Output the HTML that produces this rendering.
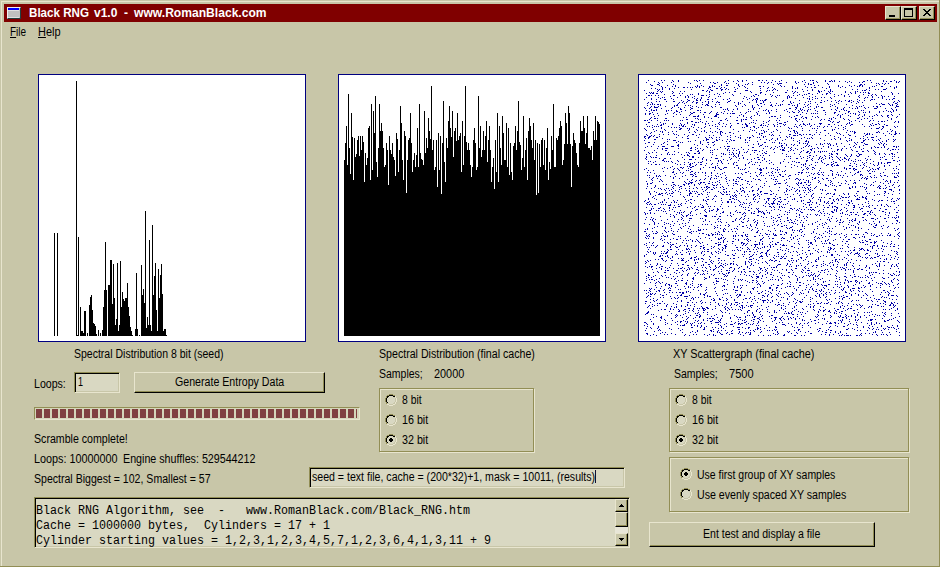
<!DOCTYPE html>
<html><head><meta charset="utf-8">
<style>
*{margin:0;padding:0;box-sizing:border-box}
html,body{width:940px;height:567px;overflow:hidden;background:#C8C6A8}
body{position:relative;font-family:"Liberation Sans",sans-serif;font-size:11px;color:#000}
.a{position:absolute}
.t{position:absolute;white-space:pre;font-size:12px;line-height:14px;transform-origin:0 0}
.raised{position:absolute;border:1px solid;border-color:#E8E5CE #000 #000 #E8E5CE;box-shadow:inset -1px -1px 0 #928E55;background:#C8C6A8}
.sunken{position:absolute;border:1px solid;border-color:#928E55 #E8E5CE #E8E5CE #928E55;box-shadow:inset 1px 1px 0 #000,inset -1px -1px 0 #C8C6A8;background:#D9D8C2}
.dk{position:absolute;border:1px solid #928E55}
.lt{position:absolute;border:1px solid #E8E5CE}
.box{position:absolute;border:1px solid #000080;background:#fff;width:268px;height:268px}
</style></head><body>
<!-- window frame -->
<div class="a" style="left:1px;top:1px;width:938px;height:1px;background:#E8E5CE"></div>
<div class="a" style="left:1px;top:1px;width:1px;height:566px;background:#E8E5CE"></div>
<div class="a" style="left:939px;top:0;width:1px;height:567px;background:#928E55"></div>
<div class="a" style="left:0;top:566px;width:940px;height:1px;background:#928E55"></div>
<!-- title bar -->
<div class="a" style="left:4px;top:4px;width:933px;height:18px;background:#800000"></div>
<div id="icon" class="a" style="left:7px;top:7px;width:14px;height:12px;background:#C0C0C0;border:1px solid;border-color:#F0F0F0 #204040 #204040 #F0F0F0"></div>
<div class="a" style="left:8px;top:8px;width:11px;height:2px;background:#0000FF"></div>
<div class="a" style="left:8px;top:10px;width:11px;height:1px;background:#E0E0E0"></div>
<div class="a" style="left:8px;top:17px;width:11px;height:1px;background:#E0E0E0"></div>
<div class="raised" style="left:885px;top:6px;width:16px;height:14px"></div>
<div class="a" style="left:889px;top:15px;width:6px;height:2px;background:#000"></div>
<div class="raised" style="left:901px;top:6px;width:16px;height:14px"></div>
<div class="a" style="left:904px;top:8px;width:9px;height:9px;border:1px solid #000;border-top-width:2px"></div>
<div class="raised" style="left:919px;top:6px;width:16px;height:14px"></div>
<svg class="a" style="left:923px;top:9px" width="8" height="7"><path d="M0 0h1v1h-1zM1 0h1v1h-1zM6 0h1v1h-1zM7 0h1v1h-1zM1 1h1v1h-1zM2 1h1v1h-1zM5 1h1v1h-1zM6 1h1v1h-1zM2 2h1v1h-1zM3 2h1v1h-1zM4 2h1v1h-1zM5 2h1v1h-1zM3 3h1v1h-1zM4 3h1v1h-1zM2 4h1v1h-1zM3 4h1v1h-1zM4 4h1v1h-1zM5 4h1v1h-1zM1 5h1v1h-1zM2 5h1v1h-1zM5 5h1v1h-1zM6 5h1v1h-1zM0 6h1v1h-1zM1 6h1v1h-1zM6 6h1v1h-1zM7 6h1v1h-1z" fill="#000" shape-rendering="crispEdges"/></svg>
<!-- menu -->

<!-- chart boxes -->
<div class="box" style="left:38px;top:74px"><svg id="c1" width="266" height="266" style="position:absolute;left:0;top:0"><path d="M15 158h1V261h-1zM18 158h1V261h-1zM37 6h1V261h-1zM38 260h1V261h-1zM39 162h1V261h-1zM41 232h1V261h-1zM42 256h1V261h-1zM43 256h1V261h-1zM44 258h1V261h-1zM45 236h1V261h-1zM46 236h1V261h-1zM48 258h1V261h-1zM50 230h1V261h-1zM51 222h1V261h-1zM52 220h1V261h-1zM53 235h1V261h-1zM54 248h1V261h-1zM55 249h1V261h-1zM56 251h1V261h-1zM57 259h1V261h-1zM59 255h1V261h-1zM61 258h1V261h-1zM63 255h1V261h-1zM64 232h1V261h-1zM65 215h1V261h-1zM66 167h1V261h-1zM67 215h1V261h-1zM69 210h1V261h-1zM70 210h1V261h-1zM71 185h1V261h-1zM72 185h1V261h-1zM73 229h1V261h-1zM74 189h1V261h-1zM75 223h1V261h-1zM76 250h1V261h-1zM77 244h1V261h-1zM78 188h1V261h-1zM79 256h1V261h-1zM80 250h1V261h-1zM81 186h1V261h-1zM82 232h1V261h-1zM83 217h1V261h-1zM84 224h1V261h-1zM85 226h1V261h-1zM86 223h1V261h-1zM87 223h1V261h-1zM88 208h1V261h-1zM89 232h1V261h-1zM90 241h1V261h-1zM91 252h1V261h-1zM92 256h1V261h-1zM93 260h1V261h-1zM96 254h1V261h-1zM97 198h1V261h-1zM98 254h1V261h-1zM100 260h1V261h-1zM102 190h1V261h-1zM103 220h1V261h-1zM104 214h1V261h-1zM105 228h1V261h-1zM106 136h1V261h-1zM107 253h1V261h-1zM108 242h1V261h-1zM109 250h1V261h-1zM110 165h1V261h-1zM111 250h1V261h-1zM112 256h1V261h-1zM113 150h1V261h-1zM114 220h1V261h-1zM115 201h1V261h-1zM116 188h1V261h-1zM117 235h1V261h-1zM118 256h1V261h-1zM119 194h1V261h-1zM120 223h1V261h-1zM121 200h1V261h-1zM122 189h1V261h-1zM123 219h1V261h-1zM124 256h1V261h-1zM125 254h1V261h-1zM126 254h1V261h-1zM127 260h1V261h-1z" fill="#000"/></svg></div>
<div class="box" style="left:338px;top:74px"><svg id="c2" width="266" height="266" style="position:absolute;left:0;top:0"><path d="M5 261V85H6V68H7V51H8V90H9V19H10V73H11V99H12V38H13V62H14V105H15V63H16V82H17V79H18V65H19V61H20V81H21V61H22V75H23V61H24V67H25V107H26V78H27V90H28V83H29V53H30V51H31V105H32V29H33V95H34V36H35V58H36V21H37V87H38V102H39V73H40V29H41V56H42V48H43V56H44V73H45V92H46V90H47V68H48V75H49V110H50V61H51V75H52V79H53V68H54V82H55V85H56V101H57V58H58V64H59V97H60V75H61V31H62V48H63V85H64V105H65V56H66V61H67V118H68V85H69V65H70V63H71V38H72V68H73V97H74V85H75V78H76V92H77V80H78V53H79V92H80V29H81V78H82V84H83V85H84V90H85V36H86V78H87V63H88V73H89V43H90V56H91V64H92V11H93V75H94V65H95V95H96V92H97V65H98V112H99V58H100V95H101V61H102V119H103V68H104V26H105V87H106V107H107V63H108V73H109V46H110V31H111V53H112V62H113V36H114V82H115V56H116V53H117V66H118V38H119V65H120V61H121V58H122V97H123V46H124V90H125V61H126V11H127V67H128V75H129V68H130V75H131V90H132V102H133V92H134V65H135V53H136V68H137V95H138V92H139V21H140V73H141V51H142V82H143V75H144V56H145V75H146V61H147V46H148V87H149V65H150V51H151V75H152V107H153V92H154V83H155V114H156V65H157V97H158V38H159V107H160V51H161V73H162V90H163V41H164V58H165V85H166V85H167V48H168V92H169V53H170V100H171V68H172V97H173V105H174V71H175V68H176V51H177V75H178V56H179V26H180V67H181V70H182V95H183V83H184V41H185V92H186V75H187V63H188V105H189V56H190V43H191V51H192V65H193V73H194V48H195V85H196V65H197V120H198V68H199V118H200V69H201V92H202V65H203V63H204V90H205V65H206V95H207V73H208V53H209V105H210V87H211V94H212V61H213V75H214V29H215V92H216V92H217V63H218V65H219V61H220V53H221V46H222V51H223V90H224V85H225V69H226V38H227V48H228V69H229V31H230V38H231V69H232V112H233V71H234V58H235V65H236V68H237V78H238V90H239V92H240V68H241V46H242V56H243V56H244V41H245V53H246V69H247V58H248V41H249V73H250V73H251V75H252V71H253V85H254V56H255V65H256V41H257V65H258V46H259V47H260V49H261V261z" fill="#000"/></svg></div>
<div class="box" style="left:638px;top:74px"><svg id="c3" width="266" height="266" style="position:absolute;left:0;top:0"><path d="M9 5h1v1h-1zm13 0h1v1h-1zm3 0h1v1h-1zm8 0h1v1h-1zm6 0h1v1h-1zm16 0h1v1h-1zm2 0h1v1h-1zm3 0h1v1h-1zm4 0h1v1h-1zm25 0h1v1h-1zm9 0h1v1h-1zm5 0h1v1h-1zm4 0h1v1h-1zm12 0h1v1h-1zm1 0h1v1h-1zm3 0h1v1h-1zm4 0h1v1h-1zm6 0h1v1h-1zm9 0h1v1h-1zm23 0h1v1h-1zm6 0h1v1h-1zm2 0h1v1h-1zm1 0h1v1h-1zm12 0h1v1h-1zm6 0h1v1h-1zm3 0h1v1h-1zm33 0h1v1h-1zm3 0h1v1h-1zm13 0h1v1h-1zm11 0h1v1h-1zm-240 1h1v1h-1zm19 0h1v1h-1zm5 0h1v1h-1zm19 0h1v1h-1zm28 0h1v1h-1zm8 0h1v1h-1zm5 0h1v1h-1zm4 0h1v1h-1zm33 0h1v1h-1zm4 0h1v1h-1zm16 0h1v1h-1zm7 0h1v1h-1zm14 0h1v1h-1zm9 0h1v1h-1zm4 0h1v1h-1zm1 0h1v1h-1zm2 0h1v1h-1zm2 0h1v1h-1zm5 0h1v1h-1zm6 0h1v1h-1zm4 0h1v1h-1zm14 0h1v1h-1zm1 0h1v1h-1zm19 0h1v1h-1zm3 0h1v1h-1zm4 0h1v1h-1zm1 0h1v1h-1zm5 0h1v1h-1zm3 0h1v1h-1zm-253 1h1v1h-1zm12 0h1v1h-1zm4 0h1v1h-1zm9 0h1v1h-1zm17 0h1v1h-1zm22 0h1v1h-1zm3 0h1v1h-1zm4 0h1v1h-1zm7 0h1v1h-1zm28 0h1v1h-1zm9 0h1v1h-1zm3 0h1v1h-1zm4 0h1v1h-1zm3 0h1v1h-1zm15 0h1v1h-1zm9 0h1v1h-1zm3 0h1v1h-1zm7 0h1v1h-1zm8 0h1v1h-1zm4 0h1v1h-1zm30 0h1v1h-1zm4 0h1v1h-1zm8 0h1v1h-1zm3 0h1v1h-1zm9 0h1v1h-1zm25 0h1v1h-1zm2 0h1v1h-1zm-239 1h1v1h-1zm31 0h1v1h-1zm10 0h1v1h-1zm14 0h1v1h-1zm1 0h1v1h-1zm11 0h1v1h-1zm2 0h1v1h-1zm8 0h1v1h-1zm12 0h1v1h-1zm19 0h1v1h-1zm10 0h1v1h-1zm2 0h1v1h-1zm1 0h1v1h-1zm1 0h1v1h-1zm15 0h1v1h-1zm12 0h1v1h-1zm5 0h1v1h-1zm14 0h1v1h-1zm49 0h1v1h-1zm2 0h1v1h-1zm4 0h1v1h-1zm3 0h1v1h-1zm3 0h1v1h-1zm-238 1h1v1h-1zm7 0h1v1h-1zm1 0h1v1h-1zm15 0h1v1h-1zm48 0h1v1h-1zm17 0h1v1h-1zm7 0h1v1h-1zm2 0h1v1h-1zm5 0h1v1h-1zm21 0h1v1h-1zm5 0h1v1h-1zm26 0h1v1h-1zm4 0h1v1h-1zm2 0h1v1h-1zm1 0h1v1h-1zm17 0h1v1h-1zm32 0h1v1h-1zm1 0h1v1h-1zm3 0h1v1h-1zm15 0h1v1h-1zm5 0h1v1h-1zm-233 1h1v1h-1zm1 0h1v1h-1zm7 0h1v1h-1zm8 0h1v1h-1zm8 0h1v1h-1zm22 0h1v1h-1zm4 0h1v1h-1zm11 0h1v1h-1zm9 0h1v1h-1zm5 0h1v1h-1zm1 0h1v1h-1zm11 0h1v1h-1zm4 0h1v1h-1zm38 0h1v1h-1zm34 0h1v1h-1zm4 0h1v1h-1zm20 0h1v1h-1zm11 0h1v1h-1zm5 0h1v1h-1zm5 0h1v1h-1zm1 0h1v1h-1zm2 0h1v1h-1zm14 0h1v1h-1zm-215 1h1v1h-1zm11 0h1v1h-1zm3 0h1v1h-1zm20 0h1v1h-1zm2 0h1v1h-1zm2 0h1v1h-1zm4 0h1v1h-1zm6 0h1v1h-1zm3 0h1v1h-1zm2 0h1v1h-1zm5 0h1v1h-1zm20 0h1v1h-1zm5 0h1v1h-1zm15 0h1v1h-1zm1 0h1v1h-1zm3 0h1v1h-1zm18 0h1v1h-1zm3 0h1v1h-1zm8 0h1v1h-1zm13 0h1v1h-1zm24 0h1v1h-1zm9 0h1v1h-1zm4 0h1v1h-1zm9 0h1v1h-1zm6 0h1v1h-1zm2 0h1v1h-1zm3 0h1v1h-1zm10 0h1v1h-1zm2 0h1v1h-1zm7 0h1v1h-1zm1 0h1v1h-1zm8 0h1v1h-1zm6 0h1v1h-1zm-234 1h1v1h-1zm3 0h1v1h-1zm13 0h1v1h-1zm5 0h1v1h-1zm1 0h1v1h-1zm3 0h1v1h-1zm3 0h1v1h-1zm2 0h1v1h-1zm4 0h1v1h-1zm3 0h1v1h-1zm10 0h1v1h-1zm1 0h1v1h-1zm11 0h1v1h-1zm3 0h1v1h-1zm10 0h1v1h-1zm11 0h1v1h-1zm23 0h1v1h-1zm4 0h1v1h-1zm20 0h1v1h-1zm5 0h1v1h-1zm10 0h1v1h-1zm4 0h1v1h-1zm3 0h1v1h-1zm1 0h1v1h-1zm7 0h1v1h-1zm7 0h1v1h-1zm11 0h1v1h-1zm5 0h1v1h-1zm24 0h1v1h-1zm25 0h1v1h-1zm2 0h1v1h-1zm-245 1h1v1h-1zm4 0h1v1h-1zm7 0h1v1h-1zm7 0h1v1h-1zm5 0h1v1h-1zm34 0h1v1h-1zm8 0h1v1h-1zm1 0h1v1h-1zm3 0h1v1h-1zm6 0h1v1h-1zm11 0h1v1h-1zm10 0h1v1h-1zm13 0h1v1h-1zm7 0h1v1h-1zm7 0h1v1h-1zm18 0h1v1h-1zm3 0h1v1h-1zm2 0h1v1h-1zm29 0h1v1h-1zm43 0h1v1h-1zm17 0h1v1h-1zm8 0h1v1h-1zm-237 1h1v1h-1zm2 0h1v1h-1zm3 0h1v1h-1zm7 0h1v1h-1zm22 0h1v1h-1zm19 0h1v1h-1zm11 0h1v1h-1zm1 0h1v1h-1zm3 0h1v1h-1zm3 0h1v1h-1zm7 0h1v1h-1zm38 0h1v1h-1zm2 0h1v1h-1zm27 0h1v1h-1zm10 0h1v1h-1zm18 0h1v1h-1zm22 0h1v1h-1zm5 0h1v1h-1zm9 0h1v1h-1zm9 0h1v1h-1zm3 0h1v1h-1zm5 0h1v1h-1zm1 0h1v1h-1zm1 0h1v1h-1zm-241 1h1v1h-1zm14 0h1v1h-1zm44 0h1v1h-1zm1 0h1v1h-1zm4 0h1v1h-1zm4 0h1v1h-1zm1 0h1v1h-1zm9 0h1v1h-1zm24 0h1v1h-1zm1 0h1v1h-1zm1 0h1v1h-1zm13 0h1v1h-1zm7 0h1v1h-1zm2 0h1v1h-1zm3 0h1v1h-1zm5 0h1v1h-1zm10 0h1v1h-1zm20 0h1v1h-1zm5 0h1v1h-1zm6 0h1v1h-1zm6 0h1v1h-1zm6 0h1v1h-1zm32 0h1v1h-1zm2 0h1v1h-1zm1 0h1v1h-1zm4 0h1v1h-1zm-212 1h1v1h-1zm3 0h1v1h-1zm2 0h1v1h-1zm10 0h1v1h-1zm8 0h1v1h-1zm4 0h1v1h-1zm22 0h1v1h-1zm3 0h1v1h-1zm25 0h1v1h-1zm1 0h1v1h-1zm15 0h1v1h-1zm16 0h1v1h-1zm26 0h1v1h-1zm3 0h1v1h-1zm8 0h1v1h-1zm15 0h1v1h-1zm1 0h1v1h-1zm2 0h1v1h-1zm7 0h1v1h-1zm2 0h1v1h-1zm2 0h1v1h-1zm13 0h1v1h-1zm10 0h1v1h-1zm2 0h1v1h-1zm24 0h1v1h-1zm-232 1h1v1h-1zm2 0h1v1h-1zm2 0h1v1h-1zm8 0h1v1h-1zm12 0h1v1h-1zm36 0h1v1h-1zm16 0h1v1h-1zm4 0h1v1h-1zm22 0h1v1h-1zm9 0h1v1h-1zm1 0h1v1h-1zm12 0h1v1h-1zm12 0h1v1h-1zm1 0h1v1h-1zm8 0h1v1h-1zm3 0h1v1h-1zm22 0h1v1h-1zm10 0h1v1h-1zm16 0h1v1h-1zm5 0h1v1h-1zm5 0h1v1h-1zm5 0h1v1h-1zm3 0h1v1h-1zm2 0h1v1h-1zm3 0h1v1h-1zm23 0h1v1h-1zm-245 1h1v1h-1zm4 0h1v1h-1zm2 0h1v1h-1zm1 0h1v1h-1zm3 0h1v1h-1zm1 0h1v1h-1zm15 0h1v1h-1zm7 0h1v1h-1zm3 0h1v1h-1zm16 0h1v1h-1zm19 0h1v1h-1zm6 0h1v1h-1zm17 0h1v1h-1zm20 0h1v1h-1zm33 0h1v1h-1zm15 0h1v1h-1zm1 0h1v1h-1zm8 0h1v1h-1zm9 0h1v1h-1zm1 0h1v1h-1zm3 0h1v1h-1zm21 0h1v1h-1zm4 0h1v1h-1zm13 0h1v1h-1zm1 0h1v1h-1zm23 0h1v1h-1zm6 0h1v1h-1zm-234 1h1v1h-1zm26 0h1v1h-1zm2 0h1v1h-1zm6 0h1v1h-1zm11 0h1v1h-1zm5 0h1v1h-1zm5 0h1v1h-1zm13 0h1v1h-1zm23 0h1v1h-1zm1 0h1v1h-1zm9 0h1v1h-1zm5 0h1v1h-1zm29 0h1v1h-1zm5 0h1v1h-1zm2 0h1v1h-1zm6 0h1v1h-1zm10 0h1v1h-1zm4 0h1v1h-1zm8 0h1v1h-1zm7 0h1v1h-1zm7 0h1v1h-1zm15 0h1v1h-1zm9 0h1v1h-1zm3 0h1v1h-1zm17 0h1v1h-1zm-244 1h1v1h-1zm1 0h1v1h-1zm2 0h1v1h-1zm4 0h1v1h-1zm3 0h1v1h-1zm15 0h1v1h-1zm1 0h1v1h-1zm6 0h1v1h-1zm7 0h1v1h-1zm14 0h1v1h-1zm1 0h1v1h-1zm1 0h1v1h-1zm3 0h1v1h-1zm27 0h1v1h-1zm20 0h1v1h-1zm5 0h1v1h-1zm14 0h1v1h-1zm5 0h1v1h-1zm2 0h1v1h-1zm9 0h1v1h-1zm5 0h1v1h-1zm4 0h1v1h-1zm5 0h1v1h-1zm36 0h1v1h-1zm6 0h1v1h-1zm15 0h1v1h-1zm9 0h1v1h-1zm3 0h1v1h-1zm5 0h1v1h-1zm5 0h1v1h-1zm-211 1h1v1h-1zm15 0h1v1h-1zm3 0h1v1h-1zm6 0h1v1h-1zm15 0h1v1h-1zm9 0h1v1h-1zm2 0h1v1h-1zm24 0h1v1h-1zm7 0h1v1h-1zm3 0h1v1h-1zm17 0h1v1h-1zm4 0h1v1h-1zm12 0h1v1h-1zm2 0h1v1h-1zm20 0h1v1h-1zm6 0h1v1h-1zm19 0h1v1h-1zm10 0h1v1h-1zm5 0h1v1h-1zm9 0h1v1h-1zm14 0h1v1h-1zm10 0h1v1h-1zm2 0h1v1h-1zm4 0h1v1h-1zm6 0h1v1h-1zm-248 1h1v1h-1zm12 0h1v1h-1zm4 0h1v1h-1zm2 0h1v1h-1zm13 0h1v1h-1zm8 0h1v1h-1zm3 0h1v1h-1zm4 0h1v1h-1zm9 0h1v1h-1zm7 0h1v1h-1zm38 0h1v1h-1zm30 0h1v1h-1zm11 0h1v1h-1zm2 0h1v1h-1zm2 0h1v1h-1zm12 0h1v1h-1zm9 0h1v1h-1zm9 0h1v1h-1zm3 0h1v1h-1zm6 0h1v1h-1zm29 0h1v1h-1zm6 0h1v1h-1zm2 0h1v1h-1zm5 0h1v1h-1zm6 0h1v1h-1zm4 0h1v1h-1zm-231 1h1v1h-1zm9 0h1v1h-1zm11 0h1v1h-1zm23 0h1v1h-1zm3 0h1v1h-1zm4 0h1v1h-1zm14 0h1v1h-1zm14 0h1v1h-1zm14 0h1v1h-1zm6 0h1v1h-1zm7 0h1v1h-1zm1 0h1v1h-1zm30 0h1v1h-1zm8 0h1v1h-1zm12 0h1v1h-1zm2 0h1v1h-1zm6 0h1v1h-1zm2 0h1v1h-1zm14 0h1v1h-1zm33 0h1v1h-1zm18 0h1v1h-1zm11 0h1v1h-1zm1 0h1v1h-1zm-250 1h1v1h-1zm7 0h1v1h-1zm5 0h1v1h-1zm8 0h1v1h-1zm1 0h1v1h-1zm8 0h1v1h-1zm14 0h1v1h-1zm9 0h1v1h-1zm4 0h1v1h-1zm7 0h1v1h-1zm1 0h1v1h-1zm4 0h1v1h-1zm11 0h1v1h-1zm4 0h1v1h-1zm20 0h1v1h-1zm6 0h1v1h-1zm2 0h1v1h-1zm2 0h1v1h-1zm8 0h1v1h-1zm1 0h1v1h-1zm43 0h1v1h-1zm3 0h1v1h-1zm45 0h1v1h-1zm14 0h1v1h-1zm1 0h1v1h-1zm2 0h1v1h-1zm12 0h1v1h-1zm3 0h1v1h-1zm3 0h1v1h-1zm-211 1h1v1h-1zm7 0h1v1h-1zm1 0h1v1h-1zm7 0h1v1h-1zm1 0h1v1h-1zm3 0h1v1h-1zm30 0h1v1h-1zm22 0h1v1h-1zm4 0h1v1h-1zm4 0h1v1h-1zm2 0h1v1h-1zm2 0h1v1h-1zm1 0h1v1h-1zm18 0h1v1h-1zm16 0h1v1h-1zm22 0h1v1h-1zm6 0h1v1h-1zm8 0h1v1h-1zm4 0h1v1h-1zm6 0h1v1h-1zm4 0h1v1h-1zm2 0h1v1h-1zm8 0h1v1h-1zm5 0h1v1h-1zm6 0h1v1h-1zm28 0h1v1h-1zm-242 1h1v1h-1zm3 0h1v1h-1zm7 0h1v1h-1zm7 0h1v1h-1zm1 0h1v1h-1zm9 0h1v1h-1zm4 0h1v1h-1zm6 0h1v1h-1zm12 0h1v1h-1zm3 0h1v1h-1zm4 0h1v1h-1zm5 0h1v1h-1zm11 0h1v1h-1zm1 0h1v1h-1zm13 0h1v1h-1zm14 0h1v1h-1zm7 0h1v1h-1zm19 0h1v1h-1zm8 0h1v1h-1zm18 0h1v1h-1zm2 0h1v1h-1zm14 0h1v1h-1zm7 0h1v1h-1zm7 0h1v1h-1zm3 0h1v1h-1zm7 0h1v1h-1zm1 0h1v1h-1zm4 0h1v1h-1zm4 0h1v1h-1zm37 0h1v1h-1zm5 0h1v1h-1zm-251 1h1v1h-1zm3 0h1v1h-1zm28 0h1v1h-1zm3 0h1v1h-1zm4 0h1v1h-1zm6 0h1v1h-1zm4 0h1v1h-1zm1 0h1v1h-1zm5 0h1v1h-1zm6 0h1v1h-1zm8 0h1v1h-1zm2 0h1v1h-1zm1 0h1v1h-1zm8 0h1v1h-1zm7 0h1v1h-1zm4 0h1v1h-1zm11 0h1v1h-1zm7 0h1v1h-1zm7 0h1v1h-1zm7 0h1v1h-1zm20 0h1v1h-1zm3 0h1v1h-1zm12 0h1v1h-1zm10 0h1v1h-1zm5 0h1v1h-1zm1 0h1v1h-1zm15 0h1v1h-1zm15 0h1v1h-1zm7 0h1v1h-1zm4 0h1v1h-1zm31 0h1v1h-1zm4 0h1v1h-1zm-250 1h1v1h-1zm5 0h1v1h-1zm26 0h1v1h-1zm6 0h1v1h-1zm12 0h1v1h-1zm12 0h1v1h-1zm30 0h1v1h-1zm2 0h1v1h-1zm20 0h1v1h-1zm1 0h1v1h-1zm15 0h1v1h-1zm15 0h1v1h-1zm8 0h1v1h-1zm11 0h1v1h-1zm28 0h1v1h-1zm18 0h1v1h-1zm20 0h1v1h-1zm5 0h1v1h-1zm7 0h1v1h-1zm7 0h1v1h-1zm1 0h1v1h-1zm-246 1h1v1h-1zm2 0h1v1h-1zm2 0h1v1h-1zm3 0h1v1h-1zm1 0h1v1h-1zm2 0h1v1h-1zm17 0h1v1h-1zm25 0h1v1h-1zm4 0h1v1h-1zm1 0h1v1h-1zm8 0h1v1h-1zm4 0h1v1h-1zm19 0h1v1h-1zm6 0h1v1h-1zm13 0h1v1h-1zm7 0h1v1h-1zm7 0h1v1h-1zm9 0h1v1h-1zm2 0h1v1h-1zm6 0h1v1h-1zm1 0h1v1h-1zm8 0h1v1h-1zm7 0h1v1h-1zm4 0h1v1h-1zm9 0h1v1h-1zm13 0h1v1h-1zm4 0h1v1h-1zm12 0h1v1h-1zm33 0h1v1h-1zm3 0h1v1h-1zm1 0h1v1h-1zm1 0h1v1h-1zm5 0h1v1h-1zm3 0h1v1h-1zm5 0h1v1h-1zm-250 1h1v1h-1zm13 0h1v1h-1zm14 0h1v1h-1zm2 0h1v1h-1zm1 0h1v1h-1zm8 0h1v1h-1zm3 0h1v1h-1zm2 0h1v1h-1zm15 0h1v1h-1zm2 0h1v1h-1zm1 0h1v1h-1zm27 0h1v1h-1zm10 0h1v1h-1zm7 0h1v1h-1zm6 0h1v1h-1zm12 0h1v1h-1zm1 0h1v1h-1zm4 0h1v1h-1zm3 0h1v1h-1zm2 0h1v1h-1zm12 0h1v1h-1zm2 0h1v1h-1zm3 0h1v1h-1zm10 0h1v1h-1zm25 0h1v1h-1zm20 0h1v1h-1zm11 0h1v1h-1zm27 0h1v1h-1zm2 0h1v1h-1zm4 0h1v1h-1zm-245 1h1v1h-1zm3 0h1v1h-1zm4 0h1v1h-1zm7 0h1v1h-1zm9 0h1v1h-1zm18 0h1v1h-1zm4 0h1v1h-1zm15 0h1v1h-1zm4 0h1v1h-1zm21 0h1v1h-1zm6 0h1v1h-1zm10 0h1v1h-1zm9 0h1v1h-1zm11 0h1v1h-1zm25 0h1v1h-1zm8 0h1v1h-1zm5 0h1v1h-1zm6 0h1v1h-1zm2 0h1v1h-1zm12 0h1v1h-1zm5 0h1v1h-1zm21 0h1v1h-1zm3 0h1v1h-1zm2 0h1v1h-1zm12 0h1v1h-1zm3 0h1v1h-1zm1 0h1v1h-1zm3 0h1v1h-1zm16 0h1v1h-1zm1 0h1v1h-1zm1 0h1v1h-1zm-254 1h1v1h-1zm6 0h1v1h-1zm4 0h1v1h-1zm1 0h1v1h-1zm1 0h1v1h-1zm1 0h1v1h-1zm15 0h1v1h-1zm6 0h1v1h-1zm6 0h1v1h-1zm6 0h1v1h-1zm8 0h1v1h-1zm3 0h1v1h-1zm11 0h1v1h-1zm8 0h1v1h-1zm1 0h1v1h-1zm31 0h1v1h-1zm2 0h1v1h-1zm41 0h1v1h-1zm1 0h1v1h-1zm7 0h1v1h-1zm5 0h1v1h-1zm8 0h1v1h-1zm5 0h1v1h-1zm1 0h1v1h-1zm15 0h1v1h-1zm7 0h1v1h-1zm5 0h1v1h-1zm8 0h1v1h-1zm7 0h1v1h-1zm4 0h1v1h-1zm9 0h1v1h-1zm18 0h1v1h-1zm-250 1h1v1h-1zm4 0h1v1h-1zm12 0h1v1h-1zm10 0h1v1h-1zm9 0h1v1h-1zm11 0h1v1h-1zm1 0h1v1h-1zm35 0h1v1h-1zm10 0h1v1h-1zm16 0h1v1h-1zm6 0h1v1h-1zm30 0h1v1h-1zm1 0h1v1h-1zm6 0h1v1h-1zm4 0h1v1h-1zm14 0h1v1h-1zm23 0h1v1h-1zm6 0h1v1h-1zm9 0h1v1h-1zm3 0h1v1h-1zm2 0h1v1h-1zm8 0h1v1h-1zm9 0h1v1h-1zm1 0h1v1h-1zm1 0h1v1h-1zm9 0h1v1h-1zm6 0h1v1h-1zm-240 1h1v1h-1zm5 0h1v1h-1zm24 0h1v1h-1zm1 0h1v1h-1zm9 0h1v1h-1zm33 0h1v1h-1zm2 0h1v1h-1zm2 0h1v1h-1zm6 0h1v1h-1zm4 0h1v1h-1zm11 0h1v1h-1zm5 0h1v1h-1zm13 0h1v1h-1zm10 0h1v1h-1zm10 0h1v1h-1zm9 0h1v1h-1zm5 0h1v1h-1zm2 0h1v1h-1zm6 0h1v1h-1zm2 0h1v1h-1zm21 0h1v1h-1zm4 0h1v1h-1zm6 0h1v1h-1zm2 0h1v1h-1zm49 0h1v1h-1zm4 0h1v1h-1zm-250 1h1v1h-1zm5 0h1v1h-1zm2 0h1v1h-1zm1 0h1v1h-1zm2 0h1v1h-1zm10 0h1v1h-1zm2 0h1v1h-1zm3 0h1v1h-1zm5 0h1v1h-1zm9 0h1v1h-1zm12 0h1v1h-1zm1 0h1v1h-1zm2 0h1v1h-1zm28 0h1v1h-1zm35 0h1v1h-1zm2 0h1v1h-1zm3 0h1v1h-1zm3 0h1v1h-1zm13 0h1v1h-1zm14 0h1v1h-1zm3 0h1v1h-1zm3 0h1v1h-1zm3 0h1v1h-1zm8 0h1v1h-1zm8 0h1v1h-1zm1 0h1v1h-1zm12 0h1v1h-1zm8 0h1v1h-1zm2 0h1v1h-1zm15 0h1v1h-1zm2 0h1v1h-1zm23 0h1v1h-1zm7 0h1v1h-1zm3 0h1v1h-1zm-247 1h1v1h-1zm17 0h1v1h-1zm10 0h1v1h-1zm1 0h1v1h-1zm4 0h1v1h-1zm30 0h1v1h-1zm13 0h1v1h-1zm8 0h1v1h-1zm16 0h1v1h-1zm2 0h1v1h-1zm8 0h1v1h-1zm10 0h1v1h-1zm8 0h1v1h-1zm11 0h1v1h-1zm5 0h1v1h-1zm7 0h1v1h-1zm8 0h1v1h-1zm10 0h1v1h-1zm22 0h1v1h-1zm9 0h1v1h-1zm1 0h1v1h-1zm9 0h1v1h-1zm11 0h1v1h-1zm10 0h1v1h-1zm4 0h1v1h-1zm5 0h1v1h-1zm2 0h1v1h-1zm3 0h1v1h-1zm-241 1h1v1h-1zm22 0h1v1h-1zm5 0h1v1h-1zm11 0h1v1h-1zm3 0h1v1h-1zm1 0h1v1h-1zm6 0h1v1h-1zm4 0h1v1h-1zm1 0h1v1h-1zm5 0h1v1h-1zm7 0h1v1h-1zm4 0h1v1h-1zm19 0h1v1h-1zm6 0h1v1h-1zm10 0h1v1h-1zm13 0h1v1h-1zm20 0h1v1h-1zm4 0h1v1h-1zm1 0h1v1h-1zm4 0h1v1h-1zm4 0h1v1h-1zm23 0h1v1h-1zm9 0h1v1h-1zm1 0h1v1h-1zm13 0h1v1h-1zm11 0h1v1h-1zm4 0h1v1h-1zm2 0h1v1h-1zm4 0h1v1h-1zm10 0h1v1h-1zm12 0h1v1h-1zm-246 1h1v1h-1zm4 0h1v1h-1zm1 0h1v1h-1zm7 0h1v1h-1zm10 0h1v1h-1zm6 0h1v1h-1zm18 0h1v1h-1zm1 0h1v1h-1zm17 0h1v1h-1zm7 0h1v1h-1zm7 0h1v1h-1zm4 0h1v1h-1zm3 0h1v1h-1zm2 0h1v1h-1zm1 0h1v1h-1zm1 0h1v1h-1zm11 0h1v1h-1zm12 0h1v1h-1zm9 0h1v1h-1zm3 0h1v1h-1zm37 0h1v1h-1zm5 0h1v1h-1zm2 0h1v1h-1zm2 0h1v1h-1zm2 0h1v1h-1zm17 0h1v1h-1zm11 0h1v1h-1zm5 0h1v1h-1zm3 0h1v1h-1zm2 0h1v1h-1zm-210 1h1v1h-1zm4 0h1v1h-1zm4 0h1v1h-1zm12 0h1v1h-1zm11 0h1v1h-1zm4 0h1v1h-1zm10 0h1v1h-1zm13 0h1v1h-1zm13 0h1v1h-1zm1 0h1v1h-1zm1 0h1v1h-1zm23 0h1v1h-1zm16 0h1v1h-1zm43 0h1v1h-1zm25 0h1v1h-1zm13 0h1v1h-1zm4 0h1v1h-1zm13 0h1v1h-1zm4 0h1v1h-1zm5 0h1v1h-1zm12 0h1v1h-1zm15 0h1v1h-1zm8 0h1v1h-1zm-241 1h1v1h-1zm31 0h1v1h-1zm9 0h1v1h-1zm17 0h1v1h-1zm1 0h1v1h-1zm23 0h1v1h-1zm4 0h1v1h-1zm11 0h1v1h-1zm5 0h1v1h-1zm21 0h1v1h-1zm16 0h1v1h-1zm1 0h1v1h-1zm40 0h1v1h-1zm3 0h1v1h-1zm8 0h1v1h-1zm10 0h1v1h-1zm6 0h1v1h-1zm10 0h1v1h-1zm3 0h1v1h-1zm4 0h1v1h-1zm6 0h1v1h-1zm1 0h1v1h-1zm4 0h1v1h-1zm-238 1h1v1h-1zm19 0h1v1h-1zm20 0h1v1h-1zm1 0h1v1h-1zm1 0h1v1h-1zm2 0h1v1h-1zm1 0h1v1h-1zm6 0h1v1h-1zm10 0h1v1h-1zm1 0h1v1h-1zm1 0h1v1h-1zm14 0h1v1h-1zm13 0h1v1h-1zm8 0h1v1h-1zm20 0h1v1h-1zm1 0h1v1h-1zm2 0h1v1h-1zm1 0h1v1h-1zm14 0h1v1h-1zm5 0h1v1h-1zm8 0h1v1h-1zm10 0h1v1h-1zm5 0h1v1h-1zm23 0h1v1h-1zm10 0h1v1h-1zm12 0h1v1h-1zm7 0h1v1h-1zm3 0h1v1h-1zm10 0h1v1h-1zm5 0h1v1h-1zm10 0h1v1h-1zm-246 1h1v1h-1zm32 0h1v1h-1zm3 0h1v1h-1zm18 0h1v1h-1zm4 0h1v1h-1zm10 0h1v1h-1zm19 0h1v1h-1zm9 0h1v1h-1zm4 0h1v1h-1zm19 0h1v1h-1zm11 0h1v1h-1zm11 0h1v1h-1zm10 0h1v1h-1zm4 0h1v1h-1zm1 0h1v1h-1zm9 0h1v1h-1zm3 0h1v1h-1zm15 0h1v1h-1zm7 0h1v1h-1zm19 0h1v1h-1zm29 0h1v1h-1zm8 0h1v1h-1zm-246 1h1v1h-1zm4 0h1v1h-1zm1 0h1v1h-1zm2 0h1v1h-1zm8 0h1v1h-1zm1 0h1v1h-1zm29 0h1v1h-1zm2 0h1v1h-1zm14 0h1v1h-1zm15 0h1v1h-1zm25 0h1v1h-1zm26 0h1v1h-1zm18 0h1v1h-1zm1 0h1v1h-1zm7 0h1v1h-1zm3 0h1v1h-1zm23 0h1v1h-1zm2 0h1v1h-1zm4 0h1v1h-1zm8 0h1v1h-1zm14 0h1v1h-1zm1 0h1v1h-1zm6 0h1v1h-1zm3 0h1v1h-1zm5 0h1v1h-1zm19 0h1v1h-1zm-242 1h1v1h-1zm37 0h1v1h-1zm1 0h1v1h-1zm11 0h1v1h-1zm2 0h1v1h-1zm25 0h1v1h-1zm16 0h1v1h-1zm2 0h1v1h-1zm2 0h1v1h-1zm1 0h1v1h-1zm49 0h1v1h-1zm4 0h1v1h-1zm12 0h1v1h-1zm10 0h1v1h-1zm3 0h1v1h-1zm7 0h1v1h-1zm13 0h1v1h-1zm4 0h1v1h-1zm13 0h1v1h-1zm30 0h1v1h-1zm-247 1h1v1h-1zm1 0h1v1h-1zm2 0h1v1h-1zm4 0h1v1h-1zm6 0h1v1h-1zm7 0h1v1h-1zm2 0h1v1h-1zm2 0h1v1h-1zm12 0h1v1h-1zm2 0h1v1h-1zm38 0h1v1h-1zm1 0h1v1h-1zm6 0h1v1h-1zm9 0h1v1h-1zm1 0h1v1h-1zm4 0h1v1h-1zm12 0h1v1h-1zm3 0h1v1h-1zm13 0h1v1h-1zm7 0h1v1h-1zm3 0h1v1h-1zm17 0h1v1h-1zm24 0h1v1h-1zm8 0h1v1h-1zm1 0h1v1h-1zm20 0h1v1h-1zm6 0h1v1h-1zm15 0h1v1h-1zm3 0h1v1h-1zm14 0h1v1h-1zm-196 1h1v1h-1zm1 0h1v1h-1zm8 0h1v1h-1zm6 0h1v1h-1zm6 0h1v1h-1zm29 0h1v1h-1zm22 0h1v1h-1zm5 0h1v1h-1zm19 0h1v1h-1zm10 0h1v1h-1zm5 0h1v1h-1zm28 0h1v1h-1zm3 0h1v1h-1zm6 0h1v1h-1zm12 0h1v1h-1zm8 0h1v1h-1zm10 0h1v1h-1zm9 0h1v1h-1zm3 0h1v1h-1zm1 0h1v1h-1zm2 0h1v1h-1zm11 0h1v1h-1zm3 0h1v1h-1zm-250 1h1v1h-1zm1 0h1v1h-1zm11 0h1v1h-1zm27 0h1v1h-1zm8 0h1v1h-1zm1 0h1v1h-1zm2 0h1v1h-1zm4 0h1v1h-1zm17 0h1v1h-1zm32 0h1v1h-1zm2 0h1v1h-1zm13 0h1v1h-1zm11 0h1v1h-1zm7 0h1v1h-1zm1 0h1v1h-1zm47 0h1v1h-1zm5 0h1v1h-1zm1 0h1v1h-1zm11 0h1v1h-1zm45 0h1v1h-1zm4 0h1v1h-1zm-235 1h1v1h-1zm2 0h1v1h-1zm7 0h1v1h-1zm8 0h1v1h-1zm7 0h1v1h-1zm18 0h1v1h-1zm3 0h1v1h-1zm10 0h1v1h-1zm5 0h1v1h-1zm7 0h1v1h-1zm7 0h1v1h-1zm1 0h1v1h-1zm7 0h1v1h-1zm4 0h1v1h-1zm6 0h1v1h-1zm8 0h1v1h-1zm16 0h1v1h-1zm1 0h1v1h-1zm1 0h1v1h-1zm22 0h1v1h-1zm6 0h1v1h-1zm10 0h1v1h-1zm1 0h1v1h-1zm1 0h1v1h-1zm26 0h1v1h-1zm2 0h1v1h-1zm23 0h1v1h-1zm6 0h1v1h-1zm-232 1h1v1h-1zm11 0h1v1h-1zm4 0h1v1h-1zm2 0h1v1h-1zm9 0h1v1h-1zm9 0h1v1h-1zm3 0h1v1h-1zm8 0h1v1h-1zm2 0h1v1h-1zm11 0h1v1h-1zm10 0h1v1h-1zm4 0h1v1h-1zm7 0h1v1h-1zm16 0h1v1h-1zm3 0h1v1h-1zm1 0h1v1h-1zm15 0h1v1h-1zm7 0h1v1h-1zm5 0h1v1h-1zm4 0h1v1h-1zm6 0h1v1h-1zm2 0h1v1h-1zm10 0h1v1h-1zm5 0h1v1h-1zm3 0h1v1h-1zm1 0h1v1h-1zm3 0h1v1h-1zm2 0h1v1h-1zm5 0h1v1h-1zm6 0h1v1h-1zm8 0h1v1h-1zm1 0h1v1h-1zm5 0h1v1h-1zm12 0h1v1h-1zm5 0h1v1h-1zm1 0h1v1h-1zm10 0h1v1h-1zm8 0h1v1h-1zm5 0h1v1h-1zm1 0h1v1h-1zm3 0h1v1h-1zm5 0h1v1h-1zm-232 1h1v1h-1zm8 0h1v1h-1zm1 0h1v1h-1zm18 0h1v1h-1zm2 0h1v1h-1zm2 0h1v1h-1zm11 0h1v1h-1zm15 0h1v1h-1zm3 0h1v1h-1zm19 0h1v1h-1zm15 0h1v1h-1zm1 0h1v1h-1zm13 0h1v1h-1zm1 0h1v1h-1zm2 0h1v1h-1zm2 0h1v1h-1zm9 0h1v1h-1zm10 0h1v1h-1zm15 0h1v1h-1zm6 0h1v1h-1zm6 0h1v1h-1zm27 0h1v1h-1zm3 0h1v1h-1zm9 0h1v1h-1zm21 0h1v1h-1zm2 0h1v1h-1zm13 0h1v1h-1zm1 0h1v1h-1zm-240 1h1v1h-1zm2 0h1v1h-1zm5 0h1v1h-1zm2 0h1v1h-1zm2 0h1v1h-1zm10 0h1v1h-1zm14 0h1v1h-1zm1 0h1v1h-1zm2 0h1v1h-1zm6 0h1v1h-1zm14 0h1v1h-1zm10 0h1v1h-1zm2 0h1v1h-1zm5 0h1v1h-1zm3 0h1v1h-1zm5 0h1v1h-1zm16 0h1v1h-1zm1 0h1v1h-1zm6 0h1v1h-1zm1 0h1v1h-1zm13 0h1v1h-1zm7 0h1v1h-1zm3 0h1v1h-1zm3 0h1v1h-1zm14 0h1v1h-1zm2 0h1v1h-1zm5 0h1v1h-1zm9 0h1v1h-1zm7 0h1v1h-1zm2 0h1v1h-1zm5 0h1v1h-1zm3 0h1v1h-1zm4 0h1v1h-1zm14 0h1v1h-1zm19 0h1v1h-1zm5 0h1v1h-1zm13 0h1v1h-1zm1 0h1v1h-1zm11 0h1v1h-1zm3 0h1v1h-1zm-245 1h1v1h-1zm9 0h1v1h-1zm10 0h1v1h-1zm3 0h1v1h-1zm2 0h1v1h-1zm3 0h1v1h-1zm14 0h1v1h-1zm5 0h1v1h-1zm6 0h1v1h-1zm26 0h1v1h-1zm12 0h1v1h-1zm2 0h1v1h-1zm6 0h1v1h-1zm4 0h1v1h-1zm4 0h1v1h-1zm4 0h1v1h-1zm26 0h1v1h-1zm9 0h1v1h-1zm26 0h1v1h-1zm12 0h1v1h-1zm8 0h1v1h-1zm36 0h1v1h-1zm4 0h1v1h-1zm12 0h1v1h-1zm-251 1h1v1h-1zm17 0h1v1h-1zm19 0h1v1h-1zm1 0h1v1h-1zm6 0h1v1h-1zm2 0h1v1h-1zm12 0h1v1h-1zm9 0h1v1h-1zm7 0h1v1h-1zm39 0h1v1h-1zm33 0h1v1h-1zm2 0h1v1h-1zm11 0h1v1h-1zm10 0h1v1h-1zm2 0h1v1h-1zm3 0h1v1h-1zm21 0h1v1h-1zm7 0h1v1h-1zm26 0h1v1h-1zm5 0h1v1h-1zm1 0h1v1h-1zm1 0h1v1h-1zm4 0h1v1h-1zm-237 1h1v1h-1zm8 0h1v1h-1zm11 0h1v1h-1zm15 0h1v1h-1zm1 0h1v1h-1zm9 0h1v1h-1zm7 0h1v1h-1zm23 0h1v1h-1zm14 0h1v1h-1zm17 0h1v1h-1zm18 0h1v1h-1zm8 0h1v1h-1zm56 0h1v1h-1zm2 0h1v1h-1zm9 0h1v1h-1zm38 0h1v1h-1zm9 0h1v1h-1zm-244 1h1v1h-1zm10 0h1v1h-1zm9 0h1v1h-1zm23 0h1v1h-1zm9 0h1v1h-1zm7 0h1v1h-1zm39 0h1v1h-1zm9 0h1v1h-1zm2 0h1v1h-1zm7 0h1v1h-1zm2 0h1v1h-1zm14 0h1v1h-1zm11 0h1v1h-1zm5 0h1v1h-1zm1 0h1v1h-1zm8 0h1v1h-1zm7 0h1v1h-1zm7 0h1v1h-1zm8 0h1v1h-1zm1 0h1v1h-1zm7 0h1v1h-1zm15 0h1v1h-1zm45 0h1v1h-1zm-238 1h1v1h-1zm6 0h1v1h-1zm2 0h1v1h-1zm10 0h1v1h-1zm4 0h1v1h-1zm18 0h1v1h-1zm7 0h1v1h-1zm3 0h1v1h-1zm6 0h1v1h-1zm5 0h1v1h-1zm5 0h1v1h-1zm1 0h1v1h-1zm17 0h1v1h-1zm11 0h1v1h-1zm15 0h1v1h-1zm2 0h1v1h-1zm7 0h1v1h-1zm17 0h1v1h-1zm4 0h1v1h-1zm2 0h1v1h-1zm54 0h1v1h-1zm2 0h1v1h-1zm2 0h1v1h-1zm24 0h1v1h-1zm9 0h1v1h-1zm4 0h1v1h-1zm4 0h1v1h-1zm-244 1h1v1h-1zm11 0h1v1h-1zm6 0h1v1h-1zm21 0h1v1h-1zm6 0h1v1h-1zm11 0h1v1h-1zm6 0h1v1h-1zm5 0h1v1h-1zm3 0h1v1h-1zm2 0h1v1h-1zm7 0h1v1h-1zm1 0h1v1h-1zm26 0h1v1h-1zm8 0h1v1h-1zm7 0h1v1h-1zm9 0h1v1h-1zm14 0h1v1h-1zm3 0h1v1h-1zm19 0h1v1h-1zm4 0h1v1h-1zm16 0h1v1h-1zm10 0h1v1h-1zm8 0h1v1h-1zm1 0h1v1h-1zm21 0h1v1h-1zm1 0h1v1h-1zm2 0h1v1h-1zm16 0h1v1h-1zm-245 1h1v1h-1zm23 0h1v1h-1zm47 0h1v1h-1zm5 0h1v1h-1zm8 0h1v1h-1zm26 0h1v1h-1zm2 0h1v1h-1zm1 0h1v1h-1zm33 0h1v1h-1zm2 0h1v1h-1zm31 0h1v1h-1zm9 0h1v1h-1zm2 0h1v1h-1zm15 0h1v1h-1zm10 0h1v1h-1zm3 0h1v1h-1zm2 0h1v1h-1zm14 0h1v1h-1zm6 0h1v1h-1zm6 0h1v1h-1zm1 0h1v1h-1zm3 0h1v1h-1zm-253 1h1v1h-1zm13 0h1v1h-1zm4 0h1v1h-1zm5 0h1v1h-1zm6 0h1v1h-1zm2 0h1v1h-1zm8 0h1v1h-1zm8 0h1v1h-1zm1 0h1v1h-1zm6 0h1v1h-1zm21 0h1v1h-1zm39 0h1v1h-1zm10 0h1v1h-1zm3 0h1v1h-1zm17 0h1v1h-1zm1 0h1v1h-1zm9 0h1v1h-1zm1 0h1v1h-1zm3 0h1v1h-1zm3 0h1v1h-1zm3 0h1v1h-1zm1 0h1v1h-1zm4 0h1v1h-1zm5 0h1v1h-1zm21 0h1v1h-1zm8 0h1v1h-1zm18 0h1v1h-1zm1 0h1v1h-1zm2 0h1v1h-1zm3 0h1v1h-1zm19 0h1v1h-1zm3 0h1v1h-1zm1 0h1v1h-1zm-248 1h1v1h-1zm4 0h1v1h-1zm3 0h1v1h-1zm24 0h1v1h-1zm10 0h1v1h-1zm8 0h1v1h-1zm13 0h1v1h-1zm4 0h1v1h-1zm8 0h1v1h-1zm9 0h1v1h-1zm10 0h1v1h-1zm12 0h1v1h-1zm9 0h1v1h-1zm10 0h1v1h-1zm2 0h1v1h-1zm6 0h1v1h-1zm14 0h1v1h-1zm1 0h1v1h-1zm1 0h1v1h-1zm2 0h1v1h-1zm4 0h1v1h-1zm11 0h1v1h-1zm13 0h1v1h-1zm5 0h1v1h-1zm13 0h1v1h-1zm6 0h1v1h-1zm1 0h1v1h-1zm15 0h1v1h-1zm20 0h1v1h-1zm-241 1h1v1h-1zm1 0h1v1h-1zm4 0h1v1h-1zm1 0h1v1h-1zm3 0h1v1h-1zm6 0h1v1h-1zm28 0h1v1h-1zm40 0h1v1h-1zm8 0h1v1h-1zm18 0h1v1h-1zm10 0h1v1h-1zm2 0h1v1h-1zm21 0h1v1h-1zm3 0h1v1h-1zm45 0h1v1h-1zm21 0h1v1h-1zm8 0h1v1h-1zm13 0h1v1h-1zm17 0h1v1h-1zm-249 1h1v1h-1zm4 0h1v1h-1zm1 0h1v1h-1zm7 0h1v1h-1zm1 0h1v1h-1zm19 0h1v1h-1zm6 0h1v1h-1zm16 0h1v1h-1zm7 0h1v1h-1zm4 0h1v1h-1zm2 0h1v1h-1zm5 0h1v1h-1zm3 0h1v1h-1zm11 0h1v1h-1zm8 0h1v1h-1zm2 0h1v1h-1zm7 0h1v1h-1zm2 0h1v1h-1zm1 0h1v1h-1zm7 0h1v1h-1zm2 0h1v1h-1zm4 0h1v1h-1zm17 0h1v1h-1zm7 0h1v1h-1zm4 0h1v1h-1zm13 0h1v1h-1zm7 0h1v1h-1zm27 0h1v1h-1zm7 0h1v1h-1zm22 0h1v1h-1zm4 0h1v1h-1zm1 0h1v1h-1zm1 0h1v1h-1zm-228 1h1v1h-1zm3 0h1v1h-1zm14 0h1v1h-1zm25 0h1v1h-1zm1 0h1v1h-1zm18 0h1v1h-1zm6 0h1v1h-1zm28 0h1v1h-1zm9 0h1v1h-1zm23 0h1v1h-1zm5 0h1v1h-1zm14 0h1v1h-1zm2 0h1v1h-1zm8 0h1v1h-1zm6 0h1v1h-1zm2 0h1v1h-1zm3 0h1v1h-1zm8 0h1v1h-1zm14 0h1v1h-1zm6 0h1v1h-1zm9 0h1v1h-1zm11 0h1v1h-1zm3 0h1v1h-1zm17 0h1v1h-1zm-226 1h1v1h-1zm1 0h1v1h-1zm12 0h1v1h-1zm2 0h1v1h-1zm37 0h1v1h-1zm1 0h1v1h-1zm1 0h1v1h-1zm8 0h1v1h-1zm3 0h1v1h-1zm8 0h1v1h-1zm3 0h1v1h-1zm15 0h1v1h-1zm15 0h1v1h-1zm6 0h1v1h-1zm5 0h1v1h-1zm6 0h1v1h-1zm8 0h1v1h-1zm46 0h1v1h-1zm4 0h1v1h-1zm5 0h1v1h-1zm11 0h1v1h-1zm14 0h1v1h-1zm3 0h1v1h-1zm4 0h1v1h-1zm6 0h1v1h-1zm10 0h1v1h-1zm5 0h1v1h-1zm2 0h1v1h-1zm-251 1h1v1h-1zm29 0h1v1h-1zm1 0h1v1h-1zm1 0h1v1h-1zm20 0h1v1h-1zm8 0h1v1h-1zm3 0h1v1h-1zm10 0h1v1h-1zm1 0h1v1h-1zm5 0h1v1h-1zm9 0h1v1h-1zm2 0h1v1h-1zm1 0h1v1h-1zm11 0h1v1h-1zm4 0h1v1h-1zm20 0h1v1h-1zm6 0h1v1h-1zm7 0h1v1h-1zm11 0h1v1h-1zm6 0h1v1h-1zm7 0h1v1h-1zm18 0h1v1h-1zm22 0h1v1h-1zm3 0h1v1h-1zm2 0h1v1h-1zm12 0h1v1h-1zm1 0h1v1h-1zm9 0h1v1h-1zm3 0h1v1h-1zm3 0h1v1h-1zm7 0h1v1h-1zm8 0h1v1h-1zm-227 1h1v1h-1zm11 0h1v1h-1zm10 0h1v1h-1zm2 0h1v1h-1zm10 0h1v1h-1zm14 0h1v1h-1zm12 0h1v1h-1zm3 0h1v1h-1zm28 0h1v1h-1zm40 0h1v1h-1zm8 0h1v1h-1zm1 0h1v1h-1zm2 0h1v1h-1zm39 0h1v1h-1zm16 0h1v1h-1zm19 0h1v1h-1zm4 0h1v1h-1zm7 0h1v1h-1zm-245 1h1v1h-1zm1 0h1v1h-1zm5 0h1v1h-1zm10 0h1v1h-1zm12 0h1v1h-1zm4 0h1v1h-1zm2 0h1v1h-1zm18 0h1v1h-1zm7 0h1v1h-1zm1 0h1v1h-1zm4 0h1v1h-1zm1 0h1v1h-1zm32 0h1v1h-1zm2 0h1v1h-1zm17 0h1v1h-1zm1 0h1v1h-1zm7 0h1v1h-1zm2 0h1v1h-1zm5 0h1v1h-1zm20 0h1v1h-1zm9 0h1v1h-1zm46 0h1v1h-1zm3 0h1v1h-1zm4 0h1v1h-1zm1 0h1v1h-1zm18 0h1v1h-1zm-235 1h1v1h-1zm18 0h1v1h-1zm37 0h1v1h-1zm27 0h1v1h-1zm31 0h1v1h-1zm21 0h1v1h-1zm2 0h1v1h-1zm3 0h1v1h-1zm15 0h1v1h-1zm4 0h1v1h-1zm2 0h1v1h-1zm2 0h1v1h-1zm13 0h1v1h-1zm4 0h1v1h-1zm3 0h1v1h-1zm2 0h1v1h-1zm7 0h1v1h-1zm5 0h1v1h-1zm14 0h1v1h-1zm9 0h1v1h-1zm14 0h1v1h-1zm3 0h1v1h-1zm3 0h1v1h-1zm-231 1h1v1h-1zm8 0h1v1h-1zm6 0h1v1h-1zm11 0h1v1h-1zm16 0h1v1h-1zm8 0h1v1h-1zm6 0h1v1h-1zm6 0h1v1h-1zm39 0h1v1h-1zm5 0h1v1h-1zm4 0h1v1h-1zm24 0h1v1h-1zm5 0h1v1h-1zm3 0h1v1h-1zm13 0h1v1h-1zm9 0h1v1h-1zm4 0h1v1h-1zm2 0h1v1h-1zm6 0h1v1h-1zm2 0h1v1h-1zm6 0h1v1h-1zm13 0h1v1h-1zm7 0h1v1h-1zm9 0h1v1h-1zm1 0h1v1h-1zm1 0h1v1h-1zm12 0h1v1h-1zm4 0h1v1h-1zm3 0h1v1h-1zm-209 1h1v1h-1zm1 0h1v1h-1zm19 0h1v1h-1zm16 0h1v1h-1zm35 0h1v1h-1zm12 0h1v1h-1zm1 0h1v1h-1zm20 0h1v1h-1zm1 0h1v1h-1zm4 0h1v1h-1zm7 0h1v1h-1zm4 0h1v1h-1zm9 0h1v1h-1zm3 0h1v1h-1zm21 0h1v1h-1zm3 0h1v1h-1zm21 0h1v1h-1zm9 0h1v1h-1zm20 0h1v1h-1zm-236 1h1v1h-1zm4 0h1v1h-1zm7 0h1v1h-1zm4 0h1v1h-1zm1 0h1v1h-1zm1 0h1v1h-1zm7 0h1v1h-1zm1 0h1v1h-1zm1 0h1v1h-1zm5 0h1v1h-1zm28 0h1v1h-1zm18 0h1v1h-1zm3 0h1v1h-1zm1 0h1v1h-1zm1 0h1v1h-1zm30 0h1v1h-1zm6 0h1v1h-1zm2 0h1v1h-1zm8 0h1v1h-1zm4 0h1v1h-1zm2 0h1v1h-1zm24 0h1v1h-1zm3 0h1v1h-1zm3 0h1v1h-1zm12 0h1v1h-1zm5 0h1v1h-1zm9 0h1v1h-1zm7 0h1v1h-1zm9 0h1v1h-1zm6 0h1v1h-1zm15 0h1v1h-1zm10 0h1v1h-1zm9 0h1v1h-1zm1 0h1v1h-1zm2 0h1v1h-1zm2 0h1v1h-1zm-253 1h1v1h-1zm46 0h1v1h-1zm4 0h1v1h-1zm12 0h1v1h-1zm3 0h1v1h-1zm10 0h1v1h-1zm21 0h1v1h-1zm11 0h1v1h-1zm1 0h1v1h-1zm18 0h1v1h-1zm6 0h1v1h-1zm5 0h1v1h-1zm2 0h1v1h-1zm4 0h1v1h-1zm3 0h1v1h-1zm12 0h1v1h-1zm14 0h1v1h-1zm11 0h1v1h-1zm22 0h1v1h-1zm5 0h1v1h-1zm4 0h1v1h-1zm12 0h1v1h-1zm4 0h1v1h-1zm2 0h1v1h-1zm1 0h1v1h-1zm3 0h1v1h-1zm3 0h1v1h-1zm12 0h1v1h-1zm-239 1h1v1h-1zm5 0h1v1h-1zm3 0h1v1h-1zm1 0h1v1h-1zm1 0h1v1h-1zm11 0h1v1h-1zm12 0h1v1h-1zm1 0h1v1h-1zm6 0h1v1h-1zm3 0h1v1h-1zm25 0h1v1h-1zm3 0h1v1h-1zm4 0h1v1h-1zm2 0h1v1h-1zm29 0h1v1h-1zm7 0h1v1h-1zm4 0h1v1h-1zm10 0h1v1h-1zm6 0h1v1h-1zm5 0h1v1h-1zm6 0h1v1h-1zm11 0h1v1h-1zm2 0h1v1h-1zm4 0h1v1h-1zm3 0h1v1h-1zm10 0h1v1h-1zm11 0h1v1h-1zm4 0h1v1h-1zm17 0h1v1h-1zm8 0h1v1h-1zm17 0h1v1h-1zm-226 1h1v1h-1zm33 0h1v1h-1zm8 0h1v1h-1zm11 0h1v1h-1zm3 0h1v1h-1zm10 0h1v1h-1zm11 0h1v1h-1zm5 0h1v1h-1zm5 0h1v1h-1zm25 0h1v1h-1zm7 0h1v1h-1zm2 0h1v1h-1zm1 0h1v1h-1zm8 0h1v1h-1zm6 0h1v1h-1zm13 0h1v1h-1zm1 0h1v1h-1zm26 0h1v1h-1zm1 0h1v1h-1zm3 0h1v1h-1zm10 0h1v1h-1zm10 0h1v1h-1zm26 0h1v1h-1zm5 0h1v1h-1zm1 0h1v1h-1zm2 0h1v1h-1zm3 0h1v1h-1zm-254 1h1v1h-1zm10 0h1v1h-1zm11 0h1v1h-1zm1 0h1v1h-1zm24 0h1v1h-1zm1 0h1v1h-1zm7 0h1v1h-1zm4 0h1v1h-1zm8 0h1v1h-1zm2 0h1v1h-1zm15 0h1v1h-1zm2 0h1v1h-1zm4 0h1v1h-1zm3 0h1v1h-1zm16 0h1v1h-1zm2 0h1v1h-1zm1 0h1v1h-1zm1 0h1v1h-1zm6 0h1v1h-1zm20 0h1v1h-1zm1 0h1v1h-1zm1 0h1v1h-1zm6 0h1v1h-1zm3 0h1v1h-1zm10 0h1v1h-1zm8 0h1v1h-1zm26 0h1v1h-1zm4 0h1v1h-1zm11 0h1v1h-1zm15 0h1v1h-1zm6 0h1v1h-1zm17 0h1v1h-1zm-216 1h1v1h-1zm23 0h1v1h-1zm1 0h1v1h-1zm41 0h1v1h-1zm8 0h1v1h-1zm12 0h1v1h-1zm7 0h1v1h-1zm22 0h1v1h-1zm13 0h1v1h-1zm6 0h1v1h-1zm1 0h1v1h-1zm6 0h1v1h-1zm4 0h1v1h-1zm2 0h1v1h-1zm2 0h1v1h-1zm2 0h1v1h-1zm2 0h1v1h-1zm6 0h1v1h-1zm2 0h1v1h-1zm22 0h1v1h-1zm1 0h1v1h-1zm5 0h1v1h-1zm1 0h1v1h-1zm5 0h1v1h-1zm6 0h1v1h-1zm-226 1h1v1h-1zm4 0h1v1h-1zm4 0h1v1h-1zm12 0h1v1h-1zm10 0h1v1h-1zm8 0h1v1h-1zm2 0h1v1h-1zm11 0h1v1h-1zm11 0h1v1h-1zm2 0h1v1h-1zm17 0h1v1h-1zm3 0h1v1h-1zm7 0h1v1h-1zm5 0h1v1h-1zm2 0h1v1h-1zm8 0h1v1h-1zm10 0h1v1h-1zm10 0h1v1h-1zm26 0h1v1h-1zm6 0h1v1h-1zm1 0h1v1h-1zm3 0h1v1h-1zm4 0h1v1h-1zm6 0h1v1h-1zm55 0h1v1h-1zm22 0h1v1h-1zm-248 1h1v1h-1zm18 0h1v1h-1zm22 0h1v1h-1zm5 0h1v1h-1zm1 0h1v1h-1zm3 0h1v1h-1zm1 0h1v1h-1zm22 0h1v1h-1zm2 0h1v1h-1zm10 0h1v1h-1zm3 0h1v1h-1zm3 0h1v1h-1zm23 0h1v1h-1zm3 0h1v1h-1zm1 0h1v1h-1zm16 0h1v1h-1zm12 0h1v1h-1zm15 0h1v1h-1zm20 0h1v1h-1zm2 0h1v1h-1zm5 0h1v1h-1zm1 0h1v1h-1zm21 0h1v1h-1zm16 0h1v1h-1zm5 0h1v1h-1zm5 0h1v1h-1zm7 0h1v1h-1zm1 0h1v1h-1zm-246 1h1v1h-1zm15 0h1v1h-1zm6 0h1v1h-1zm2 0h1v1h-1zm3 0h1v1h-1zm2 0h1v1h-1zm7 0h1v1h-1zm6 0h1v1h-1zm25 0h1v1h-1zm11 0h1v1h-1zm2 0h1v1h-1zm4 0h1v1h-1zm2 0h1v1h-1zm2 0h1v1h-1zm5 0h1v1h-1zm12 0h1v1h-1zm7 0h1v1h-1zm29 0h1v1h-1zm13 0h1v1h-1zm32 0h1v1h-1zm1 0h1v1h-1zm5 0h1v1h-1zm8 0h1v1h-1zm6 0h1v1h-1zm8 0h1v1h-1zm1 0h1v1h-1zm1 0h1v1h-1zm14 0h1v1h-1zm4 0h1v1h-1zm6 0h1v1h-1zm4 0h1v1h-1zm3 0h1v1h-1zm2 0h1v1h-1zm-238 1h1v1h-1zm28 0h1v1h-1zm3 0h1v1h-1zm1 0h1v1h-1zm28 0h1v1h-1zm18 0h1v1h-1zm4 0h1v1h-1zm4 0h1v1h-1zm18 0h1v1h-1zm3 0h1v1h-1zm6 0h1v1h-1zm40 0h1v1h-1zm1 0h1v1h-1zm6 0h1v1h-1zm8 0h1v1h-1zm5 0h1v1h-1zm17 0h1v1h-1zm5 0h1v1h-1zm5 0h1v1h-1zm3 0h1v1h-1zm-213 1h1v1h-1zm4 0h1v1h-1zm39 0h1v1h-1zm3 0h1v1h-1zm1 0h1v1h-1zm28 0h1v1h-1zm12 0h1v1h-1zm2 0h1v1h-1zm3 0h1v1h-1zm48 0h1v1h-1zm2 0h1v1h-1zm2 0h1v1h-1zm10 0h1v1h-1zm7 0h1v1h-1zm6 0h1v1h-1zm7 0h1v1h-1zm5 0h1v1h-1zm6 0h1v1h-1zm5 0h1v1h-1zm11 0h1v1h-1zm3 0h1v1h-1zm7 0h1v1h-1zm1 0h1v1h-1zm10 0h1v1h-1zm16 0h1v1h-1zm8 0h1v1h-1zm2 0h1v1h-1zm-248 1h1v1h-1zm5 0h1v1h-1zm2 0h1v1h-1zm2 0h1v1h-1zm1 0h1v1h-1zm26 0h1v1h-1zm10 0h1v1h-1zm1 0h1v1h-1zm5 0h1v1h-1zm5 0h1v1h-1zm8 0h1v1h-1zm18 0h1v1h-1zm7 0h1v1h-1zm7 0h1v1h-1zm14 0h1v1h-1zm1 0h1v1h-1zm4 0h1v1h-1zm41 0h1v1h-1zm6 0h1v1h-1zm10 0h1v1h-1zm3 0h1v1h-1zm7 0h1v1h-1zm3 0h1v1h-1zm5 0h1v1h-1zm3 0h1v1h-1zm4 0h1v1h-1zm36 0h1v1h-1zm2 0h1v1h-1zm16 0h1v1h-1zm-253 1h1v1h-1zm14 0h1v1h-1zm5 0h1v1h-1zm1 0h1v1h-1zm5 0h1v1h-1zm32 0h1v1h-1zm13 0h1v1h-1zm1 0h1v1h-1zm1 0h1v1h-1zm14 0h1v1h-1zm8 0h1v1h-1zm4 0h1v1h-1zm11 0h1v1h-1zm10 0h1v1h-1zm26 0h1v1h-1zm6 0h1v1h-1zm1 0h1v1h-1zm4 0h1v1h-1zm6 0h1v1h-1zm5 0h1v1h-1zm7 0h1v1h-1zm2 0h1v1h-1zm4 0h1v1h-1zm4 0h1v1h-1zm9 0h1v1h-1zm6 0h1v1h-1zm1 0h1v1h-1zm4 0h1v1h-1zm16 0h1v1h-1zm27 0h1v1h-1zm-246 1h1v1h-1zm17 0h1v1h-1zm21 0h1v1h-1zm5 0h1v1h-1zm1 0h1v1h-1zm1 0h1v1h-1zm4 0h1v1h-1zm7 0h1v1h-1zm4 0h1v1h-1zm17 0h1v1h-1zm7 0h1v1h-1zm17 0h1v1h-1zm4 0h1v1h-1zm7 0h1v1h-1zm1 0h1v1h-1zm5 0h1v1h-1zm20 0h1v1h-1zm27 0h1v1h-1zm7 0h1v1h-1zm5 0h1v1h-1zm9 0h1v1h-1zm7 0h1v1h-1zm3 0h1v1h-1zm4 0h1v1h-1zm2 0h1v1h-1zm7 0h1v1h-1zm12 0h1v1h-1zm3 0h1v1h-1zm10 0h1v1h-1zm5 0h1v1h-1zm1 0h1v1h-1zm-224 1h1v1h-1zm1 0h1v1h-1zm14 0h1v1h-1zm29 0h1v1h-1zm4 0h1v1h-1zm8 0h1v1h-1zm2 0h1v1h-1zm7 0h1v1h-1zm11 0h1v1h-1zm24 0h1v1h-1zm7 0h1v1h-1zm37 0h1v1h-1zm1 0h1v1h-1zm5 0h1v1h-1zm9 0h1v1h-1zm19 0h1v1h-1zm8 0h1v1h-1zm3 0h1v1h-1zm7 0h1v1h-1zm2 0h1v1h-1zm6 0h1v1h-1zm27 0h1v1h-1zm1 0h1v1h-1zm5 0h1v1h-1zm-251 1h1v1h-1zm2 0h1v1h-1zm5 0h1v1h-1zm9 0h1v1h-1zm2 0h1v1h-1zm2 0h1v1h-1zm3 0h1v1h-1zm7 0h1v1h-1zm24 0h1v1h-1zm16 0h1v1h-1zm3 0h1v1h-1zm30 0h1v1h-1zm15 0h1v1h-1zm17 0h1v1h-1zm9 0h1v1h-1zm2 0h1v1h-1zm12 0h1v1h-1zm15 0h1v1h-1zm12 0h1v1h-1zm11 0h1v1h-1zm9 0h1v1h-1zm2 0h1v1h-1zm18 0h1v1h-1zm24 0h1v1h-1zm-244 1h1v1h-1zm19 0h1v1h-1zm12 0h1v1h-1zm4 0h1v1h-1zm6 0h1v1h-1zm4 0h1v1h-1zm2 0h1v1h-1zm1 0h1v1h-1zm20 0h1v1h-1zm13 0h1v1h-1zm2 0h1v1h-1zm13 0h1v1h-1zm6 0h1v1h-1zm2 0h1v1h-1zm3 0h1v1h-1zm11 0h1v1h-1zm9 0h1v1h-1zm8 0h1v1h-1zm8 0h1v1h-1zm2 0h1v1h-1zm1 0h1v1h-1zm16 0h1v1h-1zm2 0h1v1h-1zm5 0h1v1h-1zm9 0h1v1h-1zm4 0h1v1h-1zm1 0h1v1h-1zm26 0h1v1h-1zm4 0h1v1h-1zm12 0h1v1h-1zm3 0h1v1h-1zm6 0h1v1h-1zm1 0h1v1h-1zm1 0h1v1h-1zm1 0h1v1h-1zm-242 1h1v1h-1zm27 0h1v1h-1zm15 0h1v1h-1zm2 0h1v1h-1zm14 0h1v1h-1zm6 0h1v1h-1zm5 0h1v1h-1zm5 0h1v1h-1zm6 0h1v1h-1zm5 0h1v1h-1zm15 0h1v1h-1zm21 0h1v1h-1zm11 0h1v1h-1zm25 0h1v1h-1zm19 0h1v1h-1zm9 0h1v1h-1zm17 0h1v1h-1zm4 0h1v1h-1zm10 0h1v1h-1zm6 0h1v1h-1zm8 0h1v1h-1zm3 0h1v1h-1zm3 0h1v1h-1zm3 0h1v1h-1zm-236 1h1v1h-1zm4 0h1v1h-1zm1 0h1v1h-1zm3 0h1v1h-1zm18 0h1v1h-1zm3 0h1v1h-1zm4 0h1v1h-1zm5 0h1v1h-1zm1 0h1v1h-1zm6 0h1v1h-1zm4 0h1v1h-1zm1 0h1v1h-1zm10 0h1v1h-1zm22 0h1v1h-1zm12 0h1v1h-1zm7 0h1v1h-1zm2 0h1v1h-1zm19 0h1v1h-1zm18 0h1v1h-1zm10 0h1v1h-1zm2 0h1v1h-1zm2 0h1v1h-1zm6 0h1v1h-1zm16 0h1v1h-1zm1 0h1v1h-1zm3 0h1v1h-1zm1 0h1v1h-1zm5 0h1v1h-1zm19 0h1v1h-1zm7 0h1v1h-1zm10 0h1v1h-1zm5 0h1v1h-1zm21 0h1v1h-1zm-209 1h1v1h-1zm5 0h1v1h-1zm10 0h1v1h-1zm12 0h1v1h-1zm19 0h1v1h-1zm1 0h1v1h-1zm8 0h1v1h-1zm14 0h1v1h-1zm35 0h1v1h-1zm9 0h1v1h-1zm6 0h1v1h-1zm6 0h1v1h-1zm11 0h1v1h-1zm5 0h1v1h-1zm3 0h1v1h-1zm2 0h1v1h-1zm1 0h1v1h-1zm1 0h1v1h-1zm11 0h1v1h-1zm1 0h1v1h-1zm10 0h1v1h-1zm4 0h1v1h-1zm10 0h1v1h-1zm3 0h1v1h-1zm7 0h1v1h-1zm5 0h1v1h-1zm-217 1h1v1h-1zm15 0h1v1h-1zm2 0h1v1h-1zm3 0h1v1h-1zm1 0h1v1h-1zm22 0h1v1h-1zm70 0h1v1h-1zm12 0h1v1h-1zm8 0h1v1h-1zm27 0h1v1h-1zm20 0h1v1h-1zm4 0h1v1h-1zm10 0h1v1h-1zm18 0h1v1h-1zm12 0h1v1h-1zm-232 1h1v1h-1zm6 0h1v1h-1zm10 0h1v1h-1zm1 0h1v1h-1zm2 0h1v1h-1zm7 0h1v1h-1zm1 0h1v1h-1zm12 0h1v1h-1zm6 0h1v1h-1zm3 0h1v1h-1zm1 0h1v1h-1zm2 0h1v1h-1zm3 0h1v1h-1zm6 0h1v1h-1zm1 0h1v1h-1zm1 0h1v1h-1zm8 0h1v1h-1zm4 0h1v1h-1zm11 0h1v1h-1zm17 0h1v1h-1zm11 0h1v1h-1zm14 0h1v1h-1zm10 0h1v1h-1zm6 0h1v1h-1zm5 0h1v1h-1zm1 0h1v1h-1zm31 0h1v1h-1zm19 0h1v1h-1zm6 0h1v1h-1zm10 0h1v1h-1zm-233 1h1v1h-1zm16 0h1v1h-1zm5 0h1v1h-1zm7 0h1v1h-1zm3 0h1v1h-1zm5 0h1v1h-1zm6 0h1v1h-1zm12 0h1v1h-1zm15 0h1v1h-1zm4 0h1v1h-1zm4 0h1v1h-1zm15 0h1v1h-1zm7 0h1v1h-1zm12 0h1v1h-1zm3 0h1v1h-1zm3 0h1v1h-1zm3 0h1v1h-1zm5 0h1v1h-1zm2 0h1v1h-1zm33 0h1v1h-1zm2 0h1v1h-1zm6 0h1v1h-1zm6 0h1v1h-1zm24 0h1v1h-1zm2 0h1v1h-1zm3 0h1v1h-1zm1 0h1v1h-1zm3 0h1v1h-1zm1 0h1v1h-1zm8 0h1v1h-1zm10 0h1v1h-1zm5 0h1v1h-1zm1 0h1v1h-1zm15 0h1v1h-1zm3 0h1v1h-1zm-252 1h1v1h-1zm29 0h1v1h-1zm5 0h1v1h-1zm12 0h1v1h-1zm10 0h1v1h-1zm20 0h1v1h-1zm1 0h1v1h-1zm19 0h1v1h-1zm2 0h1v1h-1zm2 0h1v1h-1zm15 0h1v1h-1zm1 0h1v1h-1zm1 0h1v1h-1zm14 0h1v1h-1zm2 0h1v1h-1zm2 0h1v1h-1zm24 0h1v1h-1zm4 0h1v1h-1zm5 0h1v1h-1zm34 0h1v1h-1zm7 0h1v1h-1zm2 0h1v1h-1zm1 0h1v1h-1zm14 0h1v1h-1zm3 0h1v1h-1zm2 0h1v1h-1zm3 0h1v1h-1zm7 0h1v1h-1zm13 0h1v1h-1zm-250 1h1v1h-1zm5 0h1v1h-1zm26 0h1v1h-1zm7 0h1v1h-1zm2 0h1v1h-1zm26 0h1v1h-1zm46 0h1v1h-1zm1 0h1v1h-1zm16 0h1v1h-1zm8 0h1v1h-1zm17 0h1v1h-1zm17 0h1v1h-1zm11 0h1v1h-1zm1 0h1v1h-1zm23 0h1v1h-1zm13 0h1v1h-1zm2 0h1v1h-1zm25 0h1v1h-1zm-231 1h1v1h-1zm10 0h1v1h-1zm18 0h1v1h-1zm1 0h1v1h-1zm56 0h1v1h-1zm24 0h1v1h-1zm10 0h1v1h-1zm2 0h1v1h-1zm48 0h1v1h-1zm9 0h1v1h-1zm17 0h1v1h-1zm2 0h1v1h-1zm8 0h1v1h-1zm4 0h1v1h-1zm2 0h1v1h-1zm-227 1h1v1h-1zm3 0h1v1h-1zm22 0h1v1h-1zm1 0h1v1h-1zm7 0h1v1h-1zm3 0h1v1h-1zm7 0h1v1h-1zm5 0h1v1h-1zm3 0h1v1h-1zm4 0h1v1h-1zm3 0h1v1h-1zm6 0h1v1h-1zm13 0h1v1h-1zm21 0h1v1h-1zm1 0h1v1h-1zm9 0h1v1h-1zm5 0h1v1h-1zm1 0h1v1h-1zm7 0h1v1h-1zm3 0h1v1h-1zm4 0h1v1h-1zm3 0h1v1h-1zm20 0h1v1h-1zm1 0h1v1h-1zm2 0h1v1h-1zm1 0h1v1h-1zm4 0h1v1h-1zm2 0h1v1h-1zm10 0h1v1h-1zm3 0h1v1h-1zm2 0h1v1h-1zm14 0h1v1h-1zm13 0h1v1h-1zm7 0h1v1h-1zm1 0h1v1h-1zm25 0h1v1h-1zm15 0h1v1h-1zm-244 1h1v1h-1zm22 0h1v1h-1zm6 0h1v1h-1zm12 0h1v1h-1zm11 0h1v1h-1zm6 0h1v1h-1zm6 0h1v1h-1zm5 0h1v1h-1zm13 0h1v1h-1zm3 0h1v1h-1zm3 0h1v1h-1zm9 0h1v1h-1zm10 0h1v1h-1zm6 0h1v1h-1zm6 0h1v1h-1zm29 0h1v1h-1zm10 0h1v1h-1zm3 0h1v1h-1zm3 0h1v1h-1zm15 0h1v1h-1zm13 0h1v1h-1zm10 0h1v1h-1zm14 0h1v1h-1zm1 0h1v1h-1zm10 0h1v1h-1zm12 0h1v1h-1zm2 0h1v1h-1zm2 0h1v1h-1zm2 0h1v1h-1zm-224 1h1v1h-1zm16 0h1v1h-1zm1 0h1v1h-1zm1 0h1v1h-1zm3 0h1v1h-1zm25 0h1v1h-1zm22 0h1v1h-1zm17 0h1v1h-1zm20 0h1v1h-1zm1 0h1v1h-1zm5 0h1v1h-1zm10 0h1v1h-1zm3 0h1v1h-1zm15 0h1v1h-1zm5 0h1v1h-1zm1 0h1v1h-1zm3 0h1v1h-1zm10 0h1v1h-1zm4 0h1v1h-1zm2 0h1v1h-1zm16 0h1v1h-1zm6 0h1v1h-1zm1 0h1v1h-1zm-214 1h1v1h-1zm2 0h1v1h-1zm7 0h1v1h-1zm3 0h1v1h-1zm6 0h1v1h-1zm20 0h1v1h-1zm8 0h1v1h-1zm12 0h1v1h-1zm6 0h1v1h-1zm4 0h1v1h-1zm10 0h1v1h-1zm31 0h1v1h-1zm5 0h1v1h-1zm2 0h1v1h-1zm6 0h1v1h-1zm2 0h1v1h-1zm2 0h1v1h-1zm7 0h1v1h-1zm9 0h1v1h-1zm1 0h1v1h-1zm19 0h1v1h-1zm14 0h1v1h-1zm5 0h1v1h-1zm4 0h1v1h-1zm6 0h1v1h-1zm2 0h1v1h-1zm3 0h1v1h-1zm9 0h1v1h-1zm8 0h1v1h-1zm2 0h1v1h-1zm12 0h1v1h-1zm6 0h1v1h-1zm4 0h1v1h-1zm1 0h1v1h-1zm12 0h1v1h-1zm-241 1h1v1h-1zm2 0h1v1h-1zm2 0h1v1h-1zm10 0h1v1h-1zm5 0h1v1h-1zm7 0h1v1h-1zm10 0h1v1h-1zm3 0h1v1h-1zm1 0h1v1h-1zm12 0h1v1h-1zm8 0h1v1h-1zm2 0h1v1h-1zm32 0h1v1h-1zm7 0h1v1h-1zm20 0h1v1h-1zm5 0h1v1h-1zm1 0h1v1h-1zm5 0h1v1h-1zm19 0h1v1h-1zm40 0h1v1h-1zm20 0h1v1h-1zm3 0h1v1h-1zm11 0h1v1h-1zm6 0h1v1h-1zm7 0h1v1h-1zm4 0h1v1h-1zm-249 1h1v1h-1zm4 0h1v1h-1zm20 0h1v1h-1zm38 0h1v1h-1zm10 0h1v1h-1zm5 0h1v1h-1zm11 0h1v1h-1zm1 0h1v1h-1zm2 0h1v1h-1zm34 0h1v1h-1zm38 0h1v1h-1zm3 0h1v1h-1zm3 0h1v1h-1zm17 0h1v1h-1zm7 0h1v1h-1zm20 0h1v1h-1zm3 0h1v1h-1zm6 0h1v1h-1zm3 0h1v1h-1zm2 0h1v1h-1zm18 0h1v1h-1zm1 0h1v1h-1zm1 0h1v1h-1zm-244 1h1v1h-1zm5 0h1v1h-1zm16 0h1v1h-1zm6 0h1v1h-1zm26 0h1v1h-1zm5 0h1v1h-1zm4 0h1v1h-1zm2 0h1v1h-1zm9 0h1v1h-1zm14 0h1v1h-1zm14 0h1v1h-1zm12 0h1v1h-1zm6 0h1v1h-1zm18 0h1v1h-1zm7 0h1v1h-1zm1 0h1v1h-1zm17 0h1v1h-1zm1 0h1v1h-1zm7 0h1v1h-1zm4 0h1v1h-1zm1 0h1v1h-1zm6 0h1v1h-1zm28 0h1v1h-1zm3 0h1v1h-1zm2 0h1v1h-1zm1 0h1v1h-1zm-216 1h1v1h-1zm9 0h1v1h-1zm27 0h1v1h-1zm5 0h1v1h-1zm8 0h1v1h-1zm4 0h1v1h-1zm6 0h1v1h-1zm16 0h1v1h-1zm7 0h1v1h-1zm3 0h1v1h-1zm5 0h1v1h-1zm1 0h1v1h-1zm13 0h1v1h-1zm3 0h1v1h-1zm1 0h1v1h-1zm14 0h1v1h-1zm2 0h1v1h-1zm1 0h1v1h-1zm10 0h1v1h-1zm9 0h1v1h-1zm3 0h1v1h-1zm2 0h1v1h-1zm3 0h1v1h-1zm9 0h1v1h-1zm11 0h1v1h-1zm43 0h1v1h-1zm17 0h1v1h-1zm-231 1h1v1h-1zm9 0h1v1h-1zm30 0h1v1h-1zm5 0h1v1h-1zm3 0h1v1h-1zm20 0h1v1h-1zm10 0h1v1h-1zm4 0h1v1h-1zm12 0h1v1h-1zm15 0h1v1h-1zm24 0h1v1h-1zm15 0h1v1h-1zm7 0h1v1h-1zm2 0h1v1h-1zm10 0h1v1h-1zm10 0h1v1h-1zm2 0h1v1h-1zm15 0h1v1h-1zm5 0h1v1h-1zm4 0h1v1h-1zm5 0h1v1h-1zm27 0h1v1h-1zm4 0h1v1h-1zm8 0h1v1h-1zm-252 1h1v1h-1zm13 0h1v1h-1zm3 0h1v1h-1zm22 0h1v1h-1zm5 0h1v1h-1zm6 0h1v1h-1zm14 0h1v1h-1zm8 0h1v1h-1zm9 0h1v1h-1zm9 0h1v1h-1zm1 0h1v1h-1zm2 0h1v1h-1zm9 0h1v1h-1zm1 0h1v1h-1zm3 0h1v1h-1zm15 0h1v1h-1zm9 0h1v1h-1zm2 0h1v1h-1zm31 0h1v1h-1zm11 0h1v1h-1zm12 0h1v1h-1zm15 0h1v1h-1zm29 0h1v1h-1zm10 0h1v1h-1zm2 0h1v1h-1zm3 0h1v1h-1zm-238 1h1v1h-1zm20 0h1v1h-1zm1 0h1v1h-1zm12 0h1v1h-1zm5 0h1v1h-1zm1 0h1v1h-1zm1 0h1v1h-1zm8 0h1v1h-1zm1 0h1v1h-1zm2 0h1v1h-1zm1 0h1v1h-1zm8 0h1v1h-1zm3 0h1v1h-1zm4 0h1v1h-1zm67 0h1v1h-1zm12 0h1v1h-1zm3 0h1v1h-1zm3 0h1v1h-1zm1 0h1v1h-1zm3 0h1v1h-1zm2 0h1v1h-1zm8 0h1v1h-1zm12 0h1v1h-1zm8 0h1v1h-1zm16 0h1v1h-1zm1 0h1v1h-1zm18 0h1v1h-1zm7 0h1v1h-1zm10 0h1v1h-1zm4 0h1v1h-1zm3 0h1v1h-1zm-250 1h1v1h-1zm3 0h1v1h-1zm1 0h1v1h-1zm35 0h1v1h-1zm2 0h1v1h-1zm1 0h1v1h-1zm2 0h1v1h-1zm7 0h1v1h-1zm2 0h1v1h-1zm8 0h1v1h-1zm1 0h1v1h-1zm18 0h1v1h-1zm6 0h1v1h-1zm2 0h1v1h-1zm1 0h1v1h-1zm11 0h1v1h-1zm17 0h1v1h-1zm12 0h1v1h-1zm2 0h1v1h-1zm1 0h1v1h-1zm1 0h1v1h-1zm5 0h1v1h-1zm11 0h1v1h-1zm2 0h1v1h-1zm2 0h1v1h-1zm1 0h1v1h-1zm19 0h1v1h-1zm12 0h1v1h-1zm9 0h1v1h-1zm4 0h1v1h-1zm8 0h1v1h-1zm2 0h1v1h-1zm9 0h1v1h-1zm19 0h1v1h-1zm5 0h1v1h-1zm-241 1h1v1h-1zm16 0h1v1h-1zm3 0h1v1h-1zm7 0h1v1h-1zm1 0h1v1h-1zm9 0h1v1h-1zm1 0h1v1h-1zm4 0h1v1h-1zm6 0h1v1h-1zm5 0h1v1h-1zm6 0h1v1h-1zm7 0h1v1h-1zm5 0h1v1h-1zm3 0h1v1h-1zm17 0h1v1h-1zm5 0h1v1h-1zm7 0h1v1h-1zm7 0h1v1h-1zm18 0h1v1h-1zm1 0h1v1h-1zm22 0h1v1h-1zm9 0h1v1h-1zm4 0h1v1h-1zm15 0h1v1h-1zm5 0h1v1h-1zm18 0h1v1h-1zm18 0h1v1h-1zm5 0h1v1h-1zm22 0h1v1h-1zm-238 1h1v1h-1zm16 0h1v1h-1zm4 0h1v1h-1zm3 0h1v1h-1zm6 0h1v1h-1zm10 0h1v1h-1zm19 0h1v1h-1zm1 0h1v1h-1zm2 0h1v1h-1zm12 0h1v1h-1zm5 0h1v1h-1zm7 0h1v1h-1zm24 0h1v1h-1zm23 0h1v1h-1zm11 0h1v1h-1zm5 0h1v1h-1zm5 0h1v1h-1zm1 0h1v1h-1zm16 0h1v1h-1zm1 0h1v1h-1zm6 0h1v1h-1zm2 0h1v1h-1zm5 0h1v1h-1zm1 0h1v1h-1zm30 0h1v1h-1zm3 0h1v1h-1zm6 0h1v1h-1zm6 0h1v1h-1zm7 0h1v1h-1zm7 0h1v1h-1zm-252 1h1v1h-1zm8 0h1v1h-1zm18 0h1v1h-1zm7 0h1v1h-1zm1 0h1v1h-1zm8 0h1v1h-1zm17 0h1v1h-1zm1 0h1v1h-1zm15 0h1v1h-1zm30 0h1v1h-1zm8 0h1v1h-1zm9 0h1v1h-1zm20 0h1v1h-1zm27 0h1v1h-1zm12 0h1v1h-1zm8 0h1v1h-1zm16 0h1v1h-1zm3 0h1v1h-1zm5 0h1v1h-1zm2 0h1v1h-1zm16 0h1v1h-1zm2 0h1v1h-1zm9 0h1v1h-1zm9 0h1v1h-1zm-244 1h1v1h-1zm18 0h1v1h-1zm7 0h1v1h-1zm17 0h1v1h-1zm5 0h1v1h-1zm3 0h1v1h-1zm2 0h1v1h-1zm2 0h1v1h-1zm1 0h1v1h-1zm4 0h1v1h-1zm3 0h1v1h-1zm4 0h1v1h-1zm3 0h1v1h-1zm19 0h1v1h-1zm4 0h1v1h-1zm5 0h1v1h-1zm11 0h1v1h-1zm17 0h1v1h-1zm13 0h1v1h-1zm7 0h1v1h-1zm3 0h1v1h-1zm2 0h1v1h-1zm3 0h1v1h-1zm3 0h1v1h-1zm5 0h1v1h-1zm34 0h1v1h-1zm3 0h1v1h-1zm3 0h1v1h-1zm9 0h1v1h-1zm2 0h1v1h-1zm11 0h1v1h-1zm2 0h1v1h-1zm7 0h1v1h-1zm8 0h1v1h-1zm-248 1h1v1h-1zm5 0h1v1h-1zm7 0h1v1h-1zm2 0h1v1h-1zm6 0h1v1h-1zm2 0h1v1h-1zm5 0h1v1h-1zm8 0h1v1h-1zm4 0h1v1h-1zm4 0h1v1h-1zm4 0h1v1h-1zm4 0h1v1h-1zm10 0h1v1h-1zm7 0h1v1h-1zm12 0h1v1h-1zm6 0h1v1h-1zm8 0h1v1h-1zm3 0h1v1h-1zm15 0h1v1h-1zm28 0h1v1h-1zm8 0h1v1h-1zm11 0h1v1h-1zm3 0h1v1h-1zm6 0h1v1h-1zm35 0h1v1h-1zm1 0h1v1h-1zm16 0h1v1h-1zm13 0h1v1h-1zm1 0h1v1h-1zm3 0h1v1h-1zm2 0h1v1h-1zm-224 1h1v1h-1zm3 0h1v1h-1zm7 0h1v1h-1zm8 0h1v1h-1zm23 0h1v1h-1zm4 0h1v1h-1zm5 0h1v1h-1zm1 0h1v1h-1zm11 0h1v1h-1zm1 0h1v1h-1zm16 0h1v1h-1zm18 0h1v1h-1zm29 0h1v1h-1zm4 0h1v1h-1zm6 0h1v1h-1zm11 0h1v1h-1zm2 0h1v1h-1zm10 0h1v1h-1zm2 0h1v1h-1zm12 0h1v1h-1zm1 0h1v1h-1zm30 0h1v1h-1zm24 0h1v1h-1zm1 0h1v1h-1zm1 0h1v1h-1zm8 0h1v1h-1zm-234 1h1v1h-1zm4 0h1v1h-1zm6 0h1v1h-1zm11 0h1v1h-1zm3 0h1v1h-1zm16 0h1v1h-1zm31 0h1v1h-1zm6 0h1v1h-1zm1 0h1v1h-1zm9 0h1v1h-1zm1 0h1v1h-1zm4 0h1v1h-1zm13 0h1v1h-1zm8 0h1v1h-1zm8 0h1v1h-1zm3 0h1v1h-1zm7 0h1v1h-1zm3 0h1v1h-1zm4 0h1v1h-1zm2 0h1v1h-1zm4 0h1v1h-1zm3 0h1v1h-1zm10 0h1v1h-1zm3 0h1v1h-1zm10 0h1v1h-1zm56 0h1v1h-1zm8 0h1v1h-1zm-250 1h1v1h-1zm5 0h1v1h-1zm18 0h1v1h-1zm6 0h1v1h-1zm11 0h1v1h-1zm3 0h1v1h-1zm2 0h1v1h-1zm2 0h1v1h-1zm7 0h1v1h-1zm15 0h1v1h-1zm5 0h1v1h-1zm3 0h1v1h-1zm3 0h1v1h-1zm8 0h1v1h-1zm4 0h1v1h-1zm3 0h1v1h-1zm5 0h1v1h-1zm3 0h1v1h-1zm8 0h1v1h-1zm1 0h1v1h-1zm10 0h1v1h-1zm15 0h1v1h-1zm9 0h1v1h-1zm4 0h1v1h-1zm11 0h1v1h-1zm47 0h1v1h-1zm1 0h1v1h-1zm8 0h1v1h-1zm8 0h1v1h-1zm10 0h1v1h-1zm1 0h1v1h-1zm8 0h1v1h-1zm-244 1h1v1h-1zm7 0h1v1h-1zm10 0h1v1h-1zm7 0h1v1h-1zm7 0h1v1h-1zm10 0h1v1h-1zm7 0h1v1h-1zm10 0h1v1h-1zm2 0h1v1h-1zm11 0h1v1h-1zm4 0h1v1h-1zm2 0h1v1h-1zm8 0h1v1h-1zm10 0h1v1h-1zm16 0h1v1h-1zm24 0h1v1h-1zm20 0h1v1h-1zm4 0h1v1h-1zm77 0h1v1h-1zm-235 1h1v1h-1zm9 0h1v1h-1zm2 0h1v1h-1zm1 0h1v1h-1zm3 0h1v1h-1zm4 0h1v1h-1zm2 0h1v1h-1zm1 0h1v1h-1zm17 0h1v1h-1zm1 0h1v1h-1zm1 0h1v1h-1zm4 0h1v1h-1zm6 0h1v1h-1zm20 0h1v1h-1zm18 0h1v1h-1zm18 0h1v1h-1zm7 0h1v1h-1zm1 0h1v1h-1zm1 0h1v1h-1zm1 0h1v1h-1zm6 0h1v1h-1zm24 0h1v1h-1zm16 0h1v1h-1zm8 0h1v1h-1zm6 0h1v1h-1zm1 0h1v1h-1zm2 0h1v1h-1zm4 0h1v1h-1zm9 0h1v1h-1zm5 0h1v1h-1zm8 0h1v1h-1zm11 0h1v1h-1zm2 0h1v1h-1zm15 0h1v1h-1zm4 0h1v1h-1zm11 0h1v1h-1zm-249 1h1v1h-1zm8 0h1v1h-1zm1 0h1v1h-1zm1 0h1v1h-1zm7 0h1v1h-1zm13 0h1v1h-1zm9 0h1v1h-1zm9 0h1v1h-1zm1 0h1v1h-1zm3 0h1v1h-1zm5 0h1v1h-1zm15 0h1v1h-1zm1 0h1v1h-1zm3 0h1v1h-1zm1 0h1v1h-1zm2 0h1v1h-1zm6 0h1v1h-1zm12 0h1v1h-1zm6 0h1v1h-1zm1 0h1v1h-1zm4 0h1v1h-1zm3 0h1v1h-1zm9 0h1v1h-1zm1 0h1v1h-1zm5 0h1v1h-1zm9 0h1v1h-1zm2 0h1v1h-1zm6 0h1v1h-1zm7 0h1v1h-1zm6 0h1v1h-1zm6 0h1v1h-1zm14 0h1v1h-1zm7 0h1v1h-1zm1 0h1v1h-1zm10 0h1v1h-1zm4 0h1v1h-1zm29 0h1v1h-1zm2 0h1v1h-1zm13 0h1v1h-1zm-237 1h1v1h-1zm7 0h1v1h-1zm8 0h1v1h-1zm17 0h1v1h-1zm2 0h1v1h-1zm26 0h1v1h-1zm17 0h1v1h-1zm2 0h1v1h-1zm2 0h1v1h-1zm5 0h1v1h-1zm12 0h1v1h-1zm4 0h1v1h-1zm42 0h1v1h-1zm12 0h1v1h-1zm28 0h1v1h-1zm15 0h1v1h-1zm3 0h1v1h-1zm17 0h1v1h-1zm10 0h1v1h-1zm-231 1h1v1h-1zm19 0h1v1h-1zm11 0h1v1h-1zm9 0h1v1h-1zm5 0h1v1h-1zm11 0h1v1h-1zm6 0h1v1h-1zm2 0h1v1h-1zm14 0h1v1h-1zm3 0h1v1h-1zm2 0h1v1h-1zm10 0h1v1h-1zm3 0h1v1h-1zm7 0h1v1h-1zm4 0h1v1h-1zm16 0h1v1h-1zm15 0h1v1h-1zm14 0h1v1h-1zm7 0h1v1h-1zm21 0h1v1h-1zm9 0h1v1h-1zm8 0h1v1h-1zm6 0h1v1h-1zm7 0h1v1h-1zm4 0h1v1h-1zm-214 1h1v1h-1zm32 0h1v1h-1zm22 0h1v1h-1zm24 0h1v1h-1zm6 0h1v1h-1zm18 0h1v1h-1zm25 0h1v1h-1zm1 0h1v1h-1zm7 0h1v1h-1zm13 0h1v1h-1zm1 0h1v1h-1zm12 0h1v1h-1zm6 0h1v1h-1zm2 0h1v1h-1zm3 0h1v1h-1zm18 0h1v1h-1zm1 0h1v1h-1zm2 0h1v1h-1zm1 0h1v1h-1zm2 0h1v1h-1zm11 0h1v1h-1zm3 0h1v1h-1zm1 0h1v1h-1zm2 0h1v1h-1zm22 0h1v1h-1zm-239 1h1v1h-1zm6 0h1v1h-1zm14 0h1v1h-1zm45 0h1v1h-1zm8 0h1v1h-1zm11 0h1v1h-1zm1 0h1v1h-1zm20 0h1v1h-1zm6 0h1v1h-1zm8 0h1v1h-1zm1 0h1v1h-1zm1 0h1v1h-1zm4 0h1v1h-1zm1 0h1v1h-1zm3 0h1v1h-1zm17 0h1v1h-1zm18 0h1v1h-1zm17 0h1v1h-1zm1 0h1v1h-1zm7 0h1v1h-1zm3 0h1v1h-1zm17 0h1v1h-1zm8 0h1v1h-1zm1 0h1v1h-1zm26 0h1v1h-1zm5 0h1v1h-1zm2 0h1v1h-1zm-251 1h1v1h-1zm8 0h1v1h-1zm8 0h1v1h-1zm21 0h1v1h-1zm5 0h1v1h-1zm1 0h1v1h-1zm12 0h1v1h-1zm4 0h1v1h-1zm1 0h1v1h-1zm4 0h1v1h-1zm17 0h1v1h-1zm1 0h1v1h-1zm4 0h1v1h-1zm2 0h1v1h-1zm10 0h1v1h-1zm7 0h1v1h-1zm2 0h1v1h-1zm9 0h1v1h-1zm4 0h1v1h-1zm7 0h1v1h-1zm5 0h1v1h-1zm4 0h1v1h-1zm1 0h1v1h-1zm7 0h1v1h-1zm2 0h1v1h-1zm15 0h1v1h-1zm9 0h1v1h-1zm2 0h1v1h-1zm13 0h1v1h-1zm3 0h1v1h-1zm2 0h1v1h-1zm18 0h1v1h-1zm1 0h1v1h-1zm1 0h1v1h-1zm1 0h1v1h-1zm7 0h1v1h-1zm6 0h1v1h-1zm19 0h1v1h-1zm7 0h1v1h-1zm-253 1h1v1h-1zm19 0h1v1h-1zm9 0h1v1h-1zm4 0h1v1h-1zm11 0h1v1h-1zm6 0h1v1h-1zm9 0h1v1h-1zm2 0h1v1h-1zm16 0h1v1h-1zm17 0h1v1h-1zm30 0h1v1h-1zm6 0h1v1h-1zm27 0h1v1h-1zm2 0h1v1h-1zm7 0h1v1h-1zm10 0h1v1h-1zm13 0h1v1h-1zm5 0h1v1h-1zm4 0h1v1h-1zm6 0h1v1h-1zm3 0h1v1h-1zm23 0h1v1h-1zm5 0h1v1h-1zm2 0h1v1h-1zm1 0h1v1h-1zm5 0h1v1h-1zm9 0h1v1h-1zm-252 1h1v1h-1zm5 0h1v1h-1zm13 0h1v1h-1zm12 0h1v1h-1zm12 0h1v1h-1zm20 0h1v1h-1zm9 0h1v1h-1zm12 0h1v1h-1zm1 0h1v1h-1zm3 0h1v1h-1zm8 0h1v1h-1zm15 0h1v1h-1zm4 0h1v1h-1zm8 0h1v1h-1zm7 0h1v1h-1zm5 0h1v1h-1zm1 0h1v1h-1zm2 0h1v1h-1zm7 0h1v1h-1zm9 0h1v1h-1zm4 0h1v1h-1zm9 0h1v1h-1zm10 0h1v1h-1zm4 0h1v1h-1zm4 0h1v1h-1zm6 0h1v1h-1zm17 0h1v1h-1zm17 0h1v1h-1zm10 0h1v1h-1zm13 0h1v1h-1zm2 0h1v1h-1zm1 0h1v1h-1zm-247 1h1v1h-1zm1 0h1v1h-1zm12 0h1v1h-1zm2 0h1v1h-1zm4 0h1v1h-1zm5 0h1v1h-1zm3 0h1v1h-1zm2 0h1v1h-1zm14 0h1v1h-1zm32 0h1v1h-1zm5 0h1v1h-1zm1 0h1v1h-1zm3 0h1v1h-1zm3 0h1v1h-1zm6 0h1v1h-1zm3 0h1v1h-1zm7 0h1v1h-1zm7 0h1v1h-1zm9 0h1v1h-1zm7 0h1v1h-1zm7 0h1v1h-1zm27 0h1v1h-1zm1 0h1v1h-1zm1 0h1v1h-1zm3 0h1v1h-1zm4 0h1v1h-1zm8 0h1v1h-1zm3 0h1v1h-1zm5 0h1v1h-1zm16 0h1v1h-1zm1 0h1v1h-1zm16 0h1v1h-1zm-219 1h1v1h-1zm4 0h1v1h-1zm8 0h1v1h-1zm23 0h1v1h-1zm4 0h1v1h-1zm6 0h1v1h-1zm15 0h1v1h-1zm38 0h1v1h-1zm2 0h1v1h-1zm3 0h1v1h-1zm16 0h1v1h-1zm3 0h1v1h-1zm3 0h1v1h-1zm1 0h1v1h-1zm1 0h1v1h-1zm1 0h1v1h-1zm3 0h1v1h-1zm10 0h1v1h-1zm16 0h1v1h-1zm13 0h1v1h-1zm10 0h1v1h-1zm2 0h1v1h-1zm3 0h1v1h-1zm1 0h1v1h-1zm5 0h1v1h-1zm12 0h1v1h-1zm3 0h1v1h-1zm16 0h1v1h-1zm26 0h1v1h-1zm-247 1h1v1h-1zm2 0h1v1h-1zm2 0h1v1h-1zm3 0h1v1h-1zm1 0h1v1h-1zm6 0h1v1h-1zm2 0h1v1h-1zm2 0h1v1h-1zm5 0h1v1h-1zm8 0h1v1h-1zm2 0h1v1h-1zm20 0h1v1h-1zm7 0h1v1h-1zm14 0h1v1h-1zm19 0h1v1h-1zm2 0h1v1h-1zm9 0h1v1h-1zm18 0h1v1h-1zm3 0h1v1h-1zm5 0h1v1h-1zm2 0h1v1h-1zm4 0h1v1h-1zm2 0h1v1h-1zm20 0h1v1h-1zm4 0h1v1h-1zm2 0h1v1h-1zm8 0h1v1h-1zm22 0h1v1h-1zm5 0h1v1h-1zm12 0h1v1h-1zm4 0h1v1h-1zm19 0h1v1h-1zm5 0h1v1h-1zm-218 1h1v1h-1zm1 0h1v1h-1zm1 0h1v1h-1zm4 0h1v1h-1zm7 0h1v1h-1zm21 0h1v1h-1zm37 0h1v1h-1zm10 0h1v1h-1zm14 0h1v1h-1zm27 0h1v1h-1zm19 0h1v1h-1zm14 0h1v1h-1zm6 0h1v1h-1zm19 0h1v1h-1zm5 0h1v1h-1zm1 0h1v1h-1zm15 0h1v1h-1zm3 0h1v1h-1zm5 0h1v1h-1zm4 0h1v1h-1zm6 0h1v1h-1zm11 0h1v1h-1zm-246 1h1v1h-1zm26 0h1v1h-1zm1 0h1v1h-1zm11 0h1v1h-1zm5 0h1v1h-1zm3 0h1v1h-1zm5 0h1v1h-1zm5 0h1v1h-1zm2 0h1v1h-1zm4 0h1v1h-1zm6 0h1v1h-1zm8 0h1v1h-1zm7 0h1v1h-1zm6 0h1v1h-1zm24 0h1v1h-1zm4 0h1v1h-1zm1 0h1v1h-1zm3 0h1v1h-1zm6 0h1v1h-1zm2 0h1v1h-1zm22 0h1v1h-1zm14 0h1v1h-1zm15 0h1v1h-1zm2 0h1v1h-1zm1 0h1v1h-1zm19 0h1v1h-1zm9 0h1v1h-1zm3 0h1v1h-1zm2 0h1v1h-1zm16 0h1v1h-1zm4 0h1v1h-1zm2 0h1v1h-1zm-244 1h1v1h-1zm14 0h1v1h-1zm9 0h1v1h-1zm4 0h1v1h-1zm2 0h1v1h-1zm12 0h1v1h-1zm7 0h1v1h-1zm7 0h1v1h-1zm1 0h1v1h-1zm1 0h1v1h-1zm40 0h1v1h-1zm2 0h1v1h-1zm3 0h1v1h-1zm23 0h1v1h-1zm3 0h1v1h-1zm5 0h1v1h-1zm3 0h1v1h-1zm2 0h1v1h-1zm22 0h1v1h-1zm4 0h1v1h-1zm1 0h1v1h-1zm4 0h1v1h-1zm9 0h1v1h-1zm3 0h1v1h-1zm1 0h1v1h-1zm4 0h1v1h-1zm4 0h1v1h-1zm1 0h1v1h-1zm7 0h1v1h-1zm9 0h1v1h-1zm1 0h1v1h-1zm5 0h1v1h-1zm10 0h1v1h-1zm27 0h1v1h-1zm-245 1h1v1h-1zm2 0h1v1h-1zm5 0h1v1h-1zm1 0h1v1h-1zm4 0h1v1h-1zm6 0h1v1h-1zm23 0h1v1h-1zm17 0h1v1h-1zm8 0h1v1h-1zm5 0h1v1h-1zm29 0h1v1h-1zm5 0h1v1h-1zm2 0h1v1h-1zm32 0h1v1h-1zm1 0h1v1h-1zm3 0h1v1h-1zm5 0h1v1h-1zm38 0h1v1h-1zm9 0h1v1h-1zm15 0h1v1h-1zm1 0h1v1h-1zm12 0h1v1h-1zm1 0h1v1h-1zm5 0h1v1h-1zm-229 1h1v1h-1zm13 0h1v1h-1zm8 0h1v1h-1zm24 0h1v1h-1zm1 0h1v1h-1zm8 0h1v1h-1zm8 0h1v1h-1zm4 0h1v1h-1zm1 0h1v1h-1zm27 0h1v1h-1zm12 0h1v1h-1zm17 0h1v1h-1zm4 0h1v1h-1zm14 0h1v1h-1zm5 0h1v1h-1zm4 0h1v1h-1zm3 0h1v1h-1zm4 0h1v1h-1zm2 0h1v1h-1zm2 0h1v1h-1zm1 0h1v1h-1zm10 0h1v1h-1zm11 0h1v1h-1zm2 0h1v1h-1zm5 0h1v1h-1zm12 0h1v1h-1zm7 0h1v1h-1zm25 0h1v1h-1zm1 0h1v1h-1zm8 0h1v1h-1zm-245 1h1v1h-1zm1 0h1v1h-1zm6 0h1v1h-1zm2 0h1v1h-1zm3 0h1v1h-1zm8 0h1v1h-1zm11 0h1v1h-1zm15 0h1v1h-1zm9 0h1v1h-1zm5 0h1v1h-1zm2 0h1v1h-1zm1 0h1v1h-1zm5 0h1v1h-1zm19 0h1v1h-1zm12 0h1v1h-1zm1 0h1v1h-1zm9 0h1v1h-1zm8 0h1v1h-1zm5 0h1v1h-1zm9 0h1v1h-1zm9 0h1v1h-1zm7 0h1v1h-1zm2 0h1v1h-1zm13 0h1v1h-1zm3 0h1v1h-1zm5 0h1v1h-1zm15 0h1v1h-1zm2 0h1v1h-1zm4 0h1v1h-1zm7 0h1v1h-1zm24 0h1v1h-1zm8 0h1v1h-1zm19 0h1v1h-1zm-235 1h1v1h-1zm2 0h1v1h-1zm9 0h1v1h-1zm10 0h1v1h-1zm7 0h1v1h-1zm14 0h1v1h-1zm4 0h1v1h-1zm7 0h1v1h-1zm7 0h1v1h-1zm12 0h1v1h-1zm19 0h1v1h-1zm4 0h1v1h-1zm1 0h1v1h-1zm1 0h1v1h-1zm2 0h1v1h-1zm23 0h1v1h-1zm15 0h1v1h-1zm18 0h1v1h-1zm5 0h1v1h-1zm8 0h1v1h-1zm1 0h1v1h-1zm4 0h1v1h-1zm10 0h1v1h-1zm16 0h1v1h-1zm5 0h1v1h-1zm1 0h1v1h-1zm2 0h1v1h-1zm12 0h1v1h-1zm1 0h1v1h-1zm-239 1h1v1h-1zm6 0h1v1h-1zm27 0h1v1h-1zm2 0h1v1h-1zm2 0h1v1h-1zm2 0h1v1h-1zm7 0h1v1h-1zm16 0h1v1h-1zm16 0h1v1h-1zm1 0h1v1h-1zm7 0h1v1h-1zm7 0h1v1h-1zm2 0h1v1h-1zm1 0h1v1h-1zm4 0h1v1h-1zm7 0h1v1h-1zm7 0h1v1h-1zm3 0h1v1h-1zm2 0h1v1h-1zm4 0h1v1h-1zm2 0h1v1h-1zm18 0h1v1h-1zm2 0h1v1h-1zm12 0h1v1h-1zm1 0h1v1h-1zm18 0h1v1h-1zm12 0h1v1h-1zm1 0h1v1h-1zm9 0h1v1h-1zm8 0h1v1h-1zm1 0h1v1h-1zm2 0h1v1h-1zm4 0h1v1h-1zm13 0h1v1h-1zm2 0h1v1h-1zm13 0h1v1h-1zm4 0h1v1h-1zm7 0h1v1h-1zm1 0h1v1h-1zm-252 1h1v1h-1zm2 0h1v1h-1zm3 0h1v1h-1zm4 0h1v1h-1zm12 0h1v1h-1zm13 0h1v1h-1zm11 0h1v1h-1zm10 0h1v1h-1zm20 0h1v1h-1zm10 0h1v1h-1zm13 0h1v1h-1zm2 0h1v1h-1zm6 0h1v1h-1zm2 0h1v1h-1zm1 0h1v1h-1zm9 0h1v1h-1zm1 0h1v1h-1zm5 0h1v1h-1zm27 0h1v1h-1zm25 0h1v1h-1zm3 0h1v1h-1zm3 0h1v1h-1zm13 0h1v1h-1zm2 0h1v1h-1zm22 0h1v1h-1zm1 0h1v1h-1zm4 0h1v1h-1zm20 0h1v1h-1zm-244 1h1v1h-1zm25 0h1v1h-1zm6 0h1v1h-1zm5 0h1v1h-1zm7 0h1v1h-1zm8 0h1v1h-1zm20 0h1v1h-1zm17 0h1v1h-1zm9 0h1v1h-1zm22 0h1v1h-1zm15 0h1v1h-1zm5 0h1v1h-1zm3 0h1v1h-1zm12 0h1v1h-1zm8 0h1v1h-1zm3 0h1v1h-1zm5 0h1v1h-1zm2 0h1v1h-1zm12 0h1v1h-1zm16 0h1v1h-1zm2 0h1v1h-1zm4 0h1v1h-1zm4 0h1v1h-1zm1 0h1v1h-1zm7 0h1v1h-1zm1 0h1v1h-1zm6 0h1v1h-1zm4 0h1v1h-1zm11 0h1v1h-1zm-212 1h1v1h-1zm9 0h1v1h-1zm4 0h1v1h-1zm1 0h1v1h-1zm3 0h1v1h-1zm2 0h1v1h-1zm12 0h1v1h-1zm1 0h1v1h-1zm1 0h1v1h-1zm21 0h1v1h-1zm3 0h1v1h-1zm15 0h1v1h-1zm12 0h1v1h-1zm1 0h1v1h-1zm19 0h1v1h-1zm22 0h1v1h-1zm17 0h1v1h-1zm3 0h1v1h-1zm5 0h1v1h-1zm25 0h1v1h-1zm9 0h1v1h-1zm9 0h1v1h-1zm8 0h1v1h-1zm13 0h1v1h-1zm8 0h1v1h-1zm-236 1h1v1h-1zm10 0h1v1h-1zm4 0h1v1h-1zm9 0h1v1h-1zm3 0h1v1h-1zm19 0h1v1h-1zm1 0h1v1h-1zm6 0h1v1h-1zm2 0h1v1h-1zm1 0h1v1h-1zm4 0h1v1h-1zm1 0h1v1h-1zm11 0h1v1h-1zm13 0h1v1h-1zm17 0h1v1h-1zm10 0h1v1h-1zm10 0h1v1h-1zm15 0h1v1h-1zm7 0h1v1h-1zm3 0h1v1h-1zm26 0h1v1h-1zm9 0h1v1h-1zm39 0h1v1h-1zm18 0h1v1h-1zm-252 1h1v1h-1zm5 0h1v1h-1zm23 0h1v1h-1zm7 0h1v1h-1zm60 0h1v1h-1zm22 0h1v1h-1zm3 0h1v1h-1zm7 0h1v1h-1zm5 0h1v1h-1zm1 0h1v1h-1zm8 0h1v1h-1zm12 0h1v1h-1zm8 0h1v1h-1zm21 0h1v1h-1zm34 0h1v1h-1zm1 0h1v1h-1zm25 0h1v1h-1zm4 0h1v1h-1zm2 0h1v1h-1zm2 0h1v1h-1zm2 0h1v1h-1zm-245 1h1v1h-1zm29 0h1v1h-1zm7 0h1v1h-1zm1 0h1v1h-1zm1 0h1v1h-1zm9 0h1v1h-1zm2 0h1v1h-1zm16 0h1v1h-1zm18 0h1v1h-1zm4 0h1v1h-1zm4 0h1v1h-1zm4 0h1v1h-1zm23 0h1v1h-1zm4 0h1v1h-1zm12 0h1v1h-1zm17 0h1v1h-1zm27 0h1v1h-1zm5 0h1v1h-1zm11 0h1v1h-1zm8 0h1v1h-1zm16 0h1v1h-1zm1 0h1v1h-1zm1 0h1v1h-1zm4 0h1v1h-1zm7 0h1v1h-1zm1 0h1v1h-1zm10 0h1v1h-1zm-250 1h1v1h-1zm5 0h1v1h-1zm2 0h1v1h-1zm3 0h1v1h-1zm12 0h1v1h-1zm11 0h1v1h-1zm3 0h1v1h-1zm24 0h1v1h-1zm12 0h1v1h-1zm3 0h1v1h-1zm15 0h1v1h-1zm4 0h1v1h-1zm4 0h1v1h-1zm11 0h1v1h-1zm26 0h1v1h-1zm10 0h1v1h-1zm5 0h1v1h-1zm25 0h1v1h-1zm7 0h1v1h-1zm2 0h1v1h-1zm11 0h1v1h-1zm12 0h1v1h-1zm3 0h1v1h-1zm10 0h1v1h-1zm10 0h1v1h-1zm-223 1h1v1h-1zm9 0h1v1h-1zm22 0h1v1h-1zm6 0h1v1h-1zm16 0h1v1h-1zm30 0h1v1h-1zm13 0h1v1h-1zm5 0h1v1h-1zm4 0h1v1h-1zm16 0h1v1h-1zm4 0h1v1h-1zm10 0h1v1h-1zm1 0h1v1h-1zm3 0h1v1h-1zm6 0h1v1h-1zm4 0h1v1h-1zm5 0h1v1h-1zm23 0h1v1h-1zm8 0h1v1h-1zm3 0h1v1h-1zm9 0h1v1h-1zm2 0h1v1h-1zm3 0h1v1h-1zm1 0h1v1h-1zm8 0h1v1h-1zm3 0h1v1h-1zm30 0h1v1h-1zm1 0h1v1h-1zm-244 1h1v1h-1zm19 0h1v1h-1zm5 0h1v1h-1zm26 0h1v1h-1zm6 0h1v1h-1zm9 0h1v1h-1zm2 0h1v1h-1zm12 0h1v1h-1zm1 0h1v1h-1zm8 0h1v1h-1zm6 0h1v1h-1zm8 0h1v1h-1zm8 0h1v1h-1zm13 0h1v1h-1zm4 0h1v1h-1zm4 0h1v1h-1zm10 0h1v1h-1zm23 0h1v1h-1zm13 0h1v1h-1zm6 0h1v1h-1zm7 0h1v1h-1zm9 0h1v1h-1zm7 0h1v1h-1zm14 0h1v1h-1zm6 0h1v1h-1zm7 0h1v1h-1zm11 0h1v1h-1zm-243 1h1v1h-1zm10 0h1v1h-1zm24 0h1v1h-1zm27 0h1v1h-1zm6 0h1v1h-1zm5 0h1v1h-1zm16 0h1v1h-1zm1 0h1v1h-1zm11 0h1v1h-1zm3 0h1v1h-1zm16 0h1v1h-1zm16 0h1v1h-1zm2 0h1v1h-1zm1 0h1v1h-1zm8 0h1v1h-1zm3 0h1v1h-1zm12 0h1v1h-1zm10 0h1v1h-1zm14 0h1v1h-1zm1 0h1v1h-1zm2 0h1v1h-1zm7 0h1v1h-1zm10 0h1v1h-1zm20 0h1v1h-1zm20 0h1v1h-1zm-255 1h1v1h-1zm10 0h1v1h-1zm4 0h1v1h-1zm8 0h1v1h-1zm2 0h1v1h-1zm6 0h1v1h-1zm8 0h1v1h-1zm3 0h1v1h-1zm72 0h1v1h-1zm7 0h1v1h-1zm17 0h1v1h-1zm12 0h1v1h-1zm2 0h1v1h-1zm17 0h1v1h-1zm10 0h1v1h-1zm4 0h1v1h-1zm31 0h1v1h-1zm12 0h1v1h-1zm5 0h1v1h-1zm18 0h1v1h-1zm4 0h1v1h-1zm-247 1h1v1h-1zm5 0h1v1h-1zm10 0h1v1h-1zm6 0h1v1h-1zm9 0h1v1h-1zm23 0h1v1h-1zm3 0h1v1h-1zm2 0h1v1h-1zm4 0h1v1h-1zm17 0h1v1h-1zm11 0h1v1h-1zm11 0h1v1h-1zm6 0h1v1h-1zm18 0h1v1h-1zm4 0h1v1h-1zm19 0h1v1h-1zm5 0h1v1h-1zm6 0h1v1h-1zm4 0h1v1h-1zm7 0h1v1h-1zm5 0h1v1h-1zm15 0h1v1h-1zm9 0h1v1h-1zm10 0h1v1h-1zm13 0h1v1h-1zm5 0h1v1h-1zm-203 1h1v1h-1zm12 0h1v1h-1zm8 0h1v1h-1zm24 0h1v1h-1zm3 0h1v1h-1zm5 0h1v1h-1zm4 0h1v1h-1zm17 0h1v1h-1zm4 0h1v1h-1zm6 0h1v1h-1zm8 0h1v1h-1zm8 0h1v1h-1zm5 0h1v1h-1zm7 0h1v1h-1zm2 0h1v1h-1zm16 0h1v1h-1zm20 0h1v1h-1zm29 0h1v1h-1zm2 0h1v1h-1zm22 0h1v1h-1zm1 0h1v1h-1zm7 0h1v1h-1zm-226 1h1v1h-1zm5 0h1v1h-1zm8 0h1v1h-1zm13 0h1v1h-1zm6 0h1v1h-1zm25 0h1v1h-1zm14 0h1v1h-1zm9 0h1v1h-1zm5 0h1v1h-1zm1 0h1v1h-1zm8 0h1v1h-1zm16 0h1v1h-1zm2 0h1v1h-1zm12 0h1v1h-1zm1 0h1v1h-1zm10 0h1v1h-1zm10 0h1v1h-1zm2 0h1v1h-1zm13 0h1v1h-1zm11 0h1v1h-1zm7 0h1v1h-1zm8 0h1v1h-1zm12 0h1v1h-1zm18 0h1v1h-1zm8 0h1v1h-1zm7 0h1v1h-1zm-234 1h1v1h-1zm11 0h1v1h-1zm15 0h1v1h-1zm18 0h1v1h-1zm17 0h1v1h-1zm2 0h1v1h-1zm30 0h1v1h-1zm8 0h1v1h-1zm31 0h1v1h-1zm4 0h1v1h-1zm1 0h1v1h-1zm32 0h1v1h-1zm23 0h1v1h-1zm3 0h1v1h-1zm6 0h1v1h-1zm3 0h1v1h-1zm16 0h1v1h-1zm1 0h1v1h-1zm12 0h1v1h-1zm-240 1h1v1h-1zm5 0h1v1h-1zm13 0h1v1h-1zm6 0h1v1h-1zm10 0h1v1h-1zm7 0h1v1h-1zm26 0h1v1h-1zm6 0h1v1h-1zm4 0h1v1h-1zm10 0h1v1h-1zm2 0h1v1h-1zm13 0h1v1h-1zm8 0h1v1h-1zm17 0h1v1h-1zm13 0h1v1h-1zm2 0h1v1h-1zm15 0h1v1h-1zm13 0h1v1h-1zm10 0h1v1h-1zm2 0h1v1h-1zm3 0h1v1h-1zm14 0h1v1h-1zm12 0h1v1h-1zm3 0h1v1h-1zm21 0h1v1h-1zm12 0h1v1h-1zm4 0h1v1h-1zm-253 1h1v1h-1zm2 0h1v1h-1zm31 0h1v1h-1zm12 0h1v1h-1zm8 0h1v1h-1zm2 0h1v1h-1zm3 0h1v1h-1zm3 0h1v1h-1zm17 0h1v1h-1zm2 0h1v1h-1zm6 0h1v1h-1zm6 0h1v1h-1zm15 0h1v1h-1zm10 0h1v1h-1zm30 0h1v1h-1zm8 0h1v1h-1zm1 0h1v1h-1zm13 0h1v1h-1zm30 0h1v1h-1zm24 0h1v1h-1zm29 0h1v1h-1zm-233 1h1v1h-1zm7 0h1v1h-1zm27 0h1v1h-1zm1 0h1v1h-1zm1 0h1v1h-1zm23 0h1v1h-1zm28 0h1v1h-1zm7 0h1v1h-1zm10 0h1v1h-1zm7 0h1v1h-1zm5 0h1v1h-1zm12 0h1v1h-1zm2 0h1v1h-1zm3 0h1v1h-1zm2 0h1v1h-1zm30 0h1v1h-1zm23 0h1v1h-1zm6 0h1v1h-1zm37 0h1v1h-1zm-251 1h1v1h-1zm1 0h1v1h-1zm7 0h1v1h-1zm4 0h1v1h-1zm9 0h1v1h-1zm3 0h1v1h-1zm5 0h1v1h-1zm4 0h1v1h-1zm10 0h1v1h-1zm4 0h1v1h-1zm2 0h1v1h-1zm3 0h1v1h-1zm22 0h1v1h-1zm5 0h1v1h-1zm1 0h1v1h-1zm4 0h1v1h-1zm4 0h1v1h-1zm3 0h1v1h-1zm22 0h1v1h-1zm13 0h1v1h-1zm10 0h1v1h-1zm2 0h1v1h-1zm17 0h1v1h-1zm3 0h1v1h-1zm11 0h1v1h-1zm12 0h1v1h-1zm4 0h1v1h-1zm2 0h1v1h-1zm-174 1h1v1h-1zm9 0h1v1h-1zm23 0h1v1h-1zm1 0h1v1h-1zm25 0h1v1h-1zm4 0h1v1h-1zm24 0h1v1h-1zm13 0h1v1h-1zm1 0h1v1h-1zm28 0h1v1h-1zm1 0h1v1h-1zm7 0h1v1h-1zm8 0h1v1h-1zm12 0h1v1h-1zm14 0h1v1h-1zm38 0h1v1h-1zm1 0h1v1h-1zm33 0h1v1h-1zm-253 1h1v1h-1zm7 0h1v1h-1zm2 0h1v1h-1zm1 0h1v1h-1zm6 0h1v1h-1zm10 0h1v1h-1zm19 0h1v1h-1zm8 0h1v1h-1zm3 0h1v1h-1zm1 0h1v1h-1zm8 0h1v1h-1zm6 0h1v1h-1zm19 0h1v1h-1zm24 0h1v1h-1zm5 0h1v1h-1zm8 0h1v1h-1zm13 0h1v1h-1zm25 0h1v1h-1zm5 0h1v1h-1zm7 0h1v1h-1zm6 0h1v1h-1zm7 0h1v1h-1zm5 0h1v1h-1zm26 0h1v1h-1zm4 0h1v1h-1zm10 0h1v1h-1zm7 0h1v1h-1zm10 0h1v1h-1zm-249 1h1v1h-1zm24 0h1v1h-1zm1 0h1v1h-1zm32 0h1v1h-1zm2 0h1v1h-1zm4 0h1v1h-1zm1 0h1v1h-1zm2 0h1v1h-1zm2 0h1v1h-1zm2 0h1v1h-1zm2 0h1v1h-1zm24 0h1v1h-1zm2 0h1v1h-1zm19 0h1v1h-1zm1 0h1v1h-1zm2 0h1v1h-1zm4 0h1v1h-1zm2 0h1v1h-1zm5 0h1v1h-1zm1 0h1v1h-1zm3 0h1v1h-1zm7 0h1v1h-1zm13 0h1v1h-1zm15 0h1v1h-1zm12 0h1v1h-1zm3 0h1v1h-1zm1 0h1v1h-1zm4 0h1v1h-1zm7 0h1v1h-1zm5 0h1v1h-1zm4 0h1v1h-1zm1 0h1v1h-1zm2 0h1v1h-1zm5 0h1v1h-1zm11 0h1v1h-1zm16 0h1v1h-1zm7 0h1v1h-1zm-251 1h1v1h-1zm2 0h1v1h-1zm15 0h1v1h-1zm4 0h1v1h-1zm41 0h1v1h-1zm1 0h1v1h-1zm3 0h1v1h-1zm10 0h1v1h-1zm11 0h1v1h-1zm2 0h1v1h-1zm3 0h1v1h-1zm3 0h1v1h-1zm1 0h1v1h-1zm3 0h1v1h-1zm14 0h1v1h-1zm3 0h1v1h-1zm12 0h1v1h-1zm1 0h1v1h-1zm1 0h1v1h-1zm15 0h1v1h-1zm6 0h1v1h-1zm4 0h1v1h-1zm20 0h1v1h-1zm23 0h1v1h-1zm27 0h1v1h-1zm2 0h1v1h-1zm6 0h1v1h-1zm3 0h1v1h-1zm5 0h1v1h-1zm2 0h1v1h-1zm1 0h1v1h-1zm8 0h1v1h-1zm-251 1h1v1h-1zm2 0h1v1h-1zm12 0h1v1h-1zm3 0h1v1h-1zm1 0h1v1h-1zm2 0h1v1h-1zm11 0h1v1h-1zm2 0h1v1h-1zm7 0h1v1h-1zm11 0h1v1h-1zm35 0h1v1h-1zm2 0h1v1h-1zm7 0h1v1h-1zm4 0h1v1h-1zm1 0h1v1h-1zm7 0h1v1h-1zm1 0h1v1h-1zm13 0h1v1h-1zm27 0h1v1h-1zm8 0h1v1h-1zm12 0h1v1h-1zm10 0h1v1h-1zm4 0h1v1h-1zm17 0h1v1h-1zm16 0h1v1h-1zm2 0h1v1h-1zm12 0h1v1h-1zm1 0h1v1h-1zm17 0h1v1h-1zm5 0h1v1h-1zm-254 1h1v1h-1zm8 0h1v1h-1zm52 0h1v1h-1zm10 0h1v1h-1zm6 0h1v1h-1zm2 0h1v1h-1zm40 0h1v1h-1zm19 0h1v1h-1zm8 0h1v1h-1zm3 0h1v1h-1zm21 0h1v1h-1zm4 0h1v1h-1zm4 0h1v1h-1zm18 0h1v1h-1zm5 0h1v1h-1zm8 0h1v1h-1zm1 0h1v1h-1zm5 0h1v1h-1zm5 0h1v1h-1zm-218 1h1v1h-1zm2 0h1v1h-1zm5 0h1v1h-1zm8 0h1v1h-1zm12 0h1v1h-1zm7 0h1v1h-1zm5 0h1v1h-1zm15 0h1v1h-1zm9 0h1v1h-1zm9 0h1v1h-1zm2 0h1v1h-1zm1 0h1v1h-1zm4 0h1v1h-1zm8 0h1v1h-1zm14 0h1v1h-1zm15 0h1v1h-1zm7 0h1v1h-1zm3 0h1v1h-1zm1 0h1v1h-1zm8 0h1v1h-1zm2 0h1v1h-1zm1 0h1v1h-1zm9 0h1v1h-1zm6 0h1v1h-1zm18 0h1v1h-1zm2 0h1v1h-1zm36 0h1v1h-1zm43 0h1v1h-1zm-238 1h1v1h-1zm4 0h1v1h-1zm6 0h1v1h-1zm6 0h1v1h-1zm1 0h1v1h-1zm13 0h1v1h-1zm6 0h1v1h-1zm22 0h1v1h-1zm1 0h1v1h-1zm5 0h1v1h-1zm11 0h1v1h-1zm3 0h1v1h-1zm6 0h1v1h-1zm2 0h1v1h-1zm2 0h1v1h-1zm12 0h1v1h-1zm1 0h1v1h-1zm30 0h1v1h-1zm6 0h1v1h-1zm17 0h1v1h-1zm14 0h1v1h-1zm7 0h1v1h-1zm8 0h1v1h-1zm5 0h1v1h-1zm1 0h1v1h-1zm20 0h1v1h-1zm1 0h1v1h-1zm-208 1h1v1h-1zm21 0h1v1h-1zm3 0h1v1h-1zm2 0h1v1h-1zm4 0h1v1h-1zm5 0h1v1h-1zm14 0h1v1h-1zm12 0h1v1h-1zm15 0h1v1h-1zm9 0h1v1h-1zm3 0h1v1h-1zm10 0h1v1h-1zm21 0h1v1h-1zm6 0h1v1h-1zm19 0h1v1h-1zm2 0h1v1h-1zm7 0h1v1h-1zm10 0h1v1h-1zm2 0h1v1h-1zm6 0h1v1h-1zm29 0h1v1h-1zm3 0h1v1h-1zm16 0h1v1h-1zm-189 1h1v1h-1zm3 0h1v1h-1zm3 0h1v1h-1zm25 0h1v1h-1zm4 0h1v1h-1zm5 0h1v1h-1zm1 0h1v1h-1zm15 0h1v1h-1zm7 0h1v1h-1zm7 0h1v1h-1zm10 0h1v1h-1zm17 0h1v1h-1zm9 0h1v1h-1zm17 0h1v1h-1zm6 0h1v1h-1zm4 0h1v1h-1zm17 0h1v1h-1zm4 0h1v1h-1zm1 0h1v1h-1zm12 0h1v1h-1zm7 0h1v1h-1zm1 0h1v1h-1zm7 0h1v1h-1zm2 0h1v1h-1zm15 0h1v1h-1zm-242 1h1v1h-1zm4 0h1v1h-1zm11 0h1v1h-1zm3 0h1v1h-1zm3 0h1v1h-1zm12 0h1v1h-1zm17 0h1v1h-1zm3 0h1v1h-1zm16 0h1v1h-1zm2 0h1v1h-1zm3 0h1v1h-1zm18 0h1v1h-1zm1 0h1v1h-1zm17 0h1v1h-1zm11 0h1v1h-1zm7 0h1v1h-1zm1 0h1v1h-1zm30 0h1v1h-1zm2 0h1v1h-1zm1 0h1v1h-1zm18 0h1v1h-1zm31 0h1v1h-1zm2 0h1v1h-1zm1 0h1v1h-1zm7 0h1v1h-1zm1 0h1v1h-1zm3 0h1v1h-1zm1 0h1v1h-1zm8 0h1v1h-1zm-237 1h1v1h-1zm6 0h1v1h-1zm16 0h1v1h-1zm8 0h1v1h-1zm10 0h1v1h-1zm14 0h1v1h-1zm15 0h1v1h-1zm1 0h1v1h-1zm16 0h1v1h-1zm9 0h1v1h-1zm2 0h1v1h-1zm1 0h1v1h-1zm3 0h1v1h-1zm12 0h1v1h-1zm3 0h1v1h-1zm13 0h1v1h-1zm19 0h1v1h-1zm4 0h1v1h-1zm12 0h1v1h-1zm1 0h1v1h-1zm11 0h1v1h-1zm2 0h1v1h-1zm2 0h1v1h-1zm3 0h1v1h-1zm1 0h1v1h-1zm15 0h1v1h-1zm29 0h1v1h-1zm13 0h1v1h-1zm4 0h1v1h-1zm-247 1h1v1h-1zm26 0h1v1h-1zm2 0h1v1h-1zm1 0h1v1h-1zm34 0h1v1h-1zm11 0h1v1h-1zm1 0h1v1h-1zm1 0h1v1h-1zm6 0h1v1h-1zm17 0h1v1h-1zm3 0h1v1h-1zm8 0h1v1h-1zm1 0h1v1h-1zm1 0h1v1h-1zm1 0h1v1h-1zm2 0h1v1h-1zm3 0h1v1h-1zm7 0h1v1h-1zm3 0h1v1h-1zm3 0h1v1h-1zm1 0h1v1h-1zm4 0h1v1h-1zm3 0h1v1h-1zm16 0h1v1h-1zm9 0h1v1h-1zm4 0h1v1h-1zm20 0h1v1h-1zm5 0h1v1h-1zm11 0h1v1h-1zm17 0h1v1h-1zm2 0h1v1h-1zm23 0h1v1h-1zm4 0h1v1h-1zm-248 1h1v1h-1zm5 0h1v1h-1zm2 0h1v1h-1zm4 0h1v1h-1zm6 0h1v1h-1zm8 0h1v1h-1zm9 0h1v1h-1zm4 0h1v1h-1zm3 0h1v1h-1zm4 0h1v1h-1zm5 0h1v1h-1zm7 0h1v1h-1zm15 0h1v1h-1zm6 0h1v1h-1zm1 0h1v1h-1zm10 0h1v1h-1zm7 0h1v1h-1zm3 0h1v1h-1zm6 0h1v1h-1zm4 0h1v1h-1zm15 0h1v1h-1zm12 0h1v1h-1zm1 0h1v1h-1zm1 0h1v1h-1zm2 0h1v1h-1zm30 0h1v1h-1zm17 0h1v1h-1zm1 0h1v1h-1zm8 0h1v1h-1zm31 0h1v1h-1zm1 0h1v1h-1zm3 0h1v1h-1zm5 0h1v1h-1zm16 0h1v1h-1zm-242 1h1v1h-1zm6 0h1v1h-1zm1 0h1v1h-1zm7 0h1v1h-1zm5 0h1v1h-1zm4 0h1v1h-1zm8 0h1v1h-1zm8 0h1v1h-1zm5 0h1v1h-1zm1 0h1v1h-1zm10 0h1v1h-1zm3 0h1v1h-1zm11 0h1v1h-1zm1 0h1v1h-1zm29 0h1v1h-1zm9 0h1v1h-1zm3 0h1v1h-1zm3 0h1v1h-1zm3 0h1v1h-1zm18 0h1v1h-1zm1 0h1v1h-1zm17 0h1v1h-1zm14 0h1v1h-1zm24 0h1v1h-1zm23 0h1v1h-1zm2 0h1v1h-1zm5 0h1v1h-1zm5 0h1v1h-1zm2 0h1v1h-1zm2 0h1v1h-1zm4 0h1v1h-1zm3 0h1v1h-1zm1 0h1v1h-1zm-247 1h1v1h-1zm2 0h1v1h-1zm6 0h1v1h-1zm15 0h1v1h-1zm6 0h1v1h-1zm1 0h1v1h-1zm14 0h1v1h-1zm12 0h1v1h-1zm1 0h1v1h-1zm9 0h1v1h-1zm9 0h1v1h-1zm3 0h1v1h-1zm11 0h1v1h-1zm1 0h1v1h-1zm3 0h1v1h-1zm7 0h1v1h-1zm7 0h1v1h-1zm3 0h1v1h-1zm5 0h1v1h-1zm2 0h1v1h-1zm6 0h1v1h-1zm10 0h1v1h-1zm14 0h1v1h-1zm8 0h1v1h-1zm6 0h1v1h-1zm20 0h1v1h-1zm2 0h1v1h-1zm18 0h1v1h-1zm6 0h1v1h-1zm18 0h1v1h-1zm-186 1h1v1h-1zm2 0h1v1h-1zm12 0h1v1h-1zm3 0h1v1h-1zm8 0h1v1h-1zm7 0h1v1h-1zm5 0h1v1h-1zm2 0h1v1h-1zm17 0h1v1h-1zm6 0h1v1h-1zm10 0h1v1h-1zm2 0h1v1h-1zm26 0h1v1h-1zm12 0h1v1h-1zm15 0h1v1h-1zm17 0h1v1h-1zm1 0h1v1h-1zm3 0h1v1h-1zm6 0h1v1h-1zm2 0h1v1h-1zm17 0h1v1h-1zm2 0h1v1h-1zm1 0h1v1h-1zm10 0h1v1h-1zm6 0h1v1h-1zm3 0h1v1h-1zm17 0h1v1h-1zm-250 1h1v1h-1zm19 0h1v1h-1zm3 0h1v1h-1zm1 0h1v1h-1zm7 0h1v1h-1zm8 0h1v1h-1zm1 0h1v1h-1zm2 0h1v1h-1zm15 0h1v1h-1zm3 0h1v1h-1zm1 0h1v1h-1zm11 0h1v1h-1zm3 0h1v1h-1zm15 0h1v1h-1zm10 0h1v1h-1zm2 0h1v1h-1zm4 0h1v1h-1zm3 0h1v1h-1zm13 0h1v1h-1zm8 0h1v1h-1zm3 0h1v1h-1zm8 0h1v1h-1zm30 0h1v1h-1zm10 0h1v1h-1zm2 0h1v1h-1zm3 0h1v1h-1zm21 0h1v1h-1zm6 0h1v1h-1zm1 0h1v1h-1zm2 0h1v1h-1zm4 0h1v1h-1zm16 0h1v1h-1zm-215 1h1v1h-1zm14 0h1v1h-1zm12 0h1v1h-1zm28 0h1v1h-1zm10 0h1v1h-1zm2 0h1v1h-1zm4 0h1v1h-1zm2 0h1v1h-1zm27 0h1v1h-1zm1 0h1v1h-1zm14 0h1v1h-1zm3 0h1v1h-1zm17 0h1v1h-1zm6 0h1v1h-1zm1 0h1v1h-1zm6 0h1v1h-1zm14 0h1v1h-1zm21 0h1v1h-1zm3 0h1v1h-1zm1 0h1v1h-1zm5 0h1v1h-1zm5 0h1v1h-1zm3 0h1v1h-1zm1 0h1v1h-1zm8 0h1v1h-1zm15 0h1v1h-1zm-244 1h1v1h-1zm3 0h1v1h-1zm11 0h1v1h-1zm3 0h1v1h-1zm3 0h1v1h-1zm9 0h1v1h-1zm12 0h1v1h-1zm2 0h1v1h-1zm12 0h1v1h-1zm2 0h1v1h-1zm3 0h1v1h-1zm1 0h1v1h-1zm7 0h1v1h-1zm3 0h1v1h-1zm7 0h1v1h-1zm19 0h1v1h-1zm2 0h1v1h-1zm3 0h1v1h-1zm1 0h1v1h-1zm7 0h1v1h-1zm10 0h1v1h-1zm21 0h1v1h-1zm5 0h1v1h-1zm3 0h1v1h-1zm21 0h1v1h-1zm4 0h1v1h-1zm6 0h1v1h-1zm8 0h1v1h-1zm6 0h1v1h-1zm4 0h1v1h-1zm3 0h1v1h-1zm22 0h1v1h-1zm12 0h1v1h-1zm12 0h1v1h-1zm2 0h1v1h-1zm-248 1h1v1h-1zm5 0h1v1h-1zm2 0h1v1h-1zm11 0h1v1h-1zm1 0h1v1h-1zm13 0h1v1h-1zm6 0h1v1h-1zm9 0h1v1h-1zm6 0h1v1h-1zm10 0h1v1h-1zm5 0h1v1h-1zm4 0h1v1h-1zm24 0h1v1h-1zm10 0h1v1h-1zm7 0h1v1h-1zm1 0h1v1h-1zm4 0h1v1h-1zm11 0h1v1h-1zm1 0h1v1h-1zm12 0h1v1h-1zm7 0h1v1h-1zm8 0h1v1h-1zm13 0h1v1h-1zm9 0h1v1h-1zm2 0h1v1h-1zm22 0h1v1h-1zm6 0h1v1h-1zm40 0h1v1h-1zm-244 1h1v1h-1zm2 0h1v1h-1zm6 0h1v1h-1zm2 0h1v1h-1zm2 0h1v1h-1zm1 0h1v1h-1zm10 0h1v1h-1zm13 0h1v1h-1zm12 0h1v1h-1zm10 0h1v1h-1zm7 0h1v1h-1zm17 0h1v1h-1zm25 0h1v1h-1zm5 0h1v1h-1zm1 0h1v1h-1zm19 0h1v1h-1zm17 0h1v1h-1zm8 0h1v1h-1zm2 0h1v1h-1zm38 0h1v1h-1zm5 0h1v1h-1zm1 0h1v1h-1zm1 0h1v1h-1zm2 0h1v1h-1zm7 0h1v1h-1zm1 0h1v1h-1zm8 0h1v1h-1zm2 0h1v1h-1zm19 0h1v1h-1zm-250 1h1v1h-1zm8 0h1v1h-1zm21 0h1v1h-1zm2 0h1v1h-1zm4 0h1v1h-1zm1 0h1v1h-1zm7 0h1v1h-1zm15 0h1v1h-1zm8 0h1v1h-1zm13 0h1v1h-1zm7 0h1v1h-1zm10 0h1v1h-1zm2 0h1v1h-1zm5 0h1v1h-1zm4 0h1v1h-1zm3 0h1v1h-1zm10 0h1v1h-1zm3 0h1v1h-1zm9 0h1v1h-1zm6 0h1v1h-1zm15 0h1v1h-1zm7 0h1v1h-1zm4 0h1v1h-1zm21 0h1v1h-1zm1 0h1v1h-1zm5 0h1v1h-1zm10 0h1v1h-1zm7 0h1v1h-1zm4 0h1v1h-1zm7 0h1v1h-1zm12 0h1v1h-1zm11 0h1v1h-1zm9 0h1v1h-1zm-253 1h1v1h-1zm16 0h1v1h-1zm2 0h1v1h-1zm5 0h1v1h-1zm36 0h1v1h-1zm24 0h1v1h-1zm1 0h1v1h-1zm5 0h1v1h-1zm1 0h1v1h-1zm18 0h1v1h-1zm9 0h1v1h-1zm5 0h1v1h-1zm8 0h1v1h-1zm18 0h1v1h-1zm5 0h1v1h-1zm26 0h1v1h-1zm8 0h1v1h-1zm1 0h1v1h-1zm7 0h1v1h-1zm9 0h1v1h-1zm11 0h1v1h-1zm10 0h1v1h-1zm10 0h1v1h-1zm3 0h1v1h-1zm2 0h1v1h-1zm6 0h1v1h-1zm-246 1h1v1h-1zm15 0h1v1h-1zm1 0h1v1h-1zm5 0h1v1h-1zm2 0h1v1h-1zm5 0h1v1h-1zm24 0h1v1h-1zm13 0h1v1h-1zm6 0h1v1h-1zm28 0h1v1h-1zm7 0h1v1h-1zm1 0h1v1h-1zm9 0h1v1h-1zm1 0h1v1h-1zm1 0h1v1h-1zm5 0h1v1h-1zm9 0h1v1h-1zm2 0h1v1h-1zm3 0h1v1h-1zm2 0h1v1h-1zm3 0h1v1h-1zm21 0h1v1h-1zm13 0h1v1h-1zm6 0h1v1h-1zm32 0h1v1h-1zm2 0h1v1h-1zm17 0h1v1h-1zm1 0h1v1h-1zm17 0h1v1h-1zm-227 1h1v1h-1zm4 0h1v1h-1zm19 0h1v1h-1zm3 0h1v1h-1zm1 0h1v1h-1zm15 0h1v1h-1zm28 0h1v1h-1zm11 0h1v1h-1zm10 0h1v1h-1zm14 0h1v1h-1zm9 0h1v1h-1zm18 0h1v1h-1zm1 0h1v1h-1zm5 0h1v1h-1zm12 0h1v1h-1zm16 0h1v1h-1zm10 0h1v1h-1zm18 0h1v1h-1zm3 0h1v1h-1zm2 0h1v1h-1zm4 0h1v1h-1zm3 0h1v1h-1zm1 0h1v1h-1zm16 0h1v1h-1zm7 0h1v1h-1zm-237 1h1v1h-1zm1 0h1v1h-1zm8 0h1v1h-1zm8 0h1v1h-1zm3 0h1v1h-1zm2 0h1v1h-1zm7 0h1v1h-1zm1 0h1v1h-1zm7 0h1v1h-1zm3 0h1v1h-1zm1 0h1v1h-1zm16 0h1v1h-1zm1 0h1v1h-1zm11 0h1v1h-1zm3 0h1v1h-1zm1 0h1v1h-1zm12 0h1v1h-1zm7 0h1v1h-1zm9 0h1v1h-1zm12 0h1v1h-1zm6 0h1v1h-1zm1 0h1v1h-1zm3 0h1v1h-1zm1 0h1v1h-1zm6 0h1v1h-1zm1 0h1v1h-1zm9 0h1v1h-1zm17 0h1v1h-1zm28 0h1v1h-1zm20 0h1v1h-1zm4 0h1v1h-1zm2 0h1v1h-1zm8 0h1v1h-1zm6 0h1v1h-1zm8 0h1v1h-1zm-239 1h1v1h-1zm3 0h1v1h-1zm4 0h1v1h-1zm20 0h1v1h-1zm12 0h1v1h-1zm2 0h1v1h-1zm2 0h1v1h-1zm5 0h1v1h-1zm6 0h1v1h-1zm40 0h1v1h-1zm1 0h1v1h-1zm1 0h1v1h-1zm5 0h1v1h-1zm14 0h1v1h-1zm28 0h1v1h-1zm7 0h1v1h-1zm11 0h1v1h-1zm2 0h1v1h-1zm17 0h1v1h-1zm1 0h1v1h-1zm3 0h1v1h-1zm3 0h1v1h-1zm9 0h1v1h-1zm33 0h1v1h-1zm2 0h1v1h-1zm4 0h1v1h-1zm7 0h1v1h-1zm-250 1h1v1h-1zm3 0h1v1h-1zm13 0h1v1h-1zm3 0h1v1h-1zm5 0h1v1h-1zm1 0h1v1h-1zm9 0h1v1h-1zm1 0h1v1h-1zm1 0h1v1h-1zm5 0h1v1h-1zm6 0h1v1h-1zm17 0h1v1h-1zm7 0h1v1h-1zm3 0h1v1h-1zm3 0h1v1h-1zm34 0h1v1h-1zm11 0h1v1h-1zm2 0h1v1h-1zm1 0h1v1h-1zm3 0h1v1h-1zm1 0h1v1h-1zm12 0h1v1h-1zm3 0h1v1h-1zm2 0h1v1h-1zm3 0h1v1h-1zm7 0h1v1h-1zm12 0h1v1h-1zm17 0h1v1h-1zm3 0h1v1h-1zm13 0h1v1h-1zm8 0h1v1h-1zm4 0h1v1h-1zm-215 1h1v1h-1zm3 0h1v1h-1zm17 0h1v1h-1zm21 0h1v1h-1zm16 0h1v1h-1zm8 0h1v1h-1zm3 0h1v1h-1zm20 0h1v1h-1zm12 0h1v1h-1zm3 0h1v1h-1zm3 0h1v1h-1zm14 0h1v1h-1zm9 0h1v1h-1zm5 0h1v1h-1zm10 0h1v1h-1zm7 0h1v1h-1zm12 0h1v1h-1zm7 0h1v1h-1zm1 0h1v1h-1zm7 0h1v1h-1zm12 0h1v1h-1zm2 0h1v1h-1zm40 0h1v1h-1zm3 0h1v1h-1zm3 0h1v1h-1zm1 0h1v1h-1zm-238 1h1v1h-1zm39 0h1v1h-1zm10 0h1v1h-1zm2 0h1v1h-1zm8 0h1v1h-1zm1 0h1v1h-1zm5 0h1v1h-1zm8 0h1v1h-1zm26 0h1v1h-1zm4 0h1v1h-1zm6 0h1v1h-1zm7 0h1v1h-1zm4 0h1v1h-1zm26 0h1v1h-1zm19 0h1v1h-1zm19 0h1v1h-1zm2 0h1v1h-1zm6 0h1v1h-1zm9 0h1v1h-1zm3 0h1v1h-1zm38 0h1v1h-1zm-243 1h1v1h-1zm12 0h1v1h-1zm14 0h1v1h-1zm6 0h1v1h-1zm18 0h1v1h-1zm17 0h1v1h-1zm6 0h1v1h-1zm3 0h1v1h-1zm4 0h1v1h-1zm5 0h1v1h-1zm1 0h1v1h-1zm2 0h1v1h-1zm12 0h1v1h-1zm6 0h1v1h-1zm7 0h1v1h-1zm9 0h1v1h-1zm20 0h1v1h-1zm13 0h1v1h-1zm8 0h1v1h-1zm15 0h1v1h-1zm6 0h1v1h-1zm17 0h1v1h-1zm7 0h1v1h-1zm22 0h1v1h-1zm4 0h1v1h-1zm19 0h1v1h-1zm-248 1h1v1h-1zm7 0h1v1h-1zm3 0h1v1h-1zm22 0h1v1h-1zm1 0h1v1h-1zm20 0h1v1h-1zm5 0h1v1h-1zm1 0h1v1h-1zm14 0h1v1h-1zm4 0h1v1h-1zm3 0h1v1h-1zm3 0h1v1h-1zm3 0h1v1h-1zm9 0h1v1h-1zm6 0h1v1h-1zm27 0h1v1h-1zm1 0h1v1h-1zm1 0h1v1h-1zm7 0h1v1h-1zm3 0h1v1h-1zm17 0h1v1h-1zm14 0h1v1h-1zm4 0h1v1h-1zm8 0h1v1h-1zm4 0h1v1h-1zm7 0h1v1h-1zm2 0h1v1h-1zm26 0h1v1h-1zm7 0h1v1h-1zm13 0h1v1h-1zm4 0h1v1h-1zm-240 1h1v1h-1zm14 0h1v1h-1zm8 0h1v1h-1zm9 0h1v1h-1zm1 0h1v1h-1zm6 0h1v1h-1zm7 0h1v1h-1zm2 0h1v1h-1zm12 0h1v1h-1zm5 0h1v1h-1zm1 0h1v1h-1zm4 0h1v1h-1zm12 0h1v1h-1zm13 0h1v1h-1zm3 0h1v1h-1zm16 0h1v1h-1zm8 0h1v1h-1zm9 0h1v1h-1zm10 0h1v1h-1zm2 0h1v1h-1zm3 0h1v1h-1zm12 0h1v1h-1zm3 0h1v1h-1zm1 0h1v1h-1zm6 0h1v1h-1zm4 0h1v1h-1zm6 0h1v1h-1zm11 0h1v1h-1zm2 0h1v1h-1zm6 0h1v1h-1zm7 0h1v1h-1zm7 0h1v1h-1zm10 0h1v1h-1zm3 0h1v1h-1zm5 0h1v1h-1zm7 0h1v1h-1zm5 0h1v1h-1zm-251 1h1v1h-1zm4 0h1v1h-1zm2 0h1v1h-1zm1 0h1v1h-1zm9 0h1v1h-1zm1 0h1v1h-1zm47 0h1v1h-1zm6 0h1v1h-1zm4 0h1v1h-1zm3 0h1v1h-1zm19 0h1v1h-1zm6 0h1v1h-1zm29 0h1v1h-1zm13 0h1v1h-1zm2 0h1v1h-1zm5 0h1v1h-1zm9 0h1v1h-1zm7 0h1v1h-1zm9 0h1v1h-1zm9 0h1v1h-1zm7 0h1v1h-1zm16 0h1v1h-1zm13 0h1v1h-1zm11 0h1v1h-1zm2 0h1v1h-1zm12 0h1v1h-1zm3 0h1v1h-1zm3 0h1v1h-1zm-250 1h1v1h-1zm4 0h1v1h-1zm8 0h1v1h-1zm6 0h1v1h-1zm4 0h1v1h-1zm13 0h1v1h-1zm6 0h1v1h-1zm3 0h1v1h-1zm6 0h1v1h-1zm5 0h1v1h-1zm3 0h1v1h-1zm5 0h1v1h-1zm6 0h1v1h-1zm2 0h1v1h-1zm5 0h1v1h-1zm7 0h1v1h-1zm1 0h1v1h-1zm8 0h1v1h-1zm8 0h1v1h-1zm12 0h1v1h-1zm5 0h1v1h-1zm7 0h1v1h-1zm2 0h1v1h-1zm1 0h1v1h-1zm2 0h1v1h-1zm28 0h1v1h-1zm12 0h1v1h-1zm20 0h1v1h-1zm4 0h1v1h-1zm2 0h1v1h-1zm4 0h1v1h-1zm19 0h1v1h-1zm4 0h1v1h-1zm-213 1h1v1h-1zm5 0h1v1h-1zm6 0h1v1h-1zm6 0h1v1h-1zm5 0h1v1h-1zm2 0h1v1h-1zm1 0h1v1h-1zm3 0h1v1h-1zm5 0h1v1h-1zm3 0h1v1h-1zm14 0h1v1h-1zm9 0h1v1h-1zm14 0h1v1h-1zm5 0h1v1h-1zm4 0h1v1h-1zm11 0h1v1h-1zm11 0h1v1h-1zm1 0h1v1h-1zm6 0h1v1h-1zm28 0h1v1h-1zm1 0h1v1h-1zm9 0h1v1h-1zm3 0h1v1h-1zm23 0h1v1h-1zm12 0h1v1h-1zm1 0h1v1h-1zm10 0h1v1h-1zm5 0h1v1h-1zm10 0h1v1h-1zm21 0h1v1h-1zm8 0h1v1h-1zm-246 1h1v1h-1zm9 0h1v1h-1zm26 0h1v1h-1zm2 0h1v1h-1zm7 0h1v1h-1zm1 0h1v1h-1zm13 0h1v1h-1zm3 0h1v1h-1zm1 0h1v1h-1zm7 0h1v1h-1zm13 0h1v1h-1zm9 0h1v1h-1zm1 0h1v1h-1zm16 0h1v1h-1zm5 0h1v1h-1zm7 0h1v1h-1zm10 0h1v1h-1zm4 0h1v1h-1zm5 0h1v1h-1zm11 0h1v1h-1zm23 0h1v1h-1zm2 0h1v1h-1zm5 0h1v1h-1zm9 0h1v1h-1zm4 0h1v1h-1zm3 0h1v1h-1zm2 0h1v1h-1zm7 0h1v1h-1zm1 0h1v1h-1zm3 0h1v1h-1zm1 0h1v1h-1zm16 0h1v1h-1zm-213 1h1v1h-1zm2 0h1v1h-1zm1 0h1v1h-1zm8 0h1v1h-1zm1 0h1v1h-1zm5 0h1v1h-1zm4 0h1v1h-1zm12 0h1v1h-1zm4 0h1v1h-1zm3 0h1v1h-1zm8 0h1v1h-1zm13 0h1v1h-1zm1 0h1v1h-1zm2 0h1v1h-1zm4 0h1v1h-1zm25 0h1v1h-1zm4 0h1v1h-1zm4 0h1v1h-1zm8 0h1v1h-1zm3 0h1v1h-1zm9 0h1v1h-1zm6 0h1v1h-1zm11 0h1v1h-1zm4 0h1v1h-1zm1 0h1v1h-1zm1 0h1v1h-1zm12 0h1v1h-1zm1 0h1v1h-1zm2 0h1v1h-1zm12 0h1v1h-1zm9 0h1v1h-1zm8 0h1v1h-1zm13 0h1v1h-1zm17 0h1v1h-1zm-226 1h1v1h-1zm26 0h1v1h-1zm20 0h1v1h-1zm4 0h1v1h-1zm11 0h1v1h-1zm3 0h1v1h-1zm11 0h1v1h-1zm6 0h1v1h-1zm3 0h1v1h-1zm3 0h1v1h-1zm5 0h1v1h-1zm1 0h1v1h-1zm3 0h1v1h-1zm12 0h1v1h-1zm36 0h1v1h-1zm17 0h1v1h-1zm10 0h1v1h-1zm9 0h1v1h-1zm16 0h1v1h-1zm43 0h1v1h-1zm3 0h1v1h-1zm-254 1h1v1h-1zm8 0h1v1h-1zm5 0h1v1h-1zm6 0h1v1h-1zm1 0h1v1h-1zm9 0h1v1h-1zm5 0h1v1h-1zm16 0h1v1h-1zm3 0h1v1h-1zm30 0h1v1h-1zm1 0h1v1h-1zm12 0h1v1h-1zm4 0h1v1h-1zm9 0h1v1h-1zm6 0h1v1h-1zm7 0h1v1h-1zm4 0h1v1h-1zm8 0h1v1h-1zm9 0h1v1h-1zm1 0h1v1h-1zm4 0h1v1h-1zm9 0h1v1h-1zm3 0h1v1h-1zm6 0h1v1h-1zm9 0h1v1h-1zm4 0h1v1h-1zm29 0h1v1h-1zm16 0h1v1h-1zm2 0h1v1h-1zm2 0h1v1h-1zm2 0h1v1h-1zm1 0h1v1h-1zm23 0h1v1h-1zm-223 1h1v1h-1zm12 0h1v1h-1zm6 0h1v1h-1zm3 0h1v1h-1zm6 0h1v1h-1zm4 0h1v1h-1zm12 0h1v1h-1zm3 0h1v1h-1zm4 0h1v1h-1zm2 0h1v1h-1zm31 0h1v1h-1zm8 0h1v1h-1zm14 0h1v1h-1zm27 0h1v1h-1zm6 0h1v1h-1zm22 0h1v1h-1zm9 0h1v1h-1zm24 0h1v1h-1zm10 0h1v1h-1zm4 0h1v1h-1zm5 0h1v1h-1zm5 0h1v1h-1zm-245 1h1v1h-1zm22 0h1v1h-1zm12 0h1v1h-1zm5 0h1v1h-1zm13 0h1v1h-1zm2 0h1v1h-1zm2 0h1v1h-1zm7 0h1v1h-1zm3 0h1v1h-1zm9 0h1v1h-1zm1 0h1v1h-1zm16 0h1v1h-1zm4 0h1v1h-1zm9 0h1v1h-1zm3 0h1v1h-1zm9 0h1v1h-1zm5 0h1v1h-1zm1 0h1v1h-1zm21 0h1v1h-1zm19 0h1v1h-1zm2 0h1v1h-1zm6 0h1v1h-1zm8 0h1v1h-1zm3 0h1v1h-1zm24 0h1v1h-1zm18 0h1v1h-1zm18 0h1v1h-1zm4 0h1v1h-1zm5 0h1v1h-1zm-251 1h1v1h-1zm1 0h1v1h-1zm6 0h1v1h-1zm6 0h1v1h-1zm4 0h1v1h-1zm16 0h1v1h-1zm6 0h1v1h-1zm8 0h1v1h-1zm18 0h1v1h-1zm12 0h1v1h-1zm2 0h1v1h-1zm19 0h1v1h-1zm3 0h1v1h-1zm13 0h1v1h-1zm11 0h1v1h-1zm9 0h1v1h-1zm2 0h1v1h-1zm11 0h1v1h-1zm11 0h1v1h-1zm2 0h1v1h-1zm2 0h1v1h-1zm2 0h1v1h-1zm3 0h1v1h-1zm3 0h1v1h-1zm17 0h1v1h-1zm15 0h1v1h-1zm15 0h1v1h-1zm5 0h1v1h-1zm21 0h1v1h-1zm1 0h1v1h-1zm4 0h1v1h-1zm2 0h1v1h-1zm-252 1h1v1h-1zm7 0h1v1h-1zm9 0h1v1h-1zm11 0h1v1h-1zm4 0h1v1h-1zm32 0h1v1h-1zm15 0h1v1h-1zm2 0h1v1h-1zm9 0h1v1h-1zm16 0h1v1h-1zm5 0h1v1h-1zm1 0h1v1h-1zm1 0h1v1h-1zm4 0h1v1h-1zm15 0h1v1h-1zm11 0h1v1h-1zm8 0h1v1h-1zm7 0h1v1h-1zm6 0h1v1h-1zm6 0h1v1h-1zm2 0h1v1h-1zm19 0h1v1h-1zm8 0h1v1h-1zm1 0h1v1h-1zm9 0h1v1h-1zm1 0h1v1h-1zm3 0h1v1h-1zm9 0h1v1h-1zm-219 1h1v1h-1zm3 0h1v1h-1zm15 0h1v1h-1zm2 0h1v1h-1zm25 0h1v1h-1zm11 0h1v1h-1zm5 0h1v1h-1zm43 0h1v1h-1zm5 0h1v1h-1zm1 0h1v1h-1zm8 0h1v1h-1zm6 0h1v1h-1zm8 0h1v1h-1zm9 0h1v1h-1zm10 0h1v1h-1zm3 0h1v1h-1zm11 0h1v1h-1zm26 0h1v1h-1zm7 0h1v1h-1zm6 0h1v1h-1zm8 0h1v1h-1zm2 0h1v1h-1zm3 0h1v1h-1zm3 0h1v1h-1zm6 0h1v1h-1zm8 0h1v1h-1zm6 0h1v1h-1zm-242 1h1v1h-1zm13 0h1v1h-1zm12 0h1v1h-1zm4 0h1v1h-1zm7 0h1v1h-1zm10 0h1v1h-1zm1 0h1v1h-1zm12 0h1v1h-1zm1 0h1v1h-1zm9 0h1v1h-1zm1 0h1v1h-1zm2 0h1v1h-1zm3 0h1v1h-1zm13 0h1v1h-1zm22 0h1v1h-1zm5 0h1v1h-1zm20 0h1v1h-1zm16 0h1v1h-1zm16 0h1v1h-1zm5 0h1v1h-1zm4 0h1v1h-1zm14 0h1v1h-1zm35 0h1v1h-1zm12 0h1v1h-1zm1 0h1v1h-1zm10 0h1v1h-1zm-245 1h1v1h-1zm2 0h1v1h-1zm1 0h1v1h-1zm4 0h1v1h-1zm18 0h1v1h-1zm19 0h1v1h-1zm11 0h1v1h-1zm19 0h1v1h-1zm2 0h1v1h-1zm13 0h1v1h-1zm2 0h1v1h-1zm2 0h1v1h-1zm28 0h1v1h-1zm2 0h1v1h-1zm3 0h1v1h-1zm3 0h1v1h-1zm19 0h1v1h-1zm16 0h1v1h-1zm2 0h1v1h-1zm5 0h1v1h-1zm19 0h1v1h-1zm6 0h1v1h-1zm48 0h1v1h-1zm4 0h1v1h-1zm-251 1h1v1h-1zm8 0h1v1h-1zm24 0h1v1h-1zm3 0h1v1h-1zm1 0h1v1h-1zm5 0h1v1h-1zm29 0h1v1h-1zm11 0h1v1h-1zm11 0h1v1h-1zm3 0h1v1h-1zm4 0h1v1h-1zm7 0h1v1h-1zm1 0h1v1h-1zm3 0h1v1h-1zm12 0h1v1h-1zm10 0h1v1h-1zm4 0h1v1h-1zm15 0h1v1h-1zm10 0h1v1h-1zm3 0h1v1h-1zm19 0h1v1h-1zm16 0h1v1h-1zm2 0h1v1h-1zm8 0h1v1h-1zm1 0h1v1h-1zm10 0h1v1h-1zm6 0h1v1h-1zm19 0h1v1h-1zm7 0h1v1h-1zm-240 1h1v1h-1zm18 0h1v1h-1zm16 0h1v1h-1zm24 0h1v1h-1zm1 0h1v1h-1zm1 0h1v1h-1zm15 0h1v1h-1zm14 0h1v1h-1zm10 0h1v1h-1zm5 0h1v1h-1zm27 0h1v1h-1zm26 0h1v1h-1zm8 0h1v1h-1zm2 0h1v1h-1zm10 0h1v1h-1zm2 0h1v1h-1zm11 0h1v1h-1zm2 0h1v1h-1zm1 0h1v1h-1zm4 0h1v1h-1zm2 0h1v1h-1zm4 0h1v1h-1zm21 0h1v1h-1zm9 0h1v1h-1zm-241 1h1v1h-1zm6 0h1v1h-1zm3 0h1v1h-1zm3 0h1v1h-1zm24 0h1v1h-1zm27 0h1v1h-1zm11 0h1v1h-1zm25 0h1v1h-1zm3 0h1v1h-1zm4 0h1v1h-1zm8 0h1v1h-1zm26 0h1v1h-1zm6 0h1v1h-1zm3 0h1v1h-1zm1 0h1v1h-1zm23 0h1v1h-1zm17 0h1v1h-1zm4 0h1v1h-1zm4 0h1v1h-1zm8 0h1v1h-1zm3 0h1v1h-1zm10 0h1v1h-1zm7 0h1v1h-1zm8 0h1v1h-1zm8 0h1v1h-1zm-248 1h1v1h-1zm11 0h1v1h-1zm5 0h1v1h-1zm6 0h1v1h-1zm9 0h1v1h-1zm1 0h1v1h-1zm9 0h1v1h-1zm1 0h1v1h-1zm6 0h1v1h-1zm24 0h1v1h-1zm17 0h1v1h-1zm25 0h1v1h-1zm5 0h1v1h-1zm19 0h1v1h-1zm5 0h1v1h-1zm16 0h1v1h-1zm14 0h1v1h-1zm27 0h1v1h-1zm15 0h1v1h-1zm9 0h1v1h-1zm1 0h1v1h-1zm9 0h1v1h-1zm2 0h1v1h-1zm1 0h1v1h-1zm4 0h1v1h-1zm3 0h1v1h-1zm10 0h1v1h-1zm-233 1h1v1h-1zm3 0h1v1h-1zm1 0h1v1h-1zm17 0h1v1h-1zm4 0h1v1h-1zm8 0h1v1h-1zm2 0h1v1h-1zm1 0h1v1h-1zm13 0h1v1h-1zm13 0h1v1h-1zm30 0h1v1h-1zm2 0h1v1h-1zm14 0h1v1h-1zm8 0h1v1h-1zm9 0h1v1h-1zm18 0h1v1h-1zm5 0h1v1h-1zm5 0h1v1h-1zm3 0h1v1h-1zm7 0h1v1h-1zm1 0h1v1h-1zm6 0h1v1h-1zm2 0h1v1h-1zm3 0h1v1h-1zm15 0h1v1h-1zm17 0h1v1h-1zm10 0h1v1h-1zm4 0h1v1h-1zm3 0h1v1h-1zm8 0h1v1h-1zm-242 1h1v1h-1zm10 0h1v1h-1zm4 0h1v1h-1zm2 0h1v1h-1zm6 0h1v1h-1zm15 0h1v1h-1zm8 0h1v1h-1zm23 0h1v1h-1zm1 0h1v1h-1zm16 0h1v1h-1zm2 0h1v1h-1zm4 0h1v1h-1zm14 0h1v1h-1zm11 0h1v1h-1zm6 0h1v1h-1zm1 0h1v1h-1zm21 0h1v1h-1zm1 0h1v1h-1zm6 0h1v1h-1zm11 0h1v1h-1zm5 0h1v1h-1zm2 0h1v1h-1zm1 0h1v1h-1zm1 0h1v1h-1zm21 0h1v1h-1zm6 0h1v1h-1zm10 0h1v1h-1zm7 0h1v1h-1zm10 0h1v1h-1zm13 0h1v1h-1zm-232 1h1v1h-1zm10 0h1v1h-1zm13 0h1v1h-1zm4 0h1v1h-1zm10 0h1v1h-1zm3 0h1v1h-1zm21 0h1v1h-1zm2 0h1v1h-1zm10 0h1v1h-1zm3 0h1v1h-1zm23 0h1v1h-1zm27 0h1v1h-1zm2 0h1v1h-1zm1 0h1v1h-1zm3 0h1v1h-1zm18 0h1v1h-1zm15 0h1v1h-1zm11 0h1v1h-1zm4 0h1v1h-1zm7 0h1v1h-1zm17 0h1v1h-1zm5 0h1v1h-1zm19 0h1v1h-1zm-233 1h1v1h-1zm13 0h1v1h-1zm6 0h1v1h-1zm13 0h1v1h-1zm2 0h1v1h-1zm4 0h1v1h-1zm3 0h1v1h-1zm9 0h1v1h-1zm9 0h1v1h-1zm19 0h1v1h-1zm3 0h1v1h-1zm4 0h1v1h-1zm13 0h1v1h-1zm3 0h1v1h-1zm12 0h1v1h-1zm1 0h1v1h-1zm6 0h1v1h-1zm1 0h1v1h-1zm8 0h1v1h-1zm13 0h1v1h-1zm8 0h1v1h-1zm4 0h1v1h-1zm13 0h1v1h-1zm10 0h1v1h-1zm6 0h1v1h-1zm5 0h1v1h-1zm4 0h1v1h-1zm10 0h1v1h-1zm3 0h1v1h-1zm3 0h1v1h-1zm12 0h1v1h-1zm4 0h1v1h-1zm15 0h1v1h-1zm3 0h1v1h-1zm-249 1h1v1h-1zm2 0h1v1h-1zm9 0h1v1h-1zm8 0h1v1h-1zm2 0h1v1h-1zm15 0h1v1h-1zm29 0h1v1h-1zm26 0h1v1h-1zm12 0h1v1h-1zm1 0h1v1h-1zm16 0h1v1h-1zm1 0h1v1h-1zm6 0h1v1h-1zm5 0h1v1h-1zm13 0h1v1h-1zm18 0h1v1h-1zm12 0h1v1h-1zm19 0h1v1h-1zm9 0h1v1h-1zm1 0h1v1h-1zm1 0h1v1h-1zm4 0h1v1h-1zm1 0h1v1h-1zm35 0h1v1h-1zm-244 1h1v1h-1zm4 0h1v1h-1zm10 0h1v1h-1zm14 0h1v1h-1zm2 0h1v1h-1zm13 0h1v1h-1zm13 0h1v1h-1zm18 0h1v1h-1zm2 0h1v1h-1zm7 0h1v1h-1zm20 0h1v1h-1zm19 0h1v1h-1zm24 0h1v1h-1zm9 0h1v1h-1zm4 0h1v1h-1zm3 0h1v1h-1zm4 0h1v1h-1zm5 0h1v1h-1zm7 0h1v1h-1zm13 0h1v1h-1zm2 0h1v1h-1zm7 0h1v1h-1zm20 0h1v1h-1zm-226 1h1v1h-1zm2 0h1v1h-1zm3 0h1v1h-1zm9 0h1v1h-1zm1 0h1v1h-1zm4 0h1v1h-1zm6 0h1v1h-1zm1 0h1v1h-1zm28 0h1v1h-1zm7 0h1v1h-1zm17 0h1v1h-1zm13 0h1v1h-1zm1 0h1v1h-1zm1 0h1v1h-1zm28 0h1v1h-1zm7 0h1v1h-1zm4 0h1v1h-1zm20 0h1v1h-1zm6 0h1v1h-1zm11 0h1v1h-1zm6 0h1v1h-1zm2 0h1v1h-1zm10 0h1v1h-1zm4 0h1v1h-1zm7 0h1v1h-1zm8 0h1v1h-1zm3 0h1v1h-1zm5 0h1v1h-1zm25 0h1v1h-1zm1 0h1v1h-1zm6 0h1v1h-1zm-240 1h1v1h-1zm6 0h1v1h-1zm3 0h1v1h-1zm27 0h1v1h-1zm2 0h1v1h-1zm27 0h1v1h-1zm26 0h1v1h-1zm9 0h1v1h-1zm7 0h1v1h-1zm5 0h1v1h-1zm6 0h1v1h-1zm11 0h1v1h-1zm29 0h1v1h-1zm7 0h1v1h-1zm1 0h1v1h-1zm4 0h1v1h-1zm3 0h1v1h-1zm22 0h1v1h-1zm6 0h1v1h-1zm8 0h1v1h-1zm3 0h1v1h-1zm10 0h1v1h-1zm15 0h1v1h-1zm6 0h1v1h-1zm-245 1h1v1h-1zm16 0h1v1h-1zm5 0h1v1h-1zm3 0h1v1h-1zm4 0h1v1h-1zm3 0h1v1h-1zm1 0h1v1h-1zm2 0h1v1h-1zm1 0h1v1h-1zm3 0h1v1h-1zm4 0h1v1h-1zm16 0h1v1h-1zm29 0h1v1h-1zm6 0h1v1h-1zm6 0h1v1h-1zm3 0h1v1h-1zm11 0h1v1h-1zm9 0h1v1h-1zm16 0h1v1h-1zm6 0h1v1h-1zm8 0h1v1h-1zm8 0h1v1h-1zm18 0h1v1h-1zm3 0h1v1h-1zm6 0h1v1h-1zm4 0h1v1h-1zm6 0h1v1h-1zm1 0h1v1h-1zm35 0h1v1h-1zm4 0h1v1h-1zm3 0h1v1h-1zm-242 1h1v1h-1zm4 0h1v1h-1zm2 0h1v1h-1zm3 0h1v1h-1zm27 0h1v1h-1zm1 0h1v1h-1zm17 0h1v1h-1zm5 0h1v1h-1zm11 0h1v1h-1zm9 0h1v1h-1zm2 0h1v1h-1zm24 0h1v1h-1zm7 0h1v1h-1zm1 0h1v1h-1zm6 0h1v1h-1zm6 0h1v1h-1zm7 0h1v1h-1zm6 0h1v1h-1zm3 0h1v1h-1zm6 0h1v1h-1zm8 0h1v1h-1zm2 0h1v1h-1zm14 0h1v1h-1zm4 0h1v1h-1zm4 0h1v1h-1zm9 0h1v1h-1zm15 0h1v1h-1zm6 0h1v1h-1zm10 0h1v1h-1zm24 0h1v1h-1zm-239 1h1v1h-1zm1 0h1v1h-1zm3 0h1v1h-1zm6 0h1v1h-1zm6 0h1v1h-1zm15 0h1v1h-1zm19 0h1v1h-1zm3 0h1v1h-1zm1 0h1v1h-1zm19 0h1v1h-1zm14 0h1v1h-1zm2 0h1v1h-1zm1 0h1v1h-1zm28 0h1v1h-1zm8 0h1v1h-1zm4 0h1v1h-1zm8 0h1v1h-1zm4 0h1v1h-1zm7 0h1v1h-1zm20 0h1v1h-1zm4 0h1v1h-1zm3 0h1v1h-1zm4 0h1v1h-1zm21 0h1v1h-1zm7 0h1v1h-1zm8 0h1v1h-1zm14 0h1v1h-1zm8 0h1v1h-1zm-240 1h1v1h-1zm14 0h1v1h-1zm1 0h1v1h-1zm14 0h1v1h-1zm3 0h1v1h-1zm1 0h1v1h-1zm8 0h1v1h-1zm15 0h1v1h-1zm3 0h1v1h-1zm10 0h1v1h-1zm13 0h1v1h-1zm6 0h1v1h-1zm3 0h1v1h-1zm1 0h1v1h-1zm4 0h1v1h-1zm18 0h1v1h-1zm1 0h1v1h-1zm4 0h1v1h-1zm10 0h1v1h-1zm14 0h1v1h-1zm15 0h1v1h-1zm9 0h1v1h-1zm4 0h1v1h-1zm4 0h1v1h-1zm20 0h1v1h-1zm8 0h1v1h-1zm7 0h1v1h-1zm5 0h1v1h-1zm4 0h1v1h-1zm6 0h1v1h-1zm15 0h1v1h-1zm3 0h1v1h-1zm1 0h1v1h-1zm1 0h1v1h-1zm3 0h1v1h-1zm-249 1h1v1h-1zm3 0h1v1h-1zm20 0h1v1h-1zm14 0h1v1h-1zm1 0h1v1h-1zm1 0h1v1h-1zm1 0h1v1h-1zm20 0h1v1h-1zm2 0h1v1h-1zm1 0h1v1h-1zm28 0h1v1h-1zm16 0h1v1h-1zm10 0h1v1h-1zm3 0h1v1h-1zm5 0h1v1h-1zm6 0h1v1h-1zm11 0h1v1h-1zm27 0h1v1h-1zm3 0h1v1h-1zm7 0h1v1h-1zm13 0h1v1h-1zm2 0h1v1h-1zm5 0h1v1h-1zm1 0h1v1h-1zm35 0h1v1h-1zm15 0h1v1h-1zm-251 1h1v1h-1zm14 0h1v1h-1zm3 0h1v1h-1zm11 0h1v1h-1zm4 0h1v1h-1zm14 0h1v1h-1zm3 0h1v1h-1zm3 0h1v1h-1zm6 0h1v1h-1zm18 0h1v1h-1zm9 0h1v1h-1zm6 0h1v1h-1zm13 0h1v1h-1zm12 0h1v1h-1zm9 0h1v1h-1zm10 0h1v1h-1zm2 0h1v1h-1zm21 0h1v1h-1zm6 0h1v1h-1zm10 0h1v1h-1zm5 0h1v1h-1zm18 0h1v1h-1zm1 0h1v1h-1zm17 0h1v1h-1zm9 0h1v1h-1zm11 0h1v1h-1zm3 0h1v1h-1zm2 0h1v1h-1zm-233 1h1v1h-1zm18 0h1v1h-1zm4 0h1v1h-1zm2 0h1v1h-1zm9 0h1v1h-1zm5 0h1v1h-1zm2 0h1v1h-1zm20 0h1v1h-1zm6 0h1v1h-1zm7 0h1v1h-1zm19 0h1v1h-1zm1 0h1v1h-1zm3 0h1v1h-1zm5 0h1v1h-1zm4 0h1v1h-1zm29 0h1v1h-1zm7 0h1v1h-1zm18 0h1v1h-1zm23 0h1v1h-1zm4 0h1v1h-1zm3 0h1v1h-1zm7 0h1v1h-1zm17 0h1v1h-1zm8 0h1v1h-1zm15 0h1v1h-1zm-239 1h1v1h-1zm7 0h1v1h-1zm36 0h1v1h-1zm18 0h1v1h-1zm3 0h1v1h-1zm5 0h1v1h-1zm1 0h1v1h-1zm7 0h1v1h-1zm7 0h1v1h-1zm9 0h1v1h-1zm9 0h1v1h-1zm8 0h1v1h-1zm7 0h1v1h-1zm9 0h1v1h-1zm11 0h1v1h-1zm8 0h1v1h-1zm7 0h1v1h-1zm8 0h1v1h-1zm16 0h1v1h-1zm3 0h1v1h-1zm13 0h1v1h-1zm34 0h1v1h-1zm2 0h1v1h-1zm1 0h1v1h-1zm13 0h1v1h-1zm4 0h1v1h-1zm-243 1h1v1h-1zm3 0h1v1h-1zm25 0h1v1h-1zm9 0h1v1h-1zm11 0h1v1h-1zm12 0h1v1h-1zm1 0h1v1h-1zm9 0h1v1h-1zm3 0h1v1h-1zm8 0h1v1h-1zm21 0h1v1h-1zm7 0h1v1h-1zm1 0h1v1h-1zm1 0h1v1h-1zm1 0h1v1h-1zm3 0h1v1h-1zm4 0h1v1h-1zm8 0h1v1h-1zm17 0h1v1h-1zm30 0h1v1h-1zm25 0h1v1h-1zm4 0h1v1h-1zm2 0h1v1h-1zm9 0h1v1h-1zm1 0h1v1h-1zm3 0h1v1h-1zm12 0h1v1h-1zm-238 1h1v1h-1zm1 0h1v1h-1zm8 0h1v1h-1zm8 0h1v1h-1zm15 0h1v1h-1zm4 0h1v1h-1zm19 0h1v1h-1zm51 0h1v1h-1zm12 0h1v1h-1zm9 0h1v1h-1zm21 0h1v1h-1zm6 0h1v1h-1zm1 0h1v1h-1zm2 0h1v1h-1zm8 0h1v1h-1zm6 0h1v1h-1zm15 0h1v1h-1zm8 0h1v1h-1zm12 0h1v1h-1zm21 0h1v1h-1zm5 0h1v1h-1zm7 0h1v1h-1zm1 0h1v1h-1zm-235 1h1v1h-1zm37 0h1v1h-1zm1 0h1v1h-1zm4 0h1v1h-1zm4 0h1v1h-1zm6 0h1v1h-1zm3 0h1v1h-1zm5 0h1v1h-1zm5 0h1v1h-1zm13 0h1v1h-1zm7 0h1v1h-1zm1 0h1v1h-1zm1 0h1v1h-1zm5 0h1v1h-1zm5 0h1v1h-1zm10 0h1v1h-1zm6 0h1v1h-1zm4 0h1v1h-1zm3 0h1v1h-1zm8 0h1v1h-1zm11 0h1v1h-1zm7 0h1v1h-1zm4 0h1v1h-1zm1 0h1v1h-1zm20 0h1v1h-1zm7 0h1v1h-1zm10 0h1v1h-1zm3 0h1v1h-1zm44 0h1v1h-1zm6 0h1v1h-1zm3 0h1v1h-1zm-249 1h1v1h-1zm12 0h1v1h-1zm2 0h1v1h-1zm1 0h1v1h-1zm4 0h1v1h-1zm9 0h1v1h-1zm28 0h1v1h-1zm17 0h1v1h-1zm8 0h1v1h-1zm5 0h1v1h-1zm8 0h1v1h-1zm14 0h1v1h-1zm30 0h1v1h-1zm12 0h1v1h-1zm18 0h1v1h-1zm4 0h1v1h-1zm1 0h1v1h-1zm2 0h1v1h-1zm4 0h1v1h-1zm2 0h1v1h-1zm1 0h1v1h-1zm9 0h1v1h-1zm2 0h1v1h-1zm4 0h1v1h-1zm6 0h1v1h-1zm32 0h1v1h-1zm3 0h1v1h-1zm8 0h1v1h-1zm1 0h1v1h-1zm5 0h1v1h-1zm-245 1h1v1h-1zm15 0h1v1h-1zm9 0h1v1h-1zm11 0h1v1h-1zm7 0h1v1h-1zm16 0h1v1h-1zm8 0h1v1h-1zm8 0h1v1h-1zm5 0h1v1h-1zm3 0h1v1h-1zm3 0h1v1h-1zm38 0h1v1h-1zm3 0h1v1h-1zm1 0h1v1h-1zm9 0h1v1h-1zm20 0h1v1h-1zm2 0h1v1h-1zm20 0h1v1h-1zm23 0h1v1h-1zm3 0h1v1h-1zm3 0h1v1h-1zm13 0h1v1h-1zm3 0h1v1h-1zm10 0h1v1h-1zm5 0h1v1h-1zm3 0h1v1h-1zm-244 1h1v1h-1zm5 0h1v1h-1zm3 0h1v1h-1zm9 0h1v1h-1zm15 0h1v1h-1zm6 0h1v1h-1zm3 0h1v1h-1zm29 0h1v1h-1zm3 0h1v1h-1zm8 0h1v1h-1zm6 0h1v1h-1zm5 0h1v1h-1zm1 0h1v1h-1zm4 0h1v1h-1zm4 0h1v1h-1zm1 0h1v1h-1zm1 0h1v1h-1zm9 0h1v1h-1zm16 0h1v1h-1zm4 0h1v1h-1zm2 0h1v1h-1zm13 0h1v1h-1zm18 0h1v1h-1zm28 0h1v1h-1zm5 0h1v1h-1zm10 0h1v1h-1zm3 0h1v1h-1zm2 0h1v1h-1zm15 0h1v1h-1zm1 0h1v1h-1zm11 0h1v1h-1zm1 0h1v1h-1zm3 0h1v1h-1zm2 0h1v1h-1zm-247 1h1v1h-1zm4 0h1v1h-1zm14 0h1v1h-1zm5 0h1v1h-1zm5 0h1v1h-1zm5 0h1v1h-1zm4 0h1v1h-1zm9 0h1v1h-1zm7 0h1v1h-1zm14 0h1v1h-1zm10 0h1v1h-1zm14 0h1v1h-1zm3 0h1v1h-1zm6 0h1v1h-1zm2 0h1v1h-1zm7 0h1v1h-1zm11 0h1v1h-1zm17 0h1v1h-1zm9 0h1v1h-1zm12 0h1v1h-1zm4 0h1v1h-1zm3 0h1v1h-1zm7 0h1v1h-1zm20 0h1v1h-1zm4 0h1v1h-1zm7 0h1v1h-1zm10 0h1v1h-1zm8 0h1v1h-1zm2 0h1v1h-1zm10 0h1v1h-1zm2 0h1v1h-1zm11 0h1v1h-1zm-247 1h1v1h-1zm27 0h1v1h-1zm2 0h1v1h-1zm26 0h1v1h-1zm4 0h1v1h-1zm1 0h1v1h-1zm17 0h1v1h-1zm3 0h1v1h-1zm4 0h1v1h-1zm9 0h1v1h-1zm2 0h1v1h-1zm2 0h1v1h-1zm7 0h1v1h-1zm15 0h1v1h-1zm15 0h1v1h-1zm13 0h1v1h-1zm16 0h1v1h-1zm3 0h1v1h-1zm10 0h1v1h-1zm17 0h1v1h-1zm20 0h1v1h-1zm8 0h1v1h-1zm3 0h1v1h-1zm22 0h1v1h-1zm-243 1h1v1h-1zm20 0h1v1h-1zm18 0h1v1h-1zm1 0h1v1h-1zm4 0h1v1h-1zm4 0h1v1h-1zm2 0h1v1h-1zm3 0h1v1h-1zm1 0h1v1h-1zm1 0h1v1h-1zm3 0h1v1h-1zm1 0h1v1h-1zm7 0h1v1h-1zm10 0h1v1h-1zm3 0h1v1h-1zm14 0h1v1h-1zm17 0h1v1h-1zm22 0h1v1h-1zm4 0h1v1h-1zm7 0h1v1h-1zm10 0h1v1h-1zm32 0h1v1h-1zm9 0h1v1h-1zm5 0h1v1h-1zm2 0h1v1h-1zm1 0h1v1h-1zm13 0h1v1h-1zm27 0h1v1h-1zm6 0h1v1h-1zm-236 1h1v1h-1zm3 0h1v1h-1zm1 0h1v1h-1zm5 0h1v1h-1zm3 0h1v1h-1zm5 0h1v1h-1zm6 0h1v1h-1zm1 0h1v1h-1zm8 0h1v1h-1zm10 0h1v1h-1zm2 0h1v1h-1zm7 0h1v1h-1zm13 0h1v1h-1zm4 0h1v1h-1zm3 0h1v1h-1zm3 0h1v1h-1zm3 0h1v1h-1zm2 0h1v1h-1zm17 0h1v1h-1zm5 0h1v1h-1zm5 0h1v1h-1zm16 0h1v1h-1zm13 0h1v1h-1zm7 0h1v1h-1zm10 0h1v1h-1zm6 0h1v1h-1zm6 0h1v1h-1zm12 0h1v1h-1zm1 0h1v1h-1zm9 0h1v1h-1zm10 0h1v1h-1zm26 0h1v1h-1zm2 0h1v1h-1zm4 0h1v1h-1zm8 0h1v1h-1zm-239 1h1v1h-1zm21 0h1v1h-1zm4 0h1v1h-1zm6 0h1v1h-1zm3 0h1v1h-1zm6 0h1v1h-1zm5 0h1v1h-1zm1 0h1v1h-1zm16 0h1v1h-1zm7 0h1v1h-1zm14 0h1v1h-1zm7 0h1v1h-1zm1 0h1v1h-1zm7 0h1v1h-1zm18 0h1v1h-1zm5 0h1v1h-1zm15 0h1v1h-1zm20 0h1v1h-1zm6 0h1v1h-1zm3 0h1v1h-1zm1 0h1v1h-1zm5 0h1v1h-1zm6 0h1v1h-1zm10 0h1v1h-1zm8 0h1v1h-1zm1 0h1v1h-1zm41 0h1v1h-1zm-247 1h1v1h-1zm21 0h1v1h-1zm9 0h1v1h-1zm1 0h1v1h-1zm6 0h1v1h-1zm8 0h1v1h-1zm28 0h1v1h-1zm26 0h1v1h-1zm9 0h1v1h-1zm4 0h1v1h-1zm7 0h1v1h-1zm7 0h1v1h-1zm11 0h1v1h-1zm7 0h1v1h-1zm6 0h1v1h-1zm9 0h1v1h-1zm11 0h1v1h-1zm5 0h1v1h-1zm5 0h1v1h-1zm1 0h1v1h-1zm7 0h1v1h-1zm5 0h1v1h-1zm1 0h1v1h-1zm29 0h1v1h-1zm-224 1h1v1h-1zm1 0h1v1h-1zm40 0h1v1h-1zm10 0h1v1h-1zm5 0h1v1h-1zm4 0h1v1h-1zm15 0h1v1h-1zm3 0h1v1h-1zm22 0h1v1h-1zm5 0h1v1h-1zm7 0h1v1h-1zm10 0h1v1h-1zm5 0h1v1h-1zm2 0h1v1h-1zm12 0h1v1h-1zm3 0h1v1h-1zm9 0h1v1h-1zm2 0h1v1h-1zm16 0h1v1h-1zm12 0h1v1h-1zm4 0h1v1h-1zm5 0h1v1h-1zm19 0h1v1h-1zm6 0h1v1h-1zm3 0h1v1h-1zm2 0h1v1h-1zm13 0h1v1h-1zm3 0h1v1h-1zm-239 1h1v1h-1zm1 0h1v1h-1zm24 0h1v1h-1zm14 0h1v1h-1zm10 0h1v1h-1zm2 0h1v1h-1zm32 0h1v1h-1zm15 0h1v1h-1zm8 0h1v1h-1zm32 0h1v1h-1zm2 0h1v1h-1zm2 0h1v1h-1zm1 0h1v1h-1zm2 0h1v1h-1zm14 0h1v1h-1zm29 0h1v1h-1zm2 0h1v1h-1zm5 0h1v1h-1zm13 0h1v1h-1zm30 0h1v1h-1zm7 0h1v1h-1zm7 0h1v1h-1zm-253 1h1v1h-1zm6 0h1v1h-1zm2 0h1v1h-1zm23 0h1v1h-1zm7 0h1v1h-1zm16 0h1v1h-1zm8 0h1v1h-1zm9 0h1v1h-1zm37 0h1v1h-1zm7 0h1v1h-1zm32 0h1v1h-1zm1 0h1v1h-1zm4 0h1v1h-1zm4 0h1v1h-1zm16 0h1v1h-1zm8 0h1v1h-1zm20 0h1v1h-1zm12 0h1v1h-1zm15 0h1v1h-1zm3 0h1v1h-1zm10 0h1v1h-1zm-218 1h1v1h-1zm8 0h1v1h-1zm2 0h1v1h-1zm3 0h1v1h-1zm10 0h1v1h-1zm6 0h1v1h-1zm1 0h1v1h-1zm3 0h1v1h-1zm14 0h1v1h-1zm8 0h1v1h-1zm12 0h1v1h-1zm13 0h1v1h-1zm2 0h1v1h-1zm4 0h1v1h-1zm9 0h1v1h-1zm9 0h1v1h-1zm1 0h1v1h-1zm46 0h1v1h-1zm5 0h1v1h-1zm7 0h1v1h-1zm10 0h1v1h-1zm6 0h1v1h-1zm5 0h1v1h-1zm6 0h1v1h-1zm7 0h1v1h-1zm5 0h1v1h-1zm8 0h1v1h-1zm2 0h1v1h-1zm4 0h1v1h-1zm8 0h1v1h-1zm-235 1h1v1h-1zm5 0h1v1h-1zm15 0h1v1h-1zm10 0h1v1h-1zm13 0h1v1h-1zm1 0h1v1h-1zm11 0h1v1h-1zm11 0h1v1h-1zm14 0h1v1h-1zm9 0h1v1h-1zm9 0h1v1h-1zm1 0h1v1h-1zm6 0h1v1h-1zm8 0h1v1h-1zm13 0h1v1h-1zm5 0h1v1h-1zm10 0h1v1h-1zm6 0h1v1h-1zm12 0h1v1h-1zm2 0h1v1h-1zm14 0h1v1h-1zm7 0h1v1h-1zm2 0h1v1h-1zm5 0h1v1h-1zm3 0h1v1h-1zm3 0h1v1h-1zm4 0h1v1h-1zm5 0h1v1h-1zm14 0h1v1h-1zm10 0h1v1h-1zm15 0h1v1h-1zm-246 1h1v1h-1zm7 0h1v1h-1zm1 0h1v1h-1zm14 0h1v1h-1zm7 0h1v1h-1zm6 0h1v1h-1zm7 0h1v1h-1zm4 0h1v1h-1zm18 0h1v1h-1zm13 0h1v1h-1zm7 0h1v1h-1zm2 0h1v1h-1zm1 0h1v1h-1zm5 0h1v1h-1zm7 0h1v1h-1zm2 0h1v1h-1zm5 0h1v1h-1zm15 0h1v1h-1zm1 0h1v1h-1zm1 0h1v1h-1zm5 0h1v1h-1zm9 0h1v1h-1zm3 0h1v1h-1zm23 0h1v1h-1zm14 0h1v1h-1zm9 0h1v1h-1zm3 0h1v1h-1zm1 0h1v1h-1zm3 0h1v1h-1zm9 0h1v1h-1zm5 0h1v1h-1zm6 0h1v1h-1zm29 0h1v1h-1zm-234 1h1v1h-1zm10 0h1v1h-1zm16 0h1v1h-1zm6 0h1v1h-1zm14 0h1v1h-1zm2 0h1v1h-1zm1 0h1v1h-1zm2 0h1v1h-1zm1 0h1v1h-1zm8 0h1v1h-1zm9 0h1v1h-1zm27 0h1v1h-1zm1 0h1v1h-1zm4 0h1v1h-1zm9 0h1v1h-1zm4 0h1v1h-1zm4 0h1v1h-1zm1 0h1v1h-1zm3 0h1v1h-1zm5 0h1v1h-1zm3 0h1v1h-1zm4 0h1v1h-1zm4 0h1v1h-1zm23 0h1v1h-1zm2 0h1v1h-1zm22 0h1v1h-1zm36 0h1v1h-1zm11 0h1v1h-1zm-243 1h1v1h-1zm14 0h1v1h-1zm22 0h1v1h-1zm17 0h1v1h-1zm11 0h1v1h-1zm6 0h1v1h-1zm18 0h1v1h-1zm2 0h1v1h-1zm5 0h1v1h-1zm8 0h1v1h-1zm1 0h1v1h-1zm5 0h1v1h-1zm16 0h1v1h-1zm5 0h1v1h-1zm4 0h1v1h-1zm4 0h1v1h-1zm7 0h1v1h-1zm7 0h1v1h-1zm8 0h1v1h-1zm8 0h1v1h-1zm6 0h1v1h-1zm18 0h1v1h-1zm7 0h1v1h-1zm6 0h1v1h-1zm3 0h1v1h-1zm12 0h1v1h-1zm1 0h1v1h-1zm1 0h1v1h-1zm3 0h1v1h-1zm14 0h1v1h-1zm2 0h1v1h-1zm-231 1h1v1h-1zm5 0h1v1h-1zm7 0h1v1h-1zm11 0h1v1h-1zm12 0h1v1h-1zm3 0h1v1h-1zm5 0h1v1h-1zm4 0h1v1h-1zm5 0h1v1h-1zm6 0h1v1h-1zm2 0h1v1h-1zm22 0h1v1h-1zm2 0h1v1h-1zm7 0h1v1h-1zm9 0h1v1h-1zm14 0h1v1h-1zm7 0h1v1h-1zm21 0h1v1h-1zm2 0h1v1h-1zm10 0h1v1h-1zm1 0h1v1h-1zm23 0h1v1h-1zm2 0h1v1h-1zm2 0h1v1h-1zm13 0h1v1h-1zm2 0h1v1h-1zm11 0h1v1h-1zm2 0h1v1h-1zm1 0h1v1h-1zm13 0h1v1h-1zm3 0h1v1h-1zm1 0h1v1h-1zm9 0h1v1h-1zm-246 1h1v1h-1zm26 0h1v1h-1zm3 0h1v1h-1zm1 0h1v1h-1zm4 0h1v1h-1zm2 0h1v1h-1zm10 0h1v1h-1zm13 0h1v1h-1zm1 0h1v1h-1zm8 0h1v1h-1zm12 0h1v1h-1zm7 0h1v1h-1zm8 0h1v1h-1zm7 0h1v1h-1zm5 0h1v1h-1zm5 0h1v1h-1zm9 0h1v1h-1zm39 0h1v1h-1zm16 0h1v1h-1zm14 0h1v1h-1zm8 0h1v1h-1zm35 0h1v1h-1zm1 0h1v1h-1zm13 0h1v1h-1zm-254 1h1v1h-1zm1 0h1v1h-1zm20 0h1v1h-1zm10 0h1v1h-1zm5 0h1v1h-1zm7 0h1v1h-1zm7 0h1v1h-1zm7 0h1v1h-1zm14 0h1v1h-1zm1 0h1v1h-1zm1 0h1v1h-1zm1 0h1v1h-1zm2 0h1v1h-1zm15 0h1v1h-1zm9 0h1v1h-1zm1 0h1v1h-1zm13 0h1v1h-1zm21 0h1v1h-1zm3 0h1v1h-1zm14 0h1v1h-1zm12 0h1v1h-1zm10 0h1v1h-1zm12 0h1v1h-1zm4 0h1v1h-1zm1 0h1v1h-1zm6 0h1v1h-1zm15 0h1v1h-1zm5 0h1v1h-1zm10 0h1v1h-1zm5 0h1v1h-1zm23 0h1v1h-1zm-253 1h1v1h-1zm7 0h1v1h-1zm14 0h1v1h-1zm19 0h1v1h-1zm4 0h1v1h-1zm2 0h1v1h-1zm6 0h1v1h-1zm2 0h1v1h-1zm4 0h1v1h-1zm7 0h1v1h-1zm15 0h1v1h-1zm8 0h1v1h-1zm4 0h1v1h-1zm1 0h1v1h-1zm2 0h1v1h-1zm1 0h1v1h-1zm6 0h1v1h-1zm5 0h1v1h-1zm4 0h1v1h-1zm19 0h1v1h-1zm12 0h1v1h-1zm8 0h1v1h-1zm4 0h1v1h-1zm4 0h1v1h-1zm3 0h1v1h-1zm8 0h1v1h-1zm11 0h1v1h-1zm3 0h1v1h-1zm1 0h1v1h-1zm1 0h1v1h-1zm4 0h1v1h-1zm3 0h1v1h-1zm6 0h1v1h-1zm6 0h1v1h-1zm17 0h1v1h-1zm4 0h1v1h-1zm5 0h1v1h-1zm3 0h1v1h-1zm-232 1h1v1h-1zm6 0h1v1h-1zm12 0h1v1h-1zm6 0h1v1h-1zm6 0h1v1h-1zm7 0h1v1h-1zm7 0h1v1h-1zm27 0h1v1h-1zm6 0h1v1h-1zm6 0h1v1h-1zm1 0h1v1h-1zm1 0h1v1h-1zm6 0h1v1h-1zm2 0h1v1h-1zm6 0h1v1h-1zm4 0h1v1h-1zm2 0h1v1h-1zm30 0h1v1h-1zm1 0h1v1h-1zm1 0h1v1h-1zm7 0h1v1h-1zm8 0h1v1h-1zm23 0h1v1h-1zm26 0h1v1h-1zm5 0h1v1h-1zm3 0h1v1h-1zm15 0h1v1h-1zm3 0h1v1h-1zm-230 1h1v1h-1zm36 0h1v1h-1zm2 0h1v1h-1zm1 0h1v1h-1zm1 0h1v1h-1zm7 0h1v1h-1zm3 0h1v1h-1zm3 0h1v1h-1zm4 0h1v1h-1zm19 0h1v1h-1zm36 0h1v1h-1zm2 0h1v1h-1zm8 0h1v1h-1zm19 0h1v1h-1zm17 0h1v1h-1zm6 0h1v1h-1zm27 0h1v1h-1zm12 0h1v1h-1zm10 0h1v1h-1zm12 0h1v1h-1zm12 0h1v1h-1zm11 0h1v1h-1zm5 0h1v1h-1zm-250 1h1v1h-1zm11 0h1v1h-1zm39 0h1v1h-1zm4 0h1v1h-1zm5 0h1v1h-1zm15 0h1v1h-1zm5 0h1v1h-1zm7 0h1v1h-1zm42 0h1v1h-1zm17 0h1v1h-1zm38 0h1v1h-1zm7 0h1v1h-1zm6 0h1v1h-1zm1 0h1v1h-1zm19 0h1v1h-1zm9 0h1v1h-1zm9 0h1v1h-1zm6 0h1v1h-1zm10 0h1v1h-1zm-247 1h1v1h-1zm8 0h1v1h-1zm33 0h1v1h-1zm1 0h1v1h-1zm8 0h1v1h-1zm4 0h1v1h-1zm8 0h1v1h-1zm3 0h1v1h-1zm6 0h1v1h-1zm16 0h1v1h-1zm1 0h1v1h-1zm1 0h1v1h-1zm3 0h1v1h-1zm6 0h1v1h-1zm1 0h1v1h-1zm8 0h1v1h-1zm3 0h1v1h-1zm9 0h1v1h-1zm6 0h1v1h-1zm1 0h1v1h-1zm18 0h1v1h-1zm3 0h1v1h-1zm5 0h1v1h-1zm8 0h1v1h-1zm19 0h1v1h-1zm28 0h1v1h-1zm6 0h1v1h-1zm5 0h1v1h-1zm9 0h1v1h-1zm11 0h1v1h-1zm1 0h1v1h-1zm2 0h1v1h-1zm2 0h1v1h-1zm-247 1h1v1h-1zm5 0h1v1h-1zm6 0h1v1h-1zm12 0h1v1h-1zm9 0h1v1h-1zm26 0h1v1h-1zm14 0h1v1h-1zm5 0h1v1h-1zm22 0h1v1h-1zm3 0h1v1h-1zm9 0h1v1h-1zm1 0h1v1h-1zm6 0h1v1h-1zm55 0h1v1h-1zm1 0h1v1h-1zm28 0h1v1h-1zm4 0h1v1h-1zm17 0h1v1h-1zm4 0h1v1h-1zm10 0h1v1h-1zm2 0h1v1h-1zm9 0h1v1h-1zm4 0h1v1h-1zm-239 1h1v1h-1zm12 0h1v1h-1zm11 0h1v1h-1zm21 0h1v1h-1zm1 0h1v1h-1zm9 0h1v1h-1zm25 0h1v1h-1zm1 0h1v1h-1zm16 0h1v1h-1zm2 0h1v1h-1zm3 0h1v1h-1zm14 0h1v1h-1zm2 0h1v1h-1zm22 0h1v1h-1zm1 0h1v1h-1zm18 0h1v1h-1zm11 0h1v1h-1zm18 0h1v1h-1zm1 0h1v1h-1zm7 0h1v1h-1zm18 0h1v1h-1zm4 0h1v1h-1zm2 0h1v1h-1zm6 0h1v1h-1zm4 0h1v1h-1zm8 0h1v1h-1zm-251 1h1v1h-1zm13 0h1v1h-1zm2 0h1v1h-1zm20 0h1v1h-1zm17 0h1v1h-1zm13 0h1v1h-1zm1 0h1v1h-1zm7 0h1v1h-1zm3 0h1v1h-1zm4 0h1v1h-1zm7 0h1v1h-1zm18 0h1v1h-1zm3 0h1v1h-1zm14 0h1v1h-1zm2 0h1v1h-1zm3 0h1v1h-1zm3 0h1v1h-1zm19 0h1v1h-1zm4 0h1v1h-1zm21 0h1v1h-1zm7 0h1v1h-1zm4 0h1v1h-1zm1 0h1v1h-1zm26 0h1v1h-1zm3 0h1v1h-1zm7 0h1v1h-1zm14 0h1v1h-1zm-227 1h1v1h-1zm38 0h1v1h-1zm5 0h1v1h-1zm14 0h1v1h-1zm2 0h1v1h-1zm4 0h1v1h-1zm14 0h1v1h-1zm8 0h1v1h-1zm15 0h1v1h-1zm7 0h1v1h-1zm16 0h1v1h-1zm10 0h1v1h-1zm2 0h1v1h-1zm11 0h1v1h-1zm8 0h1v1h-1zm10 0h1v1h-1zm4 0h1v1h-1zm13 0h1v1h-1zm5 0h1v1h-1zm35 0h1v1h-1zm21 0h1v1h-1zm-234 1h1v1h-1zm3 0h1v1h-1zm17 0h1v1h-1zm8 0h1v1h-1zm5 0h1v1h-1zm22 0h1v1h-1zm2 0h1v1h-1zm8 0h1v1h-1zm12 0h1v1h-1zm3 0h1v1h-1zm4 0h1v1h-1zm2 0h1v1h-1zm2 0h1v1h-1zm10 0h1v1h-1zm17 0h1v1h-1zm11 0h1v1h-1zm8 0h1v1h-1zm9 0h1v1h-1zm20 0h1v1h-1zm1 0h1v1h-1zm4 0h1v1h-1zm5 0h1v1h-1zm5 0h1v1h-1zm33 0h1v1h-1zm2 0h1v1h-1zm7 0h1v1h-1zm7 0h1v1h-1zm10 0h1v1h-1zm-253 1h1v1h-1zm1 0h1v1h-1zm13 0h1v1h-1zm11 0h1v1h-1zm49 0h1v1h-1zm6 0h1v1h-1zm5 0h1v1h-1zm1 0h1v1h-1zm6 0h1v1h-1zm7 0h1v1h-1zm5 0h1v1h-1zm23 0h1v1h-1zm5 0h1v1h-1zm13 0h1v1h-1zm6 0h1v1h-1zm13 0h1v1h-1zm1 0h1v1h-1zm27 0h1v1h-1zm8 0h1v1h-1zm15 0h1v1h-1zm4 0h1v1h-1zm4 0h1v1h-1zm-222 1h1v1h-1zm6 0h1v1h-1zm11 0h1v1h-1zm3 0h1v1h-1zm8 0h1v1h-1zm10 0h1v1h-1zm8 0h1v1h-1zm3 0h1v1h-1zm8 0h1v1h-1zm5 0h1v1h-1zm4 0h1v1h-1zm8 0h1v1h-1zm1 0h1v1h-1zm7 0h1v1h-1zm11 0h1v1h-1zm9 0h1v1h-1zm1 0h1v1h-1zm25 0h1v1h-1zm2 0h1v1h-1zm7 0h1v1h-1zm37 0h1v1h-1zm4 0h1v1h-1zm4 0h1v1h-1zm4 0h1v1h-1zm9 0h1v1h-1zm18 0h1v1h-1zm12 0h1v1h-1zm4 0h1v1h-1zm5 0h1v1h-1zm2 0h1v1h-1zm3 0h1v1h-1zm4 0h1v1h-1zm-240 1h1v1h-1zm6 0h1v1h-1zm28 0h1v1h-1zm5 0h1v1h-1zm18 0h1v1h-1zm6 0h1v1h-1zm2 0h1v1h-1zm28 0h1v1h-1zm15 0h1v1h-1zm5 0h1v1h-1zm5 0h1v1h-1zm2 0h1v1h-1zm13 0h1v1h-1zm1 0h1v1h-1zm10 0h1v1h-1zm1 0h1v1h-1zm6 0h1v1h-1zm3 0h1v1h-1zm25 0h1v1h-1zm10 0h1v1h-1zm2 0h1v1h-1zm3 0h1v1h-1zm2 0h1v1h-1zm1 0h1v1h-1zm1 0h1v1h-1zm2 0h1v1h-1zm6 0h1v1h-1zm1 0h1v1h-1zm2 0h1v1h-1zm2 0h1v1h-1zm16 0h1v1h-1zm10 0h1v1h-1zm12 0h1v1h-1z" fill="#0000A8" shape-rendering="crispEdges"/></svg></div>


<div class="sunken" style="left:74px;top:372px;width:46px;height:21px"></div>
<div class="raised" style="left:134px;top:372px;width:191px;height:21px"></div>

<!-- progress -->
<div class="a" style="left:34px;top:407px;width:326px;height:13px;border:1px solid;border-color:#928E55 #E8E5CE #E8E5CE #928E55"></div>
<div id="prog"><div class="a" style="left:35px;top:408px;width:324px;height:11px;background:#D4D5B9"></div><div class="a" style="left:36px;top:409px;width:6px;height:9px;background:#804040"></div><div class="a" style="left:44px;top:409px;width:6px;height:9px;background:#804040"></div><div class="a" style="left:52px;top:409px;width:6px;height:9px;background:#804040"></div><div class="a" style="left:60px;top:409px;width:6px;height:9px;background:#804040"></div><div class="a" style="left:68px;top:409px;width:6px;height:9px;background:#804040"></div><div class="a" style="left:76px;top:409px;width:6px;height:9px;background:#804040"></div><div class="a" style="left:84px;top:409px;width:6px;height:9px;background:#804040"></div><div class="a" style="left:92px;top:409px;width:6px;height:9px;background:#804040"></div><div class="a" style="left:100px;top:409px;width:6px;height:9px;background:#804040"></div><div class="a" style="left:108px;top:409px;width:6px;height:9px;background:#804040"></div><div class="a" style="left:116px;top:409px;width:6px;height:9px;background:#804040"></div><div class="a" style="left:124px;top:409px;width:6px;height:9px;background:#804040"></div><div class="a" style="left:132px;top:409px;width:6px;height:9px;background:#804040"></div><div class="a" style="left:140px;top:409px;width:6px;height:9px;background:#804040"></div><div class="a" style="left:148px;top:409px;width:6px;height:9px;background:#804040"></div><div class="a" style="left:156px;top:409px;width:6px;height:9px;background:#804040"></div><div class="a" style="left:164px;top:409px;width:6px;height:9px;background:#804040"></div><div class="a" style="left:172px;top:409px;width:6px;height:9px;background:#804040"></div><div class="a" style="left:180px;top:409px;width:6px;height:9px;background:#804040"></div><div class="a" style="left:188px;top:409px;width:6px;height:9px;background:#804040"></div><div class="a" style="left:196px;top:409px;width:6px;height:9px;background:#804040"></div><div class="a" style="left:204px;top:409px;width:6px;height:9px;background:#804040"></div><div class="a" style="left:212px;top:409px;width:6px;height:9px;background:#804040"></div><div class="a" style="left:220px;top:409px;width:6px;height:9px;background:#804040"></div><div class="a" style="left:228px;top:409px;width:6px;height:9px;background:#804040"></div><div class="a" style="left:236px;top:409px;width:6px;height:9px;background:#804040"></div><div class="a" style="left:244px;top:409px;width:6px;height:9px;background:#804040"></div><div class="a" style="left:252px;top:409px;width:6px;height:9px;background:#804040"></div><div class="a" style="left:260px;top:409px;width:6px;height:9px;background:#804040"></div><div class="a" style="left:268px;top:409px;width:6px;height:9px;background:#804040"></div><div class="a" style="left:276px;top:409px;width:6px;height:9px;background:#804040"></div><div class="a" style="left:284px;top:409px;width:6px;height:9px;background:#804040"></div><div class="a" style="left:292px;top:409px;width:6px;height:9px;background:#804040"></div><div class="a" style="left:300px;top:409px;width:6px;height:9px;background:#804040"></div><div class="a" style="left:308px;top:409px;width:6px;height:9px;background:#804040"></div><div class="a" style="left:316px;top:409px;width:6px;height:9px;background:#804040"></div><div class="a" style="left:324px;top:409px;width:6px;height:9px;background:#804040"></div><div class="a" style="left:332px;top:409px;width:6px;height:9px;background:#804040"></div><div class="a" style="left:340px;top:409px;width:6px;height:9px;background:#804040"></div><div class="a" style="left:348px;top:409px;width:6px;height:9px;background:#804040"></div><div class="a" style="left:356px;top:409px;width:1px;height:9px;background:#804040"></div></div>


<!-- group boxes -->
<div class="lt" style="left:380px;top:389px;width:155px;height:64px"></div>
<div class="dk" style="left:379px;top:388px;width:155px;height:64px"></div>
<svg class="a" style="left:385px;top:394px" width="12" height="12" shape-rendering="crispEdges"><path d="M4 0h4v1h-4zM2 1h2v1h-2zM8 1h2v1h-2zM1 2h1v1h-1zM1 3h1v1h-1zM0 4h1v1h-1zM0 5h1v1h-1zM0 6h1v1h-1zM0 7h1v1h-1zM1 8h1v1h-1zM1 9h1v1h-1z" fill="#928E55"/><path d="M4 1h4v1h-4zM2 2h2v1h-2zM8 2h2v1h-2zM2 3h1v1h-1zM1 4h1v1h-1zM1 5h1v1h-1zM1 6h1v1h-1zM1 7h1v1h-1zM2 8h1v1h-1z" fill="#000"/><path d="M4 2h4v1h-4zM3 3h6v1h-6zM2 4h8v1h-8zM2 5h8v1h-8zM2 6h8v1h-8zM2 7h8v1h-8zM3 8h6v1h-6zM4 9h4v1h-4z" fill="#D9D8C2"/><path d="M9 3h1v1h-1zM10 4h1v1h-1zM10 5h1v1h-1zM10 6h1v1h-1zM10 7h1v1h-1zM9 8h1v1h-1zM2 9h2v1h-2zM8 9h2v1h-2zM4 10h4v1h-4z" fill="#C8C6A8"/><path d="M10 2h1v1h-1zM10 3h1v1h-1zM11 4h1v1h-1zM11 5h1v1h-1zM11 6h1v1h-1zM11 7h1v1h-1zM10 8h1v1h-1zM10 9h1v1h-1zM2 10h2v1h-2zM8 10h2v1h-2zM4 11h4v1h-4z" fill="#E8E5CE"/></svg>
<svg class="a" style="left:385px;top:414px" width="12" height="12" shape-rendering="crispEdges"><path d="M4 0h4v1h-4zM2 1h2v1h-2zM8 1h2v1h-2zM1 2h1v1h-1zM1 3h1v1h-1zM0 4h1v1h-1zM0 5h1v1h-1zM0 6h1v1h-1zM0 7h1v1h-1zM1 8h1v1h-1zM1 9h1v1h-1z" fill="#928E55"/><path d="M4 1h4v1h-4zM2 2h2v1h-2zM8 2h2v1h-2zM2 3h1v1h-1zM1 4h1v1h-1zM1 5h1v1h-1zM1 6h1v1h-1zM1 7h1v1h-1zM2 8h1v1h-1z" fill="#000"/><path d="M4 2h4v1h-4zM3 3h6v1h-6zM2 4h8v1h-8zM2 5h8v1h-8zM2 6h8v1h-8zM2 7h8v1h-8zM3 8h6v1h-6zM4 9h4v1h-4z" fill="#D9D8C2"/><path d="M9 3h1v1h-1zM10 4h1v1h-1zM10 5h1v1h-1zM10 6h1v1h-1zM10 7h1v1h-1zM9 8h1v1h-1zM2 9h2v1h-2zM8 9h2v1h-2zM4 10h4v1h-4z" fill="#C8C6A8"/><path d="M10 2h1v1h-1zM10 3h1v1h-1zM11 4h1v1h-1zM11 5h1v1h-1zM11 6h1v1h-1zM11 7h1v1h-1zM10 8h1v1h-1zM10 9h1v1h-1zM2 10h2v1h-2zM8 10h2v1h-2zM4 11h4v1h-4z" fill="#E8E5CE"/></svg>
<svg class="a" style="left:385px;top:434px" width="12" height="12" shape-rendering="crispEdges"><path d="M4 0h4v1h-4zM2 1h2v1h-2zM8 1h2v1h-2zM1 2h1v1h-1zM1 3h1v1h-1zM0 4h1v1h-1zM0 5h1v1h-1zM0 6h1v1h-1zM0 7h1v1h-1zM1 8h1v1h-1zM1 9h1v1h-1z" fill="#928E55"/><path d="M4 1h4v1h-4zM2 2h2v1h-2zM8 2h2v1h-2zM2 3h1v1h-1zM1 4h1v1h-1zM1 5h1v1h-1zM1 6h1v1h-1zM1 7h1v1h-1zM2 8h1v1h-1z" fill="#000"/><path d="M4 2h4v1h-4zM3 3h6v1h-6zM2 4h8v1h-8zM2 5h8v1h-8zM2 6h8v1h-8zM2 7h8v1h-8zM3 8h6v1h-6zM4 9h4v1h-4z" fill="#D9D8C2"/><path d="M9 3h1v1h-1zM10 4h1v1h-1zM10 5h1v1h-1zM10 6h1v1h-1zM10 7h1v1h-1zM9 8h1v1h-1zM2 9h2v1h-2zM8 9h2v1h-2zM4 10h4v1h-4z" fill="#C8C6A8"/><path d="M10 2h1v1h-1zM10 3h1v1h-1zM11 4h1v1h-1zM11 5h1v1h-1zM11 6h1v1h-1zM11 7h1v1h-1zM10 8h1v1h-1zM10 9h1v1h-1zM2 10h2v1h-2zM8 10h2v1h-2zM4 11h4v1h-4z" fill="#E8E5CE"/><path d="M5 4h2v1h-2zM4 5h4v1h-4zM4 6h4v1h-4zM5 7h2v1h-2z" fill="#000"/></svg>

<div class="lt" style="left:670px;top:389px;width:240px;height:64px"></div>
<div class="dk" style="left:669px;top:388px;width:240px;height:64px"></div>
<svg class="a" style="left:675px;top:394px" width="12" height="12" shape-rendering="crispEdges"><path d="M4 0h4v1h-4zM2 1h2v1h-2zM8 1h2v1h-2zM1 2h1v1h-1zM1 3h1v1h-1zM0 4h1v1h-1zM0 5h1v1h-1zM0 6h1v1h-1zM0 7h1v1h-1zM1 8h1v1h-1zM1 9h1v1h-1z" fill="#928E55"/><path d="M4 1h4v1h-4zM2 2h2v1h-2zM8 2h2v1h-2zM2 3h1v1h-1zM1 4h1v1h-1zM1 5h1v1h-1zM1 6h1v1h-1zM1 7h1v1h-1zM2 8h1v1h-1z" fill="#000"/><path d="M4 2h4v1h-4zM3 3h6v1h-6zM2 4h8v1h-8zM2 5h8v1h-8zM2 6h8v1h-8zM2 7h8v1h-8zM3 8h6v1h-6zM4 9h4v1h-4z" fill="#D9D8C2"/><path d="M9 3h1v1h-1zM10 4h1v1h-1zM10 5h1v1h-1zM10 6h1v1h-1zM10 7h1v1h-1zM9 8h1v1h-1zM2 9h2v1h-2zM8 9h2v1h-2zM4 10h4v1h-4z" fill="#C8C6A8"/><path d="M10 2h1v1h-1zM10 3h1v1h-1zM11 4h1v1h-1zM11 5h1v1h-1zM11 6h1v1h-1zM11 7h1v1h-1zM10 8h1v1h-1zM10 9h1v1h-1zM2 10h2v1h-2zM8 10h2v1h-2zM4 11h4v1h-4z" fill="#E8E5CE"/></svg>
<svg class="a" style="left:675px;top:414px" width="12" height="12" shape-rendering="crispEdges"><path d="M4 0h4v1h-4zM2 1h2v1h-2zM8 1h2v1h-2zM1 2h1v1h-1zM1 3h1v1h-1zM0 4h1v1h-1zM0 5h1v1h-1zM0 6h1v1h-1zM0 7h1v1h-1zM1 8h1v1h-1zM1 9h1v1h-1z" fill="#928E55"/><path d="M4 1h4v1h-4zM2 2h2v1h-2zM8 2h2v1h-2zM2 3h1v1h-1zM1 4h1v1h-1zM1 5h1v1h-1zM1 6h1v1h-1zM1 7h1v1h-1zM2 8h1v1h-1z" fill="#000"/><path d="M4 2h4v1h-4zM3 3h6v1h-6zM2 4h8v1h-8zM2 5h8v1h-8zM2 6h8v1h-8zM2 7h8v1h-8zM3 8h6v1h-6zM4 9h4v1h-4z" fill="#D9D8C2"/><path d="M9 3h1v1h-1zM10 4h1v1h-1zM10 5h1v1h-1zM10 6h1v1h-1zM10 7h1v1h-1zM9 8h1v1h-1zM2 9h2v1h-2zM8 9h2v1h-2zM4 10h4v1h-4z" fill="#C8C6A8"/><path d="M10 2h1v1h-1zM10 3h1v1h-1zM11 4h1v1h-1zM11 5h1v1h-1zM11 6h1v1h-1zM11 7h1v1h-1zM10 8h1v1h-1zM10 9h1v1h-1zM2 10h2v1h-2zM8 10h2v1h-2zM4 11h4v1h-4z" fill="#E8E5CE"/></svg>
<svg class="a" style="left:675px;top:434px" width="12" height="12" shape-rendering="crispEdges"><path d="M4 0h4v1h-4zM2 1h2v1h-2zM8 1h2v1h-2zM1 2h1v1h-1zM1 3h1v1h-1zM0 4h1v1h-1zM0 5h1v1h-1zM0 6h1v1h-1zM0 7h1v1h-1zM1 8h1v1h-1zM1 9h1v1h-1z" fill="#928E55"/><path d="M4 1h4v1h-4zM2 2h2v1h-2zM8 2h2v1h-2zM2 3h1v1h-1zM1 4h1v1h-1zM1 5h1v1h-1zM1 6h1v1h-1zM1 7h1v1h-1zM2 8h1v1h-1z" fill="#000"/><path d="M4 2h4v1h-4zM3 3h6v1h-6zM2 4h8v1h-8zM2 5h8v1h-8zM2 6h8v1h-8zM2 7h8v1h-8zM3 8h6v1h-6zM4 9h4v1h-4z" fill="#D9D8C2"/><path d="M9 3h1v1h-1zM10 4h1v1h-1zM10 5h1v1h-1zM10 6h1v1h-1zM10 7h1v1h-1zM9 8h1v1h-1zM2 9h2v1h-2zM8 9h2v1h-2zM4 10h4v1h-4z" fill="#C8C6A8"/><path d="M10 2h1v1h-1zM10 3h1v1h-1zM11 4h1v1h-1zM11 5h1v1h-1zM11 6h1v1h-1zM11 7h1v1h-1zM10 8h1v1h-1zM10 9h1v1h-1zM2 10h2v1h-2zM8 10h2v1h-2zM4 11h4v1h-4z" fill="#E8E5CE"/><path d="M5 4h2v1h-2zM4 5h4v1h-4zM4 6h4v1h-4zM5 7h2v1h-2z" fill="#000"/></svg>

<div class="lt" style="left:670px;top:458px;width:240px;height:55px"></div>
<div class="dk" style="left:669px;top:457px;width:240px;height:55px"></div>
<svg class="a" style="left:680px;top:468px" width="12" height="12" shape-rendering="crispEdges"><path d="M4 0h4v1h-4zM2 1h2v1h-2zM8 1h2v1h-2zM1 2h1v1h-1zM1 3h1v1h-1zM0 4h1v1h-1zM0 5h1v1h-1zM0 6h1v1h-1zM0 7h1v1h-1zM1 8h1v1h-1zM1 9h1v1h-1z" fill="#928E55"/><path d="M4 1h4v1h-4zM2 2h2v1h-2zM8 2h2v1h-2zM2 3h1v1h-1zM1 4h1v1h-1zM1 5h1v1h-1zM1 6h1v1h-1zM1 7h1v1h-1zM2 8h1v1h-1z" fill="#000"/><path d="M4 2h4v1h-4zM3 3h6v1h-6zM2 4h8v1h-8zM2 5h8v1h-8zM2 6h8v1h-8zM2 7h8v1h-8zM3 8h6v1h-6zM4 9h4v1h-4z" fill="#D9D8C2"/><path d="M9 3h1v1h-1zM10 4h1v1h-1zM10 5h1v1h-1zM10 6h1v1h-1zM10 7h1v1h-1zM9 8h1v1h-1zM2 9h2v1h-2zM8 9h2v1h-2zM4 10h4v1h-4z" fill="#C8C6A8"/><path d="M10 2h1v1h-1zM10 3h1v1h-1zM11 4h1v1h-1zM11 5h1v1h-1zM11 6h1v1h-1zM11 7h1v1h-1zM10 8h1v1h-1zM10 9h1v1h-1zM2 10h2v1h-2zM8 10h2v1h-2zM4 11h4v1h-4z" fill="#E8E5CE"/><path d="M5 4h2v1h-2zM4 5h4v1h-4zM4 6h4v1h-4zM5 7h2v1h-2z" fill="#000"/></svg>
<svg class="a" style="left:680px;top:488px" width="12" height="12" shape-rendering="crispEdges"><path d="M4 0h4v1h-4zM2 1h2v1h-2zM8 1h2v1h-2zM1 2h1v1h-1zM1 3h1v1h-1zM0 4h1v1h-1zM0 5h1v1h-1zM0 6h1v1h-1zM0 7h1v1h-1zM1 8h1v1h-1zM1 9h1v1h-1z" fill="#928E55"/><path d="M4 1h4v1h-4zM2 2h2v1h-2zM8 2h2v1h-2zM2 3h1v1h-1zM1 4h1v1h-1zM1 5h1v1h-1zM1 6h1v1h-1zM1 7h1v1h-1zM2 8h1v1h-1z" fill="#000"/><path d="M4 2h4v1h-4zM3 3h6v1h-6zM2 4h8v1h-8zM2 5h8v1h-8zM2 6h8v1h-8zM2 7h8v1h-8zM3 8h6v1h-6zM4 9h4v1h-4z" fill="#D9D8C2"/><path d="M9 3h1v1h-1zM10 4h1v1h-1zM10 5h1v1h-1zM10 6h1v1h-1zM10 7h1v1h-1zM9 8h1v1h-1zM2 9h2v1h-2zM8 9h2v1h-2zM4 10h4v1h-4z" fill="#C8C6A8"/><path d="M10 2h1v1h-1zM10 3h1v1h-1zM11 4h1v1h-1zM11 5h1v1h-1zM11 6h1v1h-1zM11 7h1v1h-1zM10 8h1v1h-1zM10 9h1v1h-1zM2 10h2v1h-2zM8 10h2v1h-2zM4 11h4v1h-4z" fill="#E8E5CE"/></svg>

<!-- seed edit -->
<div class="sunken" style="left:309px;top:467px;width:316px;height:21px"></div>

<div class="a" style="left:595px;top:470px;width:1px;height:13px;background:#101030"></div>
<!-- textarea -->
<div class="sunken" style="left:34px;top:497px;width:596px;height:51px"></div>
<div class="a" style="left:36px;top:503.5px;font-family:'Liberation Mono',monospace;font-size:12px;line-height:15px;white-space:pre;transform:scaleX(0.97222);transform-origin:0 0">Black RNG Algorithm, see  -   www.RomanBlack.com/Black_RNG.htm
Cache = 1000000 bytes,  Cylinders = 17 + 1
Cylinder starting values = 1,2,3,1,2,3,4,5,7,1,2,3,6,4,1,3,11 + 9</div>

<div class="a" style="left:615px;top:499px;width:13px;height:47px;background:#E8E6D8"></div>
<div class="raised" style="left:615px;top:499px;width:13px;height:13px"></div>
<svg class="a" style="left:619px;top:504px" width="5" height="3"><path d="M2 0h1v1h1v1h1v1h-5v-1h1v-1h1z" fill="#000" shape-rendering="crispEdges"/></svg>
<div class="raised" style="left:615px;top:512px;width:13px;height:15px"></div>
<div class="raised" style="left:615px;top:533px;width:13px;height:13px"></div>
<svg class="a" style="left:619px;top:538px" width="5" height="3"><path d="M0 0h5v1h-1v1h-1v1h-1v-1h-1v-1h-1z" fill="#000" shape-rendering="crispEdges"/></svg>
<!-- Ent button -->
<div class="raised" style="left:649px;top:522px;width:226px;height:25px"></div>
<!--TEXT-->
<div class="t" style="left:29.03px;top:6px;transform:scaleX(0.9667);color:#fff;font-weight:bold">Black RNG</div>
<div class="t" style="left:94.00px;top:6px;transform:scaleX(1.0000);color:#fff;font-weight:bold">v1.0</div>
<div class="t" style="left:124.00px;top:6px;transform:scaleX(1.0000);color:#fff;font-weight:bold">-</div>
<div class="t" style="left:134.00px;top:6px;transform:scaleX(1.0076);color:#fff;font-weight:bold">www.RomanBlack.com</div>
<div class="t" style="left:10.17px;top:25px;transform:scaleX(0.8333);color:#000"><u>F</u>ile</div>
<div class="t" style="left:38.09px;top:25px;transform:scaleX(0.9130);color:#000"><u>H</u>elp</div>
<div class="t" style="left:74.12px;top:347px;transform:scaleX(0.8757);color:#000">Spectral Distribution 8 bit (seed)</div>
<div class="t" style="left:379.11px;top:347px;transform:scaleX(0.8851);color:#000">Spectral Distribution (final cache)</div>
<div class="t" style="left:673.10px;top:347px;transform:scaleX(0.9032);color:#000">XY Scattergraph (final cache)</div>
<div class="t" style="left:379.12px;top:367px;transform:scaleX(0.8750);color:#000">Samples;</div>
<div class="t" style="left:434.09px;top:367px;transform:scaleX(0.9062);color:#000">20000</div>
<div class="t" style="left:674.12px;top:367px;transform:scaleX(0.8750);color:#000">Samples;</div>
<div class="t" style="left:729.08px;top:367px;transform:scaleX(0.9200);color:#000">7500</div>
<div class="t" style="left:34.12px;top:377px;transform:scaleX(0.8824);color:#000">Loops:</div>
<div class="t" style="left:77.5px;top:375px;transform:scaleX(0.75);color:#000">1</div>
<div class="t" style="left:175.11px;top:375px;transform:scaleX(0.8852);color:#000">Generate Entropy Data</div>
<div class="t" style="left:34.12px;top:432px;transform:scaleX(0.8846);color:#000">Scramble complete!</div>
<div class="t" style="left:34.10px;top:452px;transform:scaleX(0.9011);color:#000">Loops: 10000000</div>
<div class="t" style="left:123.11px;top:452px;transform:scaleX(0.8912);color:#000">Engine shuffles: 529544212</div>
<div class="t" style="left:34.12px;top:472px;transform:scaleX(0.8794);color:#000">Spectral Biggest = 102, Smallest = 57</div>
<div class="t" style="left:402.14px;top:393px;transform:scaleX(0.8636);color:#000">8 bit</div>
<div class="t" style="left:402.11px;top:413px;transform:scaleX(0.8929);color:#000">16 bit</div>
<div class="t" style="left:402.11px;top:433px;transform:scaleX(0.8929);color:#000">32 bit</div>
<div class="t" style="left:692.14px;top:393px;transform:scaleX(0.8636);color:#000">8 bit</div>
<div class="t" style="left:692.11px;top:413px;transform:scaleX(0.8929);color:#000">16 bit</div>
<div class="t" style="left:692.11px;top:433px;transform:scaleX(0.8929);color:#000">32 bit</div>
<div class="t" style="left:697.13px;top:468px;transform:scaleX(0.8726);color:#000">Use first group of XY samples</div>
<div class="t" style="left:697.11px;top:488px;transform:scaleX(0.8862);color:#000">Use evenly spaced XY samples</div>
<div class="t" style="left:312.12px;top:470px;transform:scaleX(0.8812);color:#000">seed = text file, cache = (200*32)+1, mask = 10011, (results)</div>
<div class="t" style="left:703.12px;top:527px;transform:scaleX(0.8788);color:#000">Ent test and display a file</div>
<!--/TEXT-->
</body></html>
